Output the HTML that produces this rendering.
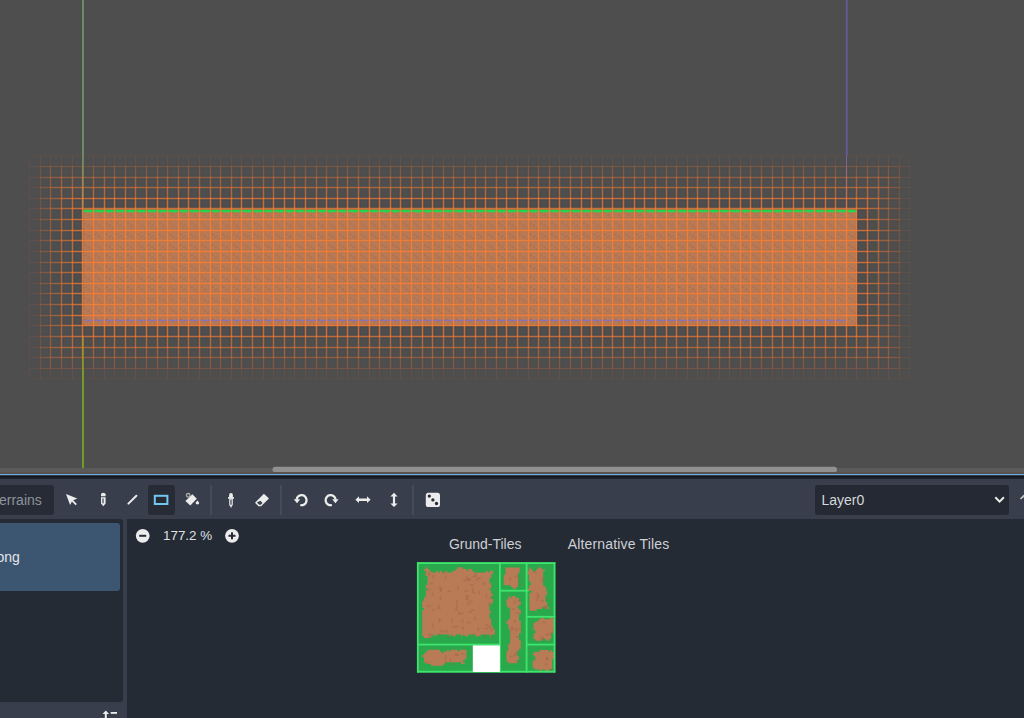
<!DOCTYPE html>
<html><head><meta charset="utf-8"><style>
*{margin:0;padding:0;box-sizing:border-box}
html,body{width:1024px;height:718px;overflow:hidden;background:#252b35;font-family:"Liberation Sans",sans-serif}
.abs{position:absolute}
#vp{position:absolute;left:0;top:0;width:1024px;height:473px;background:#4e4e4e;overflow:hidden}
.txt{position:absolute;white-space:nowrap;color:#cdd0d4;font-size:14px;line-height:16px}
</style></head><body>
<div id="vp">
<svg width="1024" height="473" style="position:absolute;left:0;top:0">
<rect x="82" y="336" width="2" height="137" fill="#729c2a"/>
<rect x="82" y="0" width="2" height="320" fill="#6a8a6a"/>
<rect x="845.8" y="0" width="2" height="156" fill="#5e5a94"/><rect x="846" y="156" width="1" height="165" fill="#6a64b0"/>
<rect x="82.80" y="208.92" width="774.09" height="116.84" fill="#b97a56"/>
<defs><pattern id="dp" patternUnits="userSpaceOnUse" x="82.800" y="208.920" width="10.604" height="10.622"><g fill="#7a4a30"><rect x="2.0" y="3.8" width="1.6" height="1.0"/><rect x="4.4" y="6.2" width="1.6" height="1.0"/><rect x="5.8" y="5.2" width="1.2" height="1.0"/><rect x="7.6" y="8.0" width="1.4" height="0.9"/></g></pattern></defs><rect x="82.80" y="212.92" width="774.09" height="112.84" fill="url(#dp)" opacity="0.35"/>
<g fill="#22d84a"><polygon points="82.80,209.82 93.40,209.82 93.40,211.62 92.40,213.02 91.20,211.62 90.10,213.12 88.80,211.62 87.60,213.22 86.40,211.62 85.20,212.72 84.00,211.62 82.80,211.62"/><polygon points="93.40,209.82 104.01,209.82 104.01,211.62 103.01,213.02 101.81,211.62 100.71,213.12 99.41,211.62 98.21,213.22 97.01,211.62 95.81,212.72 94.61,211.62 93.40,211.62"/><polygon points="104.01,209.82 114.61,209.82 114.61,211.62 113.61,213.02 112.41,211.62 111.31,213.12 110.01,211.62 108.81,213.22 107.61,211.62 106.41,212.72 105.21,211.62 104.01,211.62"/><polygon points="114.61,209.82 125.22,209.82 125.22,211.62 124.22,213.02 123.02,211.62 121.92,213.12 120.62,211.62 119.42,213.22 118.22,211.62 117.02,212.72 115.82,211.62 114.61,211.62"/><polygon points="125.22,209.82 135.82,209.82 135.82,211.62 134.82,213.02 133.62,211.62 132.52,213.12 131.22,211.62 130.02,213.22 128.82,211.62 127.62,212.72 126.42,211.62 125.22,211.62"/><polygon points="135.82,209.82 146.42,209.82 146.42,211.62 145.42,213.02 144.22,211.62 143.12,213.12 141.82,211.62 140.62,213.22 139.42,211.62 138.22,212.72 137.02,211.62 135.82,211.62"/><polygon points="146.42,209.82 157.03,209.82 157.03,211.62 156.03,213.02 154.83,211.62 153.73,213.12 152.43,211.62 151.23,213.22 150.03,211.62 148.83,212.72 147.63,211.62 146.42,211.62"/><polygon points="157.03,209.82 167.63,209.82 167.63,211.62 166.63,213.02 165.43,211.62 164.33,213.12 163.03,211.62 161.83,213.22 160.63,211.62 159.43,212.72 158.23,211.62 157.03,211.62"/><polygon points="167.63,209.82 178.24,209.82 178.24,211.62 177.24,213.02 176.04,211.62 174.94,213.12 173.64,211.62 172.44,213.22 171.24,211.62 170.04,212.72 168.84,211.62 167.63,211.62"/><polygon points="178.24,209.82 188.84,209.82 188.84,211.62 187.84,213.02 186.64,211.62 185.54,213.12 184.24,211.62 183.04,213.22 181.84,211.62 180.64,212.72 179.44,211.62 178.24,211.62"/><polygon points="188.84,209.82 199.44,209.82 199.44,211.62 198.44,213.02 197.24,211.62 196.14,213.12 194.84,211.62 193.64,213.22 192.44,211.62 191.24,212.72 190.04,211.62 188.84,211.62"/><polygon points="199.44,209.82 210.05,209.82 210.05,211.62 209.05,213.02 207.85,211.62 206.75,213.12 205.45,211.62 204.25,213.22 203.05,211.62 201.85,212.72 200.65,211.62 199.44,211.62"/><polygon points="210.05,209.82 220.65,209.82 220.65,211.62 219.65,213.02 218.45,211.62 217.35,213.12 216.05,211.62 214.85,213.22 213.65,211.62 212.45,212.72 211.25,211.62 210.05,211.62"/><polygon points="220.65,209.82 231.26,209.82 231.26,211.62 230.26,213.02 229.06,211.62 227.96,213.12 226.66,211.62 225.46,213.22 224.26,211.62 223.06,212.72 221.86,211.62 220.65,211.62"/><polygon points="231.26,209.82 241.86,209.82 241.86,211.62 240.86,213.02 239.66,211.62 238.56,213.12 237.26,211.62 236.06,213.22 234.86,211.62 233.66,212.72 232.46,211.62 231.26,211.62"/><polygon points="241.86,209.82 252.46,209.82 252.46,211.62 251.46,213.02 250.26,211.62 249.16,213.12 247.86,211.62 246.66,213.22 245.46,211.62 244.26,212.72 243.06,211.62 241.86,211.62"/><polygon points="252.46,209.82 263.07,209.82 263.07,211.62 262.07,213.02 260.87,211.62 259.77,213.12 258.47,211.62 257.27,213.22 256.07,211.62 254.87,212.72 253.67,211.62 252.46,211.62"/><polygon points="263.07,209.82 273.67,209.82 273.67,211.62 272.67,213.02 271.47,211.62 270.37,213.12 269.07,211.62 267.87,213.22 266.67,211.62 265.47,212.72 264.27,211.62 263.07,211.62"/><polygon points="273.67,209.82 284.28,209.82 284.28,211.62 283.28,213.02 282.08,211.62 280.98,213.12 279.68,211.62 278.48,213.22 277.28,211.62 276.08,212.72 274.88,211.62 273.67,211.62"/><polygon points="284.28,209.82 294.88,209.82 294.88,211.62 293.88,213.02 292.68,211.62 291.58,213.12 290.28,211.62 289.08,213.22 287.88,211.62 286.68,212.72 285.48,211.62 284.28,211.62"/><polygon points="294.88,209.82 305.48,209.82 305.48,211.62 304.48,213.02 303.28,211.62 302.18,213.12 300.88,211.62 299.68,213.22 298.48,211.62 297.28,212.72 296.08,211.62 294.88,211.62"/><polygon points="305.48,209.82 316.09,209.82 316.09,211.62 315.09,213.02 313.89,211.62 312.79,213.12 311.49,211.62 310.29,213.22 309.09,211.62 307.89,212.72 306.69,211.62 305.48,211.62"/><polygon points="316.09,209.82 326.69,209.82 326.69,211.62 325.69,213.02 324.49,211.62 323.39,213.12 322.09,211.62 320.89,213.22 319.69,211.62 318.49,212.72 317.29,211.62 316.09,211.62"/><polygon points="326.69,209.82 337.30,209.82 337.30,211.62 336.30,213.02 335.10,211.62 334.00,213.12 332.70,211.62 331.50,213.22 330.30,211.62 329.10,212.72 327.90,211.62 326.69,211.62"/><polygon points="337.30,209.82 347.90,209.82 347.90,211.62 346.90,213.02 345.70,211.62 344.60,213.12 343.30,211.62 342.10,213.22 340.90,211.62 339.70,212.72 338.50,211.62 337.30,211.62"/><polygon points="347.90,209.82 358.50,209.82 358.50,211.62 357.50,213.02 356.30,211.62 355.20,213.12 353.90,211.62 352.70,213.22 351.50,211.62 350.30,212.72 349.10,211.62 347.90,211.62"/><polygon points="358.50,209.82 369.11,209.82 369.11,211.62 368.11,213.02 366.91,211.62 365.81,213.12 364.51,211.62 363.31,213.22 362.11,211.62 360.91,212.72 359.71,211.62 358.50,211.62"/><polygon points="369.11,209.82 379.71,209.82 379.71,211.62 378.71,213.02 377.51,211.62 376.41,213.12 375.11,211.62 373.91,213.22 372.71,211.62 371.51,212.72 370.31,211.62 369.11,211.62"/><polygon points="379.71,209.82 390.32,209.82 390.32,211.62 389.32,213.02 388.12,211.62 387.02,213.12 385.72,211.62 384.52,213.22 383.32,211.62 382.12,212.72 380.92,211.62 379.71,211.62"/><polygon points="390.32,209.82 400.92,209.82 400.92,211.62 399.92,213.02 398.72,211.62 397.62,213.12 396.32,211.62 395.12,213.22 393.92,211.62 392.72,212.72 391.52,211.62 390.32,211.62"/><polygon points="400.92,209.82 411.52,209.82 411.52,211.62 410.52,213.02 409.32,211.62 408.22,213.12 406.92,211.62 405.72,213.22 404.52,211.62 403.32,212.72 402.12,211.62 400.92,211.62"/><polygon points="411.52,209.82 422.13,209.82 422.13,211.62 421.13,213.02 419.93,211.62 418.83,213.12 417.53,211.62 416.33,213.22 415.13,211.62 413.93,212.72 412.73,211.62 411.52,211.62"/><polygon points="422.13,209.82 432.73,209.82 432.73,211.62 431.73,213.02 430.53,211.62 429.43,213.12 428.13,211.62 426.93,213.22 425.73,211.62 424.53,212.72 423.33,211.62 422.13,211.62"/><polygon points="432.73,209.82 443.34,209.82 443.34,211.62 442.34,213.02 441.14,211.62 440.04,213.12 438.74,211.62 437.54,213.22 436.34,211.62 435.14,212.72 433.94,211.62 432.73,211.62"/><polygon points="443.34,209.82 453.94,209.82 453.94,211.62 452.94,213.02 451.74,211.62 450.64,213.12 449.34,211.62 448.14,213.22 446.94,211.62 445.74,212.72 444.54,211.62 443.34,211.62"/><polygon points="453.94,209.82 464.54,209.82 464.54,211.62 463.54,213.02 462.34,211.62 461.24,213.12 459.94,211.62 458.74,213.22 457.54,211.62 456.34,212.72 455.14,211.62 453.94,211.62"/><polygon points="464.54,209.82 475.15,209.82 475.15,211.62 474.15,213.02 472.95,211.62 471.85,213.12 470.55,211.62 469.35,213.22 468.15,211.62 466.95,212.72 465.75,211.62 464.54,211.62"/><polygon points="475.15,209.82 485.75,209.82 485.75,211.62 484.75,213.02 483.55,211.62 482.45,213.12 481.15,211.62 479.95,213.22 478.75,211.62 477.55,212.72 476.35,211.62 475.15,211.62"/><polygon points="485.75,209.82 496.36,209.82 496.36,211.62 495.36,213.02 494.16,211.62 493.06,213.12 491.76,211.62 490.56,213.22 489.36,211.62 488.16,212.72 486.96,211.62 485.75,211.62"/><polygon points="496.36,209.82 506.96,209.82 506.96,211.62 505.96,213.02 504.76,211.62 503.66,213.12 502.36,211.62 501.16,213.22 499.96,211.62 498.76,212.72 497.56,211.62 496.36,211.62"/><polygon points="506.96,209.82 517.56,209.82 517.56,211.62 516.56,213.02 515.36,211.62 514.26,213.12 512.96,211.62 511.76,213.22 510.56,211.62 509.36,212.72 508.16,211.62 506.96,211.62"/><polygon points="517.56,209.82 528.17,209.82 528.17,211.62 527.17,213.02 525.97,211.62 524.87,213.12 523.57,211.62 522.37,213.22 521.17,211.62 519.97,212.72 518.77,211.62 517.56,211.62"/><polygon points="528.17,209.82 538.77,209.82 538.77,211.62 537.77,213.02 536.57,211.62 535.47,213.12 534.17,211.62 532.97,213.22 531.77,211.62 530.57,212.72 529.37,211.62 528.17,211.62"/><polygon points="538.77,209.82 549.38,209.82 549.38,211.62 548.38,213.02 547.18,211.62 546.08,213.12 544.78,211.62 543.58,213.22 542.38,211.62 541.18,212.72 539.98,211.62 538.77,211.62"/><polygon points="549.38,209.82 559.98,209.82 559.98,211.62 558.98,213.02 557.78,211.62 556.68,213.12 555.38,211.62 554.18,213.22 552.98,211.62 551.78,212.72 550.58,211.62 549.38,211.62"/><polygon points="559.98,209.82 570.58,209.82 570.58,211.62 569.58,213.02 568.38,211.62 567.28,213.12 565.98,211.62 564.78,213.22 563.58,211.62 562.38,212.72 561.18,211.62 559.98,211.62"/><polygon points="570.58,209.82 581.19,209.82 581.19,211.62 580.19,213.02 578.99,211.62 577.89,213.12 576.59,211.62 575.39,213.22 574.19,211.62 572.99,212.72 571.79,211.62 570.58,211.62"/><polygon points="581.19,209.82 591.79,209.82 591.79,211.62 590.79,213.02 589.59,211.62 588.49,213.12 587.19,211.62 585.99,213.22 584.79,211.62 583.59,212.72 582.39,211.62 581.19,211.62"/><polygon points="591.79,209.82 602.40,209.82 602.40,211.62 601.40,213.02 600.20,211.62 599.10,213.12 597.80,211.62 596.60,213.22 595.40,211.62 594.20,212.72 593.00,211.62 591.79,211.62"/><polygon points="602.40,209.82 613.00,209.82 613.00,211.62 612.00,213.02 610.80,211.62 609.70,213.12 608.40,211.62 607.20,213.22 606.00,211.62 604.80,212.72 603.60,211.62 602.40,211.62"/><polygon points="613.00,209.82 623.60,209.82 623.60,211.62 622.60,213.02 621.40,211.62 620.30,213.12 619.00,211.62 617.80,213.22 616.60,211.62 615.40,212.72 614.20,211.62 613.00,211.62"/><polygon points="623.60,209.82 634.21,209.82 634.21,211.62 633.21,213.02 632.01,211.62 630.91,213.12 629.61,211.62 628.41,213.22 627.21,211.62 626.01,212.72 624.81,211.62 623.60,211.62"/><polygon points="634.21,209.82 644.81,209.82 644.81,211.62 643.81,213.02 642.61,211.62 641.51,213.12 640.21,211.62 639.01,213.22 637.81,211.62 636.61,212.72 635.41,211.62 634.21,211.62"/><polygon points="644.81,209.82 655.42,209.82 655.42,211.62 654.42,213.02 653.22,211.62 652.12,213.12 650.82,211.62 649.62,213.22 648.42,211.62 647.22,212.72 646.02,211.62 644.81,211.62"/><polygon points="655.42,209.82 666.02,209.82 666.02,211.62 665.02,213.02 663.82,211.62 662.72,213.12 661.42,211.62 660.22,213.22 659.02,211.62 657.82,212.72 656.62,211.62 655.42,211.62"/><polygon points="666.02,209.82 676.62,209.82 676.62,211.62 675.62,213.02 674.42,211.62 673.32,213.12 672.02,211.62 670.82,213.22 669.62,211.62 668.42,212.72 667.22,211.62 666.02,211.62"/><polygon points="676.62,209.82 687.23,209.82 687.23,211.62 686.23,213.02 685.03,211.62 683.93,213.12 682.63,211.62 681.43,213.22 680.23,211.62 679.03,212.72 677.83,211.62 676.62,211.62"/><polygon points="687.23,209.82 697.83,209.82 697.83,211.62 696.83,213.02 695.63,211.62 694.53,213.12 693.23,211.62 692.03,213.22 690.83,211.62 689.63,212.72 688.43,211.62 687.23,211.62"/><polygon points="697.83,209.82 708.44,209.82 708.44,211.62 707.44,213.02 706.24,211.62 705.14,213.12 703.84,211.62 702.64,213.22 701.44,211.62 700.24,212.72 699.04,211.62 697.83,211.62"/><polygon points="708.44,209.82 719.04,209.82 719.04,211.62 718.04,213.02 716.84,211.62 715.74,213.12 714.44,211.62 713.24,213.22 712.04,211.62 710.84,212.72 709.64,211.62 708.44,211.62"/><polygon points="719.04,209.82 729.64,209.82 729.64,211.62 728.64,213.02 727.44,211.62 726.34,213.12 725.04,211.62 723.84,213.22 722.64,211.62 721.44,212.72 720.24,211.62 719.04,211.62"/><polygon points="729.64,209.82 740.25,209.82 740.25,211.62 739.25,213.02 738.05,211.62 736.95,213.12 735.65,211.62 734.45,213.22 733.25,211.62 732.05,212.72 730.85,211.62 729.64,211.62"/><polygon points="740.25,209.82 750.85,209.82 750.85,211.62 749.85,213.02 748.65,211.62 747.55,213.12 746.25,211.62 745.05,213.22 743.85,211.62 742.65,212.72 741.45,211.62 740.25,211.62"/><polygon points="750.85,209.82 761.46,209.82 761.46,211.62 760.46,213.02 759.26,211.62 758.16,213.12 756.86,211.62 755.66,213.22 754.46,211.62 753.26,212.72 752.06,211.62 750.85,211.62"/><polygon points="761.46,209.82 772.06,209.82 772.06,211.62 771.06,213.02 769.86,211.62 768.76,213.12 767.46,211.62 766.26,213.22 765.06,211.62 763.86,212.72 762.66,211.62 761.46,211.62"/><polygon points="772.06,209.82 782.66,209.82 782.66,211.62 781.66,213.02 780.46,211.62 779.36,213.12 778.06,211.62 776.86,213.22 775.66,211.62 774.46,212.72 773.26,211.62 772.06,211.62"/><polygon points="782.66,209.82 793.27,209.82 793.27,211.62 792.27,213.02 791.07,211.62 789.97,213.12 788.67,211.62 787.47,213.22 786.27,211.62 785.07,212.72 783.87,211.62 782.66,211.62"/><polygon points="793.27,209.82 803.87,209.82 803.87,211.62 802.87,213.02 801.67,211.62 800.57,213.12 799.27,211.62 798.07,213.22 796.87,211.62 795.67,212.72 794.47,211.62 793.27,211.62"/><polygon points="803.87,209.82 814.48,209.82 814.48,211.62 813.48,213.02 812.28,211.62 811.18,213.12 809.88,211.62 808.68,213.22 807.48,211.62 806.28,212.72 805.08,211.62 803.87,211.62"/><polygon points="814.48,209.82 825.08,209.82 825.08,211.62 824.08,213.02 822.88,211.62 821.78,213.12 820.48,211.62 819.28,213.22 818.08,211.62 816.88,212.72 815.68,211.62 814.48,211.62"/><polygon points="825.08,209.82 835.68,209.82 835.68,211.62 834.68,213.02 833.48,211.62 832.38,213.12 831.08,211.62 829.88,213.22 828.68,211.62 827.48,212.72 826.28,211.62 825.08,211.62"/><polygon points="835.68,209.82 846.29,209.82 846.29,211.62 845.29,213.02 844.09,211.62 842.99,213.12 841.69,211.62 840.49,213.22 839.29,211.62 838.09,212.72 836.89,211.62 835.68,211.62"/><polygon points="846.29,209.82 856.89,209.82 856.89,211.62 855.89,213.02 854.69,211.62 853.59,213.12 852.29,211.62 851.09,213.22 849.89,211.62 848.69,212.72 847.49,211.62 846.29,211.62"/></g>
<g fill="#e06050" fill-opacity="0.7"><rect x="84.60" y="212.82" width="1.2" height="1.2"/><rect x="88.00" y="212.82" width="1.2" height="1.2"/><rect x="91.20" y="212.82" width="1.2" height="1.2"/><rect x="95.20" y="212.82" width="1.2" height="1.2"/><rect x="98.60" y="212.82" width="1.2" height="1.2"/><rect x="101.80" y="212.82" width="1.2" height="1.2"/><rect x="105.81" y="212.82" width="1.2" height="1.2"/><rect x="109.21" y="212.82" width="1.2" height="1.2"/><rect x="112.41" y="212.82" width="1.2" height="1.2"/><rect x="116.41" y="212.82" width="1.2" height="1.2"/><rect x="119.81" y="212.82" width="1.2" height="1.2"/><rect x="123.01" y="212.82" width="1.2" height="1.2"/><rect x="127.02" y="212.82" width="1.2" height="1.2"/><rect x="130.42" y="212.82" width="1.2" height="1.2"/><rect x="133.62" y="212.82" width="1.2" height="1.2"/><rect x="137.62" y="212.82" width="1.2" height="1.2"/><rect x="141.02" y="212.82" width="1.2" height="1.2"/><rect x="144.22" y="212.82" width="1.2" height="1.2"/><rect x="148.22" y="212.82" width="1.2" height="1.2"/><rect x="151.62" y="212.82" width="1.2" height="1.2"/><rect x="154.82" y="212.82" width="1.2" height="1.2"/><rect x="158.83" y="212.82" width="1.2" height="1.2"/><rect x="162.23" y="212.82" width="1.2" height="1.2"/><rect x="165.43" y="212.82" width="1.2" height="1.2"/><rect x="169.43" y="212.82" width="1.2" height="1.2"/><rect x="172.83" y="212.82" width="1.2" height="1.2"/><rect x="176.03" y="212.82" width="1.2" height="1.2"/><rect x="180.04" y="212.82" width="1.2" height="1.2"/><rect x="183.44" y="212.82" width="1.2" height="1.2"/><rect x="186.64" y="212.82" width="1.2" height="1.2"/><rect x="190.64" y="212.82" width="1.2" height="1.2"/><rect x="194.04" y="212.82" width="1.2" height="1.2"/><rect x="197.24" y="212.82" width="1.2" height="1.2"/><rect x="201.24" y="212.82" width="1.2" height="1.2"/><rect x="204.64" y="212.82" width="1.2" height="1.2"/><rect x="207.84" y="212.82" width="1.2" height="1.2"/><rect x="211.85" y="212.82" width="1.2" height="1.2"/><rect x="215.25" y="212.82" width="1.2" height="1.2"/><rect x="218.45" y="212.82" width="1.2" height="1.2"/><rect x="222.45" y="212.82" width="1.2" height="1.2"/><rect x="225.85" y="212.82" width="1.2" height="1.2"/><rect x="229.05" y="212.82" width="1.2" height="1.2"/><rect x="233.06" y="212.82" width="1.2" height="1.2"/><rect x="236.46" y="212.82" width="1.2" height="1.2"/><rect x="239.66" y="212.82" width="1.2" height="1.2"/><rect x="243.66" y="212.82" width="1.2" height="1.2"/><rect x="247.06" y="212.82" width="1.2" height="1.2"/><rect x="250.26" y="212.82" width="1.2" height="1.2"/><rect x="254.26" y="212.82" width="1.2" height="1.2"/><rect x="257.66" y="212.82" width="1.2" height="1.2"/><rect x="260.86" y="212.82" width="1.2" height="1.2"/><rect x="264.87" y="212.82" width="1.2" height="1.2"/><rect x="268.27" y="212.82" width="1.2" height="1.2"/><rect x="271.47" y="212.82" width="1.2" height="1.2"/><rect x="275.47" y="212.82" width="1.2" height="1.2"/><rect x="278.87" y="212.82" width="1.2" height="1.2"/><rect x="282.07" y="212.82" width="1.2" height="1.2"/><rect x="286.08" y="212.82" width="1.2" height="1.2"/><rect x="289.48" y="212.82" width="1.2" height="1.2"/><rect x="292.68" y="212.82" width="1.2" height="1.2"/><rect x="296.68" y="212.82" width="1.2" height="1.2"/><rect x="300.08" y="212.82" width="1.2" height="1.2"/><rect x="303.28" y="212.82" width="1.2" height="1.2"/><rect x="307.28" y="212.82" width="1.2" height="1.2"/><rect x="310.68" y="212.82" width="1.2" height="1.2"/><rect x="313.88" y="212.82" width="1.2" height="1.2"/><rect x="317.89" y="212.82" width="1.2" height="1.2"/><rect x="321.29" y="212.82" width="1.2" height="1.2"/><rect x="324.49" y="212.82" width="1.2" height="1.2"/><rect x="328.49" y="212.82" width="1.2" height="1.2"/><rect x="331.89" y="212.82" width="1.2" height="1.2"/><rect x="335.09" y="212.82" width="1.2" height="1.2"/><rect x="339.10" y="212.82" width="1.2" height="1.2"/><rect x="342.50" y="212.82" width="1.2" height="1.2"/><rect x="345.70" y="212.82" width="1.2" height="1.2"/><rect x="349.70" y="212.82" width="1.2" height="1.2"/><rect x="353.10" y="212.82" width="1.2" height="1.2"/><rect x="356.30" y="212.82" width="1.2" height="1.2"/><rect x="360.30" y="212.82" width="1.2" height="1.2"/><rect x="363.70" y="212.82" width="1.2" height="1.2"/><rect x="366.90" y="212.82" width="1.2" height="1.2"/><rect x="370.91" y="212.82" width="1.2" height="1.2"/><rect x="374.31" y="212.82" width="1.2" height="1.2"/><rect x="377.51" y="212.82" width="1.2" height="1.2"/><rect x="381.51" y="212.82" width="1.2" height="1.2"/><rect x="384.91" y="212.82" width="1.2" height="1.2"/><rect x="388.11" y="212.82" width="1.2" height="1.2"/><rect x="392.12" y="212.82" width="1.2" height="1.2"/><rect x="395.52" y="212.82" width="1.2" height="1.2"/><rect x="398.72" y="212.82" width="1.2" height="1.2"/><rect x="402.72" y="212.82" width="1.2" height="1.2"/><rect x="406.12" y="212.82" width="1.2" height="1.2"/><rect x="409.32" y="212.82" width="1.2" height="1.2"/><rect x="413.32" y="212.82" width="1.2" height="1.2"/><rect x="416.72" y="212.82" width="1.2" height="1.2"/><rect x="419.92" y="212.82" width="1.2" height="1.2"/><rect x="423.93" y="212.82" width="1.2" height="1.2"/><rect x="427.33" y="212.82" width="1.2" height="1.2"/><rect x="430.53" y="212.82" width="1.2" height="1.2"/><rect x="434.53" y="212.82" width="1.2" height="1.2"/><rect x="437.93" y="212.82" width="1.2" height="1.2"/><rect x="441.13" y="212.82" width="1.2" height="1.2"/><rect x="445.14" y="212.82" width="1.2" height="1.2"/><rect x="448.54" y="212.82" width="1.2" height="1.2"/><rect x="451.74" y="212.82" width="1.2" height="1.2"/><rect x="455.74" y="212.82" width="1.2" height="1.2"/><rect x="459.14" y="212.82" width="1.2" height="1.2"/><rect x="462.34" y="212.82" width="1.2" height="1.2"/><rect x="466.34" y="212.82" width="1.2" height="1.2"/><rect x="469.74" y="212.82" width="1.2" height="1.2"/><rect x="472.94" y="212.82" width="1.2" height="1.2"/><rect x="476.95" y="212.82" width="1.2" height="1.2"/><rect x="480.35" y="212.82" width="1.2" height="1.2"/><rect x="483.55" y="212.82" width="1.2" height="1.2"/><rect x="487.55" y="212.82" width="1.2" height="1.2"/><rect x="490.95" y="212.82" width="1.2" height="1.2"/><rect x="494.15" y="212.82" width="1.2" height="1.2"/><rect x="498.16" y="212.82" width="1.2" height="1.2"/><rect x="501.56" y="212.82" width="1.2" height="1.2"/><rect x="504.76" y="212.82" width="1.2" height="1.2"/><rect x="508.76" y="212.82" width="1.2" height="1.2"/><rect x="512.16" y="212.82" width="1.2" height="1.2"/><rect x="515.36" y="212.82" width="1.2" height="1.2"/><rect x="519.36" y="212.82" width="1.2" height="1.2"/><rect x="522.76" y="212.82" width="1.2" height="1.2"/><rect x="525.96" y="212.82" width="1.2" height="1.2"/><rect x="529.97" y="212.82" width="1.2" height="1.2"/><rect x="533.37" y="212.82" width="1.2" height="1.2"/><rect x="536.57" y="212.82" width="1.2" height="1.2"/><rect x="540.57" y="212.82" width="1.2" height="1.2"/><rect x="543.97" y="212.82" width="1.2" height="1.2"/><rect x="547.17" y="212.82" width="1.2" height="1.2"/><rect x="551.18" y="212.82" width="1.2" height="1.2"/><rect x="554.58" y="212.82" width="1.2" height="1.2"/><rect x="557.78" y="212.82" width="1.2" height="1.2"/><rect x="561.78" y="212.82" width="1.2" height="1.2"/><rect x="565.18" y="212.82" width="1.2" height="1.2"/><rect x="568.38" y="212.82" width="1.2" height="1.2"/><rect x="572.38" y="212.82" width="1.2" height="1.2"/><rect x="575.78" y="212.82" width="1.2" height="1.2"/><rect x="578.98" y="212.82" width="1.2" height="1.2"/><rect x="582.99" y="212.82" width="1.2" height="1.2"/><rect x="586.39" y="212.82" width="1.2" height="1.2"/><rect x="589.59" y="212.82" width="1.2" height="1.2"/><rect x="593.59" y="212.82" width="1.2" height="1.2"/><rect x="596.99" y="212.82" width="1.2" height="1.2"/><rect x="600.19" y="212.82" width="1.2" height="1.2"/><rect x="604.20" y="212.82" width="1.2" height="1.2"/><rect x="607.60" y="212.82" width="1.2" height="1.2"/><rect x="610.80" y="212.82" width="1.2" height="1.2"/><rect x="614.80" y="212.82" width="1.2" height="1.2"/><rect x="618.20" y="212.82" width="1.2" height="1.2"/><rect x="621.40" y="212.82" width="1.2" height="1.2"/><rect x="625.40" y="212.82" width="1.2" height="1.2"/><rect x="628.80" y="212.82" width="1.2" height="1.2"/><rect x="632.00" y="212.82" width="1.2" height="1.2"/><rect x="636.01" y="212.82" width="1.2" height="1.2"/><rect x="639.41" y="212.82" width="1.2" height="1.2"/><rect x="642.61" y="212.82" width="1.2" height="1.2"/><rect x="646.61" y="212.82" width="1.2" height="1.2"/><rect x="650.01" y="212.82" width="1.2" height="1.2"/><rect x="653.21" y="212.82" width="1.2" height="1.2"/><rect x="657.22" y="212.82" width="1.2" height="1.2"/><rect x="660.62" y="212.82" width="1.2" height="1.2"/><rect x="663.82" y="212.82" width="1.2" height="1.2"/><rect x="667.82" y="212.82" width="1.2" height="1.2"/><rect x="671.22" y="212.82" width="1.2" height="1.2"/><rect x="674.42" y="212.82" width="1.2" height="1.2"/><rect x="678.42" y="212.82" width="1.2" height="1.2"/><rect x="681.82" y="212.82" width="1.2" height="1.2"/><rect x="685.02" y="212.82" width="1.2" height="1.2"/><rect x="689.03" y="212.82" width="1.2" height="1.2"/><rect x="692.43" y="212.82" width="1.2" height="1.2"/><rect x="695.63" y="212.82" width="1.2" height="1.2"/><rect x="699.63" y="212.82" width="1.2" height="1.2"/><rect x="703.03" y="212.82" width="1.2" height="1.2"/><rect x="706.23" y="212.82" width="1.2" height="1.2"/><rect x="710.24" y="212.82" width="1.2" height="1.2"/><rect x="713.64" y="212.82" width="1.2" height="1.2"/><rect x="716.84" y="212.82" width="1.2" height="1.2"/><rect x="720.84" y="212.82" width="1.2" height="1.2"/><rect x="724.24" y="212.82" width="1.2" height="1.2"/><rect x="727.44" y="212.82" width="1.2" height="1.2"/><rect x="731.44" y="212.82" width="1.2" height="1.2"/><rect x="734.84" y="212.82" width="1.2" height="1.2"/><rect x="738.04" y="212.82" width="1.2" height="1.2"/><rect x="742.05" y="212.82" width="1.2" height="1.2"/><rect x="745.45" y="212.82" width="1.2" height="1.2"/><rect x="748.65" y="212.82" width="1.2" height="1.2"/><rect x="752.65" y="212.82" width="1.2" height="1.2"/><rect x="756.05" y="212.82" width="1.2" height="1.2"/><rect x="759.25" y="212.82" width="1.2" height="1.2"/><rect x="763.26" y="212.82" width="1.2" height="1.2"/><rect x="766.66" y="212.82" width="1.2" height="1.2"/><rect x="769.86" y="212.82" width="1.2" height="1.2"/><rect x="773.86" y="212.82" width="1.2" height="1.2"/><rect x="777.26" y="212.82" width="1.2" height="1.2"/><rect x="780.46" y="212.82" width="1.2" height="1.2"/><rect x="784.46" y="212.82" width="1.2" height="1.2"/><rect x="787.86" y="212.82" width="1.2" height="1.2"/><rect x="791.06" y="212.82" width="1.2" height="1.2"/><rect x="795.07" y="212.82" width="1.2" height="1.2"/><rect x="798.47" y="212.82" width="1.2" height="1.2"/><rect x="801.67" y="212.82" width="1.2" height="1.2"/><rect x="805.67" y="212.82" width="1.2" height="1.2"/><rect x="809.07" y="212.82" width="1.2" height="1.2"/><rect x="812.27" y="212.82" width="1.2" height="1.2"/><rect x="816.28" y="212.82" width="1.2" height="1.2"/><rect x="819.68" y="212.82" width="1.2" height="1.2"/><rect x="822.88" y="212.82" width="1.2" height="1.2"/><rect x="826.88" y="212.82" width="1.2" height="1.2"/><rect x="830.28" y="212.82" width="1.2" height="1.2"/><rect x="833.48" y="212.82" width="1.2" height="1.2"/><rect x="837.48" y="212.82" width="1.2" height="1.2"/><rect x="840.88" y="212.82" width="1.2" height="1.2"/><rect x="844.08" y="212.82" width="1.2" height="1.2"/><rect x="848.09" y="212.82" width="1.2" height="1.2"/><rect x="851.49" y="212.82" width="1.2" height="1.2"/><rect x="854.69" y="212.82" width="1.2" height="1.2"/></g>
<rect x="84" y="319.8" width="762" height="1.3" fill="#7870dc" fill-opacity="0.75"/>
<mask id="hm"><rect x="0" y="0" width="1024" height="473" fill="#fff"/><rect x="83.80" y="209.92" width="772.09" height="114.84" fill="#444"/></mask><g fill="#102848" mask="url(#hm)"><rect x="27.70" y="155.81" width="3.60" height="223.06" fill-opacity="0.011"/><rect x="38.70" y="155.81" width="3.60" height="10.62" fill-opacity="0.022"/><rect x="38.70" y="166.43" width="3.60" height="201.82" fill-opacity="0.042"/><rect x="38.70" y="368.25" width="3.60" height="10.62" fill-opacity="0.022"/><rect x="48.70" y="155.81" width="3.60" height="10.62" fill-opacity="0.022"/><rect x="48.70" y="166.43" width="3.60" height="10.62" fill-opacity="0.061"/><rect x="48.70" y="177.05" width="3.60" height="180.57" fill-opacity="0.080"/><rect x="48.70" y="357.63" width="3.60" height="10.62" fill-opacity="0.061"/><rect x="48.70" y="368.25" width="3.60" height="10.62" fill-opacity="0.022"/><rect x="59.70" y="155.81" width="3.60" height="10.62" fill-opacity="0.022"/><rect x="59.70" y="166.43" width="3.60" height="10.62" fill-opacity="0.061"/><rect x="59.70" y="177.05" width="3.60" height="10.62" fill-opacity="0.096"/><rect x="59.70" y="187.68" width="3.60" height="159.33" fill-opacity="0.113"/><rect x="59.70" y="347.01" width="3.60" height="10.62" fill-opacity="0.096"/><rect x="59.70" y="357.63" width="3.60" height="10.62" fill-opacity="0.061"/><rect x="59.70" y="368.25" width="3.60" height="10.62" fill-opacity="0.022"/><rect x="70.70" y="155.81" width="3.60" height="10.62" fill-opacity="0.022"/><rect x="70.70" y="166.43" width="3.60" height="10.62" fill-opacity="0.061"/><rect x="70.70" y="177.05" width="3.60" height="10.62" fill-opacity="0.096"/><rect x="70.70" y="187.68" width="3.60" height="10.62" fill-opacity="0.127"/><rect x="70.70" y="198.30" width="3.60" height="138.09" fill-opacity="0.141"/><rect x="70.70" y="336.38" width="3.60" height="10.62" fill-opacity="0.127"/><rect x="70.70" y="347.01" width="3.60" height="10.62" fill-opacity="0.096"/><rect x="70.70" y="357.63" width="3.60" height="10.62" fill-opacity="0.061"/><rect x="70.70" y="368.25" width="3.60" height="10.62" fill-opacity="0.022"/><rect x="80.70" y="155.81" width="3.60" height="10.62" fill-opacity="0.022"/><rect x="80.70" y="166.43" width="3.60" height="10.62" fill-opacity="0.061"/><rect x="80.70" y="177.05" width="3.60" height="10.62" fill-opacity="0.096"/><rect x="80.70" y="187.68" width="3.60" height="10.62" fill-opacity="0.127"/><rect x="80.70" y="198.30" width="3.60" height="10.62" fill-opacity="0.154"/><rect x="80.70" y="208.92" width="3.60" height="116.84" fill-opacity="0.160"/><rect x="80.70" y="325.76" width="3.60" height="10.62" fill-opacity="0.154"/><rect x="80.70" y="336.38" width="3.60" height="10.62" fill-opacity="0.127"/><rect x="80.70" y="347.01" width="3.60" height="10.62" fill-opacity="0.096"/><rect x="80.70" y="357.63" width="3.60" height="10.62" fill-opacity="0.061"/><rect x="80.70" y="368.25" width="3.60" height="10.62" fill-opacity="0.022"/><rect x="91.70" y="155.81" width="3.60" height="10.62" fill-opacity="0.022"/><rect x="91.70" y="166.43" width="3.60" height="10.62" fill-opacity="0.061"/><rect x="91.70" y="177.05" width="3.60" height="10.62" fill-opacity="0.096"/><rect x="91.70" y="187.68" width="3.60" height="10.62" fill-opacity="0.127"/><rect x="91.70" y="198.30" width="3.60" height="10.62" fill-opacity="0.154"/><rect x="91.70" y="208.92" width="3.60" height="116.84" fill-opacity="0.165"/><rect x="91.70" y="325.76" width="3.60" height="10.62" fill-opacity="0.154"/><rect x="91.70" y="336.38" width="3.60" height="10.62" fill-opacity="0.127"/><rect x="91.70" y="347.01" width="3.60" height="10.62" fill-opacity="0.096"/><rect x="91.70" y="357.63" width="3.60" height="10.62" fill-opacity="0.061"/><rect x="91.70" y="368.25" width="3.60" height="10.62" fill-opacity="0.022"/><rect x="102.70" y="155.81" width="3.60" height="10.62" fill-opacity="0.022"/><rect x="102.70" y="166.43" width="3.60" height="10.62" fill-opacity="0.061"/><rect x="102.70" y="177.05" width="3.60" height="10.62" fill-opacity="0.096"/><rect x="102.70" y="187.68" width="3.60" height="10.62" fill-opacity="0.127"/><rect x="102.70" y="198.30" width="3.60" height="10.62" fill-opacity="0.154"/><rect x="102.70" y="208.92" width="3.60" height="116.84" fill-opacity="0.165"/><rect x="102.70" y="325.76" width="3.60" height="10.62" fill-opacity="0.154"/><rect x="102.70" y="336.38" width="3.60" height="10.62" fill-opacity="0.127"/><rect x="102.70" y="347.01" width="3.60" height="10.62" fill-opacity="0.096"/><rect x="102.70" y="357.63" width="3.60" height="10.62" fill-opacity="0.061"/><rect x="102.70" y="368.25" width="3.60" height="10.62" fill-opacity="0.022"/><rect x="112.70" y="155.81" width="3.60" height="10.62" fill-opacity="0.022"/><rect x="112.70" y="166.43" width="3.60" height="10.62" fill-opacity="0.061"/><rect x="112.70" y="177.05" width="3.60" height="10.62" fill-opacity="0.096"/><rect x="112.70" y="187.68" width="3.60" height="10.62" fill-opacity="0.127"/><rect x="112.70" y="198.30" width="3.60" height="10.62" fill-opacity="0.154"/><rect x="112.70" y="208.92" width="3.60" height="116.84" fill-opacity="0.165"/><rect x="112.70" y="325.76" width="3.60" height="10.62" fill-opacity="0.154"/><rect x="112.70" y="336.38" width="3.60" height="10.62" fill-opacity="0.127"/><rect x="112.70" y="347.01" width="3.60" height="10.62" fill-opacity="0.096"/><rect x="112.70" y="357.63" width="3.60" height="10.62" fill-opacity="0.061"/><rect x="112.70" y="368.25" width="3.60" height="10.62" fill-opacity="0.022"/><rect x="123.70" y="155.81" width="3.60" height="10.62" fill-opacity="0.022"/><rect x="123.70" y="166.43" width="3.60" height="10.62" fill-opacity="0.061"/><rect x="123.70" y="177.05" width="3.60" height="10.62" fill-opacity="0.096"/><rect x="123.70" y="187.68" width="3.60" height="10.62" fill-opacity="0.127"/><rect x="123.70" y="198.30" width="3.60" height="10.62" fill-opacity="0.154"/><rect x="123.70" y="208.92" width="3.60" height="116.84" fill-opacity="0.165"/><rect x="123.70" y="325.76" width="3.60" height="10.62" fill-opacity="0.154"/><rect x="123.70" y="336.38" width="3.60" height="10.62" fill-opacity="0.127"/><rect x="123.70" y="347.01" width="3.60" height="10.62" fill-opacity="0.096"/><rect x="123.70" y="357.63" width="3.60" height="10.62" fill-opacity="0.061"/><rect x="123.70" y="368.25" width="3.60" height="10.62" fill-opacity="0.022"/><rect x="133.70" y="155.81" width="3.60" height="10.62" fill-opacity="0.022"/><rect x="133.70" y="166.43" width="3.60" height="10.62" fill-opacity="0.061"/><rect x="133.70" y="177.05" width="3.60" height="10.62" fill-opacity="0.096"/><rect x="133.70" y="187.68" width="3.60" height="10.62" fill-opacity="0.127"/><rect x="133.70" y="198.30" width="3.60" height="10.62" fill-opacity="0.154"/><rect x="133.70" y="208.92" width="3.60" height="116.84" fill-opacity="0.165"/><rect x="133.70" y="325.76" width="3.60" height="10.62" fill-opacity="0.154"/><rect x="133.70" y="336.38" width="3.60" height="10.62" fill-opacity="0.127"/><rect x="133.70" y="347.01" width="3.60" height="10.62" fill-opacity="0.096"/><rect x="133.70" y="357.63" width="3.60" height="10.62" fill-opacity="0.061"/><rect x="133.70" y="368.25" width="3.60" height="10.62" fill-opacity="0.022"/><rect x="144.70" y="155.81" width="3.60" height="10.62" fill-opacity="0.022"/><rect x="144.70" y="166.43" width="3.60" height="10.62" fill-opacity="0.061"/><rect x="144.70" y="177.05" width="3.60" height="10.62" fill-opacity="0.096"/><rect x="144.70" y="187.68" width="3.60" height="10.62" fill-opacity="0.127"/><rect x="144.70" y="198.30" width="3.60" height="10.62" fill-opacity="0.154"/><rect x="144.70" y="208.92" width="3.60" height="116.84" fill-opacity="0.165"/><rect x="144.70" y="325.76" width="3.60" height="10.62" fill-opacity="0.154"/><rect x="144.70" y="336.38" width="3.60" height="10.62" fill-opacity="0.127"/><rect x="144.70" y="347.01" width="3.60" height="10.62" fill-opacity="0.096"/><rect x="144.70" y="357.63" width="3.60" height="10.62" fill-opacity="0.061"/><rect x="144.70" y="368.25" width="3.60" height="10.62" fill-opacity="0.022"/><rect x="155.70" y="155.81" width="3.60" height="10.62" fill-opacity="0.022"/><rect x="155.70" y="166.43" width="3.60" height="10.62" fill-opacity="0.061"/><rect x="155.70" y="177.05" width="3.60" height="10.62" fill-opacity="0.096"/><rect x="155.70" y="187.68" width="3.60" height="10.62" fill-opacity="0.127"/><rect x="155.70" y="198.30" width="3.60" height="10.62" fill-opacity="0.154"/><rect x="155.70" y="208.92" width="3.60" height="116.84" fill-opacity="0.165"/><rect x="155.70" y="325.76" width="3.60" height="10.62" fill-opacity="0.154"/><rect x="155.70" y="336.38" width="3.60" height="10.62" fill-opacity="0.127"/><rect x="155.70" y="347.01" width="3.60" height="10.62" fill-opacity="0.096"/><rect x="155.70" y="357.63" width="3.60" height="10.62" fill-opacity="0.061"/><rect x="155.70" y="368.25" width="3.60" height="10.62" fill-opacity="0.022"/><rect x="165.70" y="155.81" width="3.60" height="10.62" fill-opacity="0.022"/><rect x="165.70" y="166.43" width="3.60" height="10.62" fill-opacity="0.061"/><rect x="165.70" y="177.05" width="3.60" height="10.62" fill-opacity="0.096"/><rect x="165.70" y="187.68" width="3.60" height="10.62" fill-opacity="0.127"/><rect x="165.70" y="198.30" width="3.60" height="10.62" fill-opacity="0.154"/><rect x="165.70" y="208.92" width="3.60" height="116.84" fill-opacity="0.165"/><rect x="165.70" y="325.76" width="3.60" height="10.62" fill-opacity="0.154"/><rect x="165.70" y="336.38" width="3.60" height="10.62" fill-opacity="0.127"/><rect x="165.70" y="347.01" width="3.60" height="10.62" fill-opacity="0.096"/><rect x="165.70" y="357.63" width="3.60" height="10.62" fill-opacity="0.061"/><rect x="165.70" y="368.25" width="3.60" height="10.62" fill-opacity="0.022"/><rect x="176.70" y="155.81" width="3.60" height="10.62" fill-opacity="0.022"/><rect x="176.70" y="166.43" width="3.60" height="10.62" fill-opacity="0.061"/><rect x="176.70" y="177.05" width="3.60" height="10.62" fill-opacity="0.096"/><rect x="176.70" y="187.68" width="3.60" height="10.62" fill-opacity="0.127"/><rect x="176.70" y="198.30" width="3.60" height="10.62" fill-opacity="0.154"/><rect x="176.70" y="208.92" width="3.60" height="116.84" fill-opacity="0.165"/><rect x="176.70" y="325.76" width="3.60" height="10.62" fill-opacity="0.154"/><rect x="176.70" y="336.38" width="3.60" height="10.62" fill-opacity="0.127"/><rect x="176.70" y="347.01" width="3.60" height="10.62" fill-opacity="0.096"/><rect x="176.70" y="357.63" width="3.60" height="10.62" fill-opacity="0.061"/><rect x="176.70" y="368.25" width="3.60" height="10.62" fill-opacity="0.022"/><rect x="186.70" y="155.81" width="3.60" height="10.62" fill-opacity="0.022"/><rect x="186.70" y="166.43" width="3.60" height="10.62" fill-opacity="0.061"/><rect x="186.70" y="177.05" width="3.60" height="10.62" fill-opacity="0.096"/><rect x="186.70" y="187.68" width="3.60" height="10.62" fill-opacity="0.127"/><rect x="186.70" y="198.30" width="3.60" height="10.62" fill-opacity="0.154"/><rect x="186.70" y="208.92" width="3.60" height="116.84" fill-opacity="0.165"/><rect x="186.70" y="325.76" width="3.60" height="10.62" fill-opacity="0.154"/><rect x="186.70" y="336.38" width="3.60" height="10.62" fill-opacity="0.127"/><rect x="186.70" y="347.01" width="3.60" height="10.62" fill-opacity="0.096"/><rect x="186.70" y="357.63" width="3.60" height="10.62" fill-opacity="0.061"/><rect x="186.70" y="368.25" width="3.60" height="10.62" fill-opacity="0.022"/><rect x="197.70" y="155.81" width="3.60" height="10.62" fill-opacity="0.022"/><rect x="197.70" y="166.43" width="3.60" height="10.62" fill-opacity="0.061"/><rect x="197.70" y="177.05" width="3.60" height="10.62" fill-opacity="0.096"/><rect x="197.70" y="187.68" width="3.60" height="10.62" fill-opacity="0.127"/><rect x="197.70" y="198.30" width="3.60" height="10.62" fill-opacity="0.154"/><rect x="197.70" y="208.92" width="3.60" height="116.84" fill-opacity="0.165"/><rect x="197.70" y="325.76" width="3.60" height="10.62" fill-opacity="0.154"/><rect x="197.70" y="336.38" width="3.60" height="10.62" fill-opacity="0.127"/><rect x="197.70" y="347.01" width="3.60" height="10.62" fill-opacity="0.096"/><rect x="197.70" y="357.63" width="3.60" height="10.62" fill-opacity="0.061"/><rect x="197.70" y="368.25" width="3.60" height="10.62" fill-opacity="0.022"/><rect x="208.70" y="155.81" width="3.60" height="10.62" fill-opacity="0.022"/><rect x="208.70" y="166.43" width="3.60" height="10.62" fill-opacity="0.061"/><rect x="208.70" y="177.05" width="3.60" height="10.62" fill-opacity="0.096"/><rect x="208.70" y="187.68" width="3.60" height="10.62" fill-opacity="0.127"/><rect x="208.70" y="198.30" width="3.60" height="10.62" fill-opacity="0.154"/><rect x="208.70" y="208.92" width="3.60" height="116.84" fill-opacity="0.165"/><rect x="208.70" y="325.76" width="3.60" height="10.62" fill-opacity="0.154"/><rect x="208.70" y="336.38" width="3.60" height="10.62" fill-opacity="0.127"/><rect x="208.70" y="347.01" width="3.60" height="10.62" fill-opacity="0.096"/><rect x="208.70" y="357.63" width="3.60" height="10.62" fill-opacity="0.061"/><rect x="208.70" y="368.25" width="3.60" height="10.62" fill-opacity="0.022"/><rect x="218.70" y="155.81" width="3.60" height="10.62" fill-opacity="0.022"/><rect x="218.70" y="166.43" width="3.60" height="10.62" fill-opacity="0.061"/><rect x="218.70" y="177.05" width="3.60" height="10.62" fill-opacity="0.096"/><rect x="218.70" y="187.68" width="3.60" height="10.62" fill-opacity="0.127"/><rect x="218.70" y="198.30" width="3.60" height="10.62" fill-opacity="0.154"/><rect x="218.70" y="208.92" width="3.60" height="116.84" fill-opacity="0.165"/><rect x="218.70" y="325.76" width="3.60" height="10.62" fill-opacity="0.154"/><rect x="218.70" y="336.38" width="3.60" height="10.62" fill-opacity="0.127"/><rect x="218.70" y="347.01" width="3.60" height="10.62" fill-opacity="0.096"/><rect x="218.70" y="357.63" width="3.60" height="10.62" fill-opacity="0.061"/><rect x="218.70" y="368.25" width="3.60" height="10.62" fill-opacity="0.022"/><rect x="229.70" y="155.81" width="3.60" height="10.62" fill-opacity="0.022"/><rect x="229.70" y="166.43" width="3.60" height="10.62" fill-opacity="0.061"/><rect x="229.70" y="177.05" width="3.60" height="10.62" fill-opacity="0.096"/><rect x="229.70" y="187.68" width="3.60" height="10.62" fill-opacity="0.127"/><rect x="229.70" y="198.30" width="3.60" height="10.62" fill-opacity="0.154"/><rect x="229.70" y="208.92" width="3.60" height="116.84" fill-opacity="0.165"/><rect x="229.70" y="325.76" width="3.60" height="10.62" fill-opacity="0.154"/><rect x="229.70" y="336.38" width="3.60" height="10.62" fill-opacity="0.127"/><rect x="229.70" y="347.01" width="3.60" height="10.62" fill-opacity="0.096"/><rect x="229.70" y="357.63" width="3.60" height="10.62" fill-opacity="0.061"/><rect x="229.70" y="368.25" width="3.60" height="10.62" fill-opacity="0.022"/><rect x="239.70" y="155.81" width="3.60" height="10.62" fill-opacity="0.022"/><rect x="239.70" y="166.43" width="3.60" height="10.62" fill-opacity="0.061"/><rect x="239.70" y="177.05" width="3.60" height="10.62" fill-opacity="0.096"/><rect x="239.70" y="187.68" width="3.60" height="10.62" fill-opacity="0.127"/><rect x="239.70" y="198.30" width="3.60" height="10.62" fill-opacity="0.154"/><rect x="239.70" y="208.92" width="3.60" height="116.84" fill-opacity="0.165"/><rect x="239.70" y="325.76" width="3.60" height="10.62" fill-opacity="0.154"/><rect x="239.70" y="336.38" width="3.60" height="10.62" fill-opacity="0.127"/><rect x="239.70" y="347.01" width="3.60" height="10.62" fill-opacity="0.096"/><rect x="239.70" y="357.63" width="3.60" height="10.62" fill-opacity="0.061"/><rect x="239.70" y="368.25" width="3.60" height="10.62" fill-opacity="0.022"/><rect x="250.70" y="155.81" width="3.60" height="10.62" fill-opacity="0.022"/><rect x="250.70" y="166.43" width="3.60" height="10.62" fill-opacity="0.061"/><rect x="250.70" y="177.05" width="3.60" height="10.62" fill-opacity="0.096"/><rect x="250.70" y="187.68" width="3.60" height="10.62" fill-opacity="0.127"/><rect x="250.70" y="198.30" width="3.60" height="10.62" fill-opacity="0.154"/><rect x="250.70" y="208.92" width="3.60" height="116.84" fill-opacity="0.165"/><rect x="250.70" y="325.76" width="3.60" height="10.62" fill-opacity="0.154"/><rect x="250.70" y="336.38" width="3.60" height="10.62" fill-opacity="0.127"/><rect x="250.70" y="347.01" width="3.60" height="10.62" fill-opacity="0.096"/><rect x="250.70" y="357.63" width="3.60" height="10.62" fill-opacity="0.061"/><rect x="250.70" y="368.25" width="3.60" height="10.62" fill-opacity="0.022"/><rect x="261.70" y="155.81" width="3.60" height="10.62" fill-opacity="0.022"/><rect x="261.70" y="166.43" width="3.60" height="10.62" fill-opacity="0.061"/><rect x="261.70" y="177.05" width="3.60" height="10.62" fill-opacity="0.096"/><rect x="261.70" y="187.68" width="3.60" height="10.62" fill-opacity="0.127"/><rect x="261.70" y="198.30" width="3.60" height="10.62" fill-opacity="0.154"/><rect x="261.70" y="208.92" width="3.60" height="116.84" fill-opacity="0.165"/><rect x="261.70" y="325.76" width="3.60" height="10.62" fill-opacity="0.154"/><rect x="261.70" y="336.38" width="3.60" height="10.62" fill-opacity="0.127"/><rect x="261.70" y="347.01" width="3.60" height="10.62" fill-opacity="0.096"/><rect x="261.70" y="357.63" width="3.60" height="10.62" fill-opacity="0.061"/><rect x="261.70" y="368.25" width="3.60" height="10.62" fill-opacity="0.022"/><rect x="271.70" y="155.81" width="3.60" height="10.62" fill-opacity="0.022"/><rect x="271.70" y="166.43" width="3.60" height="10.62" fill-opacity="0.061"/><rect x="271.70" y="177.05" width="3.60" height="10.62" fill-opacity="0.096"/><rect x="271.70" y="187.68" width="3.60" height="10.62" fill-opacity="0.127"/><rect x="271.70" y="198.30" width="3.60" height="10.62" fill-opacity="0.154"/><rect x="271.70" y="208.92" width="3.60" height="116.84" fill-opacity="0.165"/><rect x="271.70" y="325.76" width="3.60" height="10.62" fill-opacity="0.154"/><rect x="271.70" y="336.38" width="3.60" height="10.62" fill-opacity="0.127"/><rect x="271.70" y="347.01" width="3.60" height="10.62" fill-opacity="0.096"/><rect x="271.70" y="357.63" width="3.60" height="10.62" fill-opacity="0.061"/><rect x="271.70" y="368.25" width="3.60" height="10.62" fill-opacity="0.022"/><rect x="282.70" y="155.81" width="3.60" height="10.62" fill-opacity="0.022"/><rect x="282.70" y="166.43" width="3.60" height="10.62" fill-opacity="0.061"/><rect x="282.70" y="177.05" width="3.60" height="10.62" fill-opacity="0.096"/><rect x="282.70" y="187.68" width="3.60" height="10.62" fill-opacity="0.127"/><rect x="282.70" y="198.30" width="3.60" height="10.62" fill-opacity="0.154"/><rect x="282.70" y="208.92" width="3.60" height="116.84" fill-opacity="0.165"/><rect x="282.70" y="325.76" width="3.60" height="10.62" fill-opacity="0.154"/><rect x="282.70" y="336.38" width="3.60" height="10.62" fill-opacity="0.127"/><rect x="282.70" y="347.01" width="3.60" height="10.62" fill-opacity="0.096"/><rect x="282.70" y="357.63" width="3.60" height="10.62" fill-opacity="0.061"/><rect x="282.70" y="368.25" width="3.60" height="10.62" fill-opacity="0.022"/><rect x="292.70" y="155.81" width="3.60" height="10.62" fill-opacity="0.022"/><rect x="292.70" y="166.43" width="3.60" height="10.62" fill-opacity="0.061"/><rect x="292.70" y="177.05" width="3.60" height="10.62" fill-opacity="0.096"/><rect x="292.70" y="187.68" width="3.60" height="10.62" fill-opacity="0.127"/><rect x="292.70" y="198.30" width="3.60" height="10.62" fill-opacity="0.154"/><rect x="292.70" y="208.92" width="3.60" height="116.84" fill-opacity="0.165"/><rect x="292.70" y="325.76" width="3.60" height="10.62" fill-opacity="0.154"/><rect x="292.70" y="336.38" width="3.60" height="10.62" fill-opacity="0.127"/><rect x="292.70" y="347.01" width="3.60" height="10.62" fill-opacity="0.096"/><rect x="292.70" y="357.63" width="3.60" height="10.62" fill-opacity="0.061"/><rect x="292.70" y="368.25" width="3.60" height="10.62" fill-opacity="0.022"/><rect x="303.70" y="155.81" width="3.60" height="10.62" fill-opacity="0.022"/><rect x="303.70" y="166.43" width="3.60" height="10.62" fill-opacity="0.061"/><rect x="303.70" y="177.05" width="3.60" height="10.62" fill-opacity="0.096"/><rect x="303.70" y="187.68" width="3.60" height="10.62" fill-opacity="0.127"/><rect x="303.70" y="198.30" width="3.60" height="10.62" fill-opacity="0.154"/><rect x="303.70" y="208.92" width="3.60" height="116.84" fill-opacity="0.165"/><rect x="303.70" y="325.76" width="3.60" height="10.62" fill-opacity="0.154"/><rect x="303.70" y="336.38" width="3.60" height="10.62" fill-opacity="0.127"/><rect x="303.70" y="347.01" width="3.60" height="10.62" fill-opacity="0.096"/><rect x="303.70" y="357.63" width="3.60" height="10.62" fill-opacity="0.061"/><rect x="303.70" y="368.25" width="3.60" height="10.62" fill-opacity="0.022"/><rect x="314.70" y="155.81" width="3.60" height="10.62" fill-opacity="0.022"/><rect x="314.70" y="166.43" width="3.60" height="10.62" fill-opacity="0.061"/><rect x="314.70" y="177.05" width="3.60" height="10.62" fill-opacity="0.096"/><rect x="314.70" y="187.68" width="3.60" height="10.62" fill-opacity="0.127"/><rect x="314.70" y="198.30" width="3.60" height="10.62" fill-opacity="0.154"/><rect x="314.70" y="208.92" width="3.60" height="116.84" fill-opacity="0.165"/><rect x="314.70" y="325.76" width="3.60" height="10.62" fill-opacity="0.154"/><rect x="314.70" y="336.38" width="3.60" height="10.62" fill-opacity="0.127"/><rect x="314.70" y="347.01" width="3.60" height="10.62" fill-opacity="0.096"/><rect x="314.70" y="357.63" width="3.60" height="10.62" fill-opacity="0.061"/><rect x="314.70" y="368.25" width="3.60" height="10.62" fill-opacity="0.022"/><rect x="324.70" y="155.81" width="3.60" height="10.62" fill-opacity="0.022"/><rect x="324.70" y="166.43" width="3.60" height="10.62" fill-opacity="0.061"/><rect x="324.70" y="177.05" width="3.60" height="10.62" fill-opacity="0.096"/><rect x="324.70" y="187.68" width="3.60" height="10.62" fill-opacity="0.127"/><rect x="324.70" y="198.30" width="3.60" height="10.62" fill-opacity="0.154"/><rect x="324.70" y="208.92" width="3.60" height="116.84" fill-opacity="0.165"/><rect x="324.70" y="325.76" width="3.60" height="10.62" fill-opacity="0.154"/><rect x="324.70" y="336.38" width="3.60" height="10.62" fill-opacity="0.127"/><rect x="324.70" y="347.01" width="3.60" height="10.62" fill-opacity="0.096"/><rect x="324.70" y="357.63" width="3.60" height="10.62" fill-opacity="0.061"/><rect x="324.70" y="368.25" width="3.60" height="10.62" fill-opacity="0.022"/><rect x="335.70" y="155.81" width="3.60" height="10.62" fill-opacity="0.022"/><rect x="335.70" y="166.43" width="3.60" height="10.62" fill-opacity="0.061"/><rect x="335.70" y="177.05" width="3.60" height="10.62" fill-opacity="0.096"/><rect x="335.70" y="187.68" width="3.60" height="10.62" fill-opacity="0.127"/><rect x="335.70" y="198.30" width="3.60" height="10.62" fill-opacity="0.154"/><rect x="335.70" y="208.92" width="3.60" height="116.84" fill-opacity="0.165"/><rect x="335.70" y="325.76" width="3.60" height="10.62" fill-opacity="0.154"/><rect x="335.70" y="336.38" width="3.60" height="10.62" fill-opacity="0.127"/><rect x="335.70" y="347.01" width="3.60" height="10.62" fill-opacity="0.096"/><rect x="335.70" y="357.63" width="3.60" height="10.62" fill-opacity="0.061"/><rect x="335.70" y="368.25" width="3.60" height="10.62" fill-opacity="0.022"/><rect x="345.70" y="155.81" width="3.60" height="10.62" fill-opacity="0.022"/><rect x="345.70" y="166.43" width="3.60" height="10.62" fill-opacity="0.061"/><rect x="345.70" y="177.05" width="3.60" height="10.62" fill-opacity="0.096"/><rect x="345.70" y="187.68" width="3.60" height="10.62" fill-opacity="0.127"/><rect x="345.70" y="198.30" width="3.60" height="10.62" fill-opacity="0.154"/><rect x="345.70" y="208.92" width="3.60" height="116.84" fill-opacity="0.165"/><rect x="345.70" y="325.76" width="3.60" height="10.62" fill-opacity="0.154"/><rect x="345.70" y="336.38" width="3.60" height="10.62" fill-opacity="0.127"/><rect x="345.70" y="347.01" width="3.60" height="10.62" fill-opacity="0.096"/><rect x="345.70" y="357.63" width="3.60" height="10.62" fill-opacity="0.061"/><rect x="345.70" y="368.25" width="3.60" height="10.62" fill-opacity="0.022"/><rect x="356.70" y="155.81" width="3.60" height="10.62" fill-opacity="0.022"/><rect x="356.70" y="166.43" width="3.60" height="10.62" fill-opacity="0.061"/><rect x="356.70" y="177.05" width="3.60" height="10.62" fill-opacity="0.096"/><rect x="356.70" y="187.68" width="3.60" height="10.62" fill-opacity="0.127"/><rect x="356.70" y="198.30" width="3.60" height="10.62" fill-opacity="0.154"/><rect x="356.70" y="208.92" width="3.60" height="116.84" fill-opacity="0.165"/><rect x="356.70" y="325.76" width="3.60" height="10.62" fill-opacity="0.154"/><rect x="356.70" y="336.38" width="3.60" height="10.62" fill-opacity="0.127"/><rect x="356.70" y="347.01" width="3.60" height="10.62" fill-opacity="0.096"/><rect x="356.70" y="357.63" width="3.60" height="10.62" fill-opacity="0.061"/><rect x="356.70" y="368.25" width="3.60" height="10.62" fill-opacity="0.022"/><rect x="367.70" y="155.81" width="3.60" height="10.62" fill-opacity="0.022"/><rect x="367.70" y="166.43" width="3.60" height="10.62" fill-opacity="0.061"/><rect x="367.70" y="177.05" width="3.60" height="10.62" fill-opacity="0.096"/><rect x="367.70" y="187.68" width="3.60" height="10.62" fill-opacity="0.127"/><rect x="367.70" y="198.30" width="3.60" height="10.62" fill-opacity="0.154"/><rect x="367.70" y="208.92" width="3.60" height="116.84" fill-opacity="0.165"/><rect x="367.70" y="325.76" width="3.60" height="10.62" fill-opacity="0.154"/><rect x="367.70" y="336.38" width="3.60" height="10.62" fill-opacity="0.127"/><rect x="367.70" y="347.01" width="3.60" height="10.62" fill-opacity="0.096"/><rect x="367.70" y="357.63" width="3.60" height="10.62" fill-opacity="0.061"/><rect x="367.70" y="368.25" width="3.60" height="10.62" fill-opacity="0.022"/><rect x="377.70" y="155.81" width="3.60" height="10.62" fill-opacity="0.022"/><rect x="377.70" y="166.43" width="3.60" height="10.62" fill-opacity="0.061"/><rect x="377.70" y="177.05" width="3.60" height="10.62" fill-opacity="0.096"/><rect x="377.70" y="187.68" width="3.60" height="10.62" fill-opacity="0.127"/><rect x="377.70" y="198.30" width="3.60" height="10.62" fill-opacity="0.154"/><rect x="377.70" y="208.92" width="3.60" height="116.84" fill-opacity="0.165"/><rect x="377.70" y="325.76" width="3.60" height="10.62" fill-opacity="0.154"/><rect x="377.70" y="336.38" width="3.60" height="10.62" fill-opacity="0.127"/><rect x="377.70" y="347.01" width="3.60" height="10.62" fill-opacity="0.096"/><rect x="377.70" y="357.63" width="3.60" height="10.62" fill-opacity="0.061"/><rect x="377.70" y="368.25" width="3.60" height="10.62" fill-opacity="0.022"/><rect x="388.70" y="155.81" width="3.60" height="10.62" fill-opacity="0.022"/><rect x="388.70" y="166.43" width="3.60" height="10.62" fill-opacity="0.061"/><rect x="388.70" y="177.05" width="3.60" height="10.62" fill-opacity="0.096"/><rect x="388.70" y="187.68" width="3.60" height="10.62" fill-opacity="0.127"/><rect x="388.70" y="198.30" width="3.60" height="10.62" fill-opacity="0.154"/><rect x="388.70" y="208.92" width="3.60" height="116.84" fill-opacity="0.165"/><rect x="388.70" y="325.76" width="3.60" height="10.62" fill-opacity="0.154"/><rect x="388.70" y="336.38" width="3.60" height="10.62" fill-opacity="0.127"/><rect x="388.70" y="347.01" width="3.60" height="10.62" fill-opacity="0.096"/><rect x="388.70" y="357.63" width="3.60" height="10.62" fill-opacity="0.061"/><rect x="388.70" y="368.25" width="3.60" height="10.62" fill-opacity="0.022"/><rect x="398.70" y="155.81" width="3.60" height="10.62" fill-opacity="0.022"/><rect x="398.70" y="166.43" width="3.60" height="10.62" fill-opacity="0.061"/><rect x="398.70" y="177.05" width="3.60" height="10.62" fill-opacity="0.096"/><rect x="398.70" y="187.68" width="3.60" height="10.62" fill-opacity="0.127"/><rect x="398.70" y="198.30" width="3.60" height="10.62" fill-opacity="0.154"/><rect x="398.70" y="208.92" width="3.60" height="116.84" fill-opacity="0.165"/><rect x="398.70" y="325.76" width="3.60" height="10.62" fill-opacity="0.154"/><rect x="398.70" y="336.38" width="3.60" height="10.62" fill-opacity="0.127"/><rect x="398.70" y="347.01" width="3.60" height="10.62" fill-opacity="0.096"/><rect x="398.70" y="357.63" width="3.60" height="10.62" fill-opacity="0.061"/><rect x="398.70" y="368.25" width="3.60" height="10.62" fill-opacity="0.022"/><rect x="409.70" y="155.81" width="3.60" height="10.62" fill-opacity="0.022"/><rect x="409.70" y="166.43" width="3.60" height="10.62" fill-opacity="0.061"/><rect x="409.70" y="177.05" width="3.60" height="10.62" fill-opacity="0.096"/><rect x="409.70" y="187.68" width="3.60" height="10.62" fill-opacity="0.127"/><rect x="409.70" y="198.30" width="3.60" height="10.62" fill-opacity="0.154"/><rect x="409.70" y="208.92" width="3.60" height="116.84" fill-opacity="0.165"/><rect x="409.70" y="325.76" width="3.60" height="10.62" fill-opacity="0.154"/><rect x="409.70" y="336.38" width="3.60" height="10.62" fill-opacity="0.127"/><rect x="409.70" y="347.01" width="3.60" height="10.62" fill-opacity="0.096"/><rect x="409.70" y="357.63" width="3.60" height="10.62" fill-opacity="0.061"/><rect x="409.70" y="368.25" width="3.60" height="10.62" fill-opacity="0.022"/><rect x="420.70" y="155.81" width="3.60" height="10.62" fill-opacity="0.022"/><rect x="420.70" y="166.43" width="3.60" height="10.62" fill-opacity="0.061"/><rect x="420.70" y="177.05" width="3.60" height="10.62" fill-opacity="0.096"/><rect x="420.70" y="187.68" width="3.60" height="10.62" fill-opacity="0.127"/><rect x="420.70" y="198.30" width="3.60" height="10.62" fill-opacity="0.154"/><rect x="420.70" y="208.92" width="3.60" height="116.84" fill-opacity="0.165"/><rect x="420.70" y="325.76" width="3.60" height="10.62" fill-opacity="0.154"/><rect x="420.70" y="336.38" width="3.60" height="10.62" fill-opacity="0.127"/><rect x="420.70" y="347.01" width="3.60" height="10.62" fill-opacity="0.096"/><rect x="420.70" y="357.63" width="3.60" height="10.62" fill-opacity="0.061"/><rect x="420.70" y="368.25" width="3.60" height="10.62" fill-opacity="0.022"/><rect x="430.70" y="155.81" width="3.60" height="10.62" fill-opacity="0.022"/><rect x="430.70" y="166.43" width="3.60" height="10.62" fill-opacity="0.061"/><rect x="430.70" y="177.05" width="3.60" height="10.62" fill-opacity="0.096"/><rect x="430.70" y="187.68" width="3.60" height="10.62" fill-opacity="0.127"/><rect x="430.70" y="198.30" width="3.60" height="10.62" fill-opacity="0.154"/><rect x="430.70" y="208.92" width="3.60" height="116.84" fill-opacity="0.165"/><rect x="430.70" y="325.76" width="3.60" height="10.62" fill-opacity="0.154"/><rect x="430.70" y="336.38" width="3.60" height="10.62" fill-opacity="0.127"/><rect x="430.70" y="347.01" width="3.60" height="10.62" fill-opacity="0.096"/><rect x="430.70" y="357.63" width="3.60" height="10.62" fill-opacity="0.061"/><rect x="430.70" y="368.25" width="3.60" height="10.62" fill-opacity="0.022"/><rect x="441.70" y="155.81" width="3.60" height="10.62" fill-opacity="0.022"/><rect x="441.70" y="166.43" width="3.60" height="10.62" fill-opacity="0.061"/><rect x="441.70" y="177.05" width="3.60" height="10.62" fill-opacity="0.096"/><rect x="441.70" y="187.68" width="3.60" height="10.62" fill-opacity="0.127"/><rect x="441.70" y="198.30" width="3.60" height="10.62" fill-opacity="0.154"/><rect x="441.70" y="208.92" width="3.60" height="116.84" fill-opacity="0.165"/><rect x="441.70" y="325.76" width="3.60" height="10.62" fill-opacity="0.154"/><rect x="441.70" y="336.38" width="3.60" height="10.62" fill-opacity="0.127"/><rect x="441.70" y="347.01" width="3.60" height="10.62" fill-opacity="0.096"/><rect x="441.70" y="357.63" width="3.60" height="10.62" fill-opacity="0.061"/><rect x="441.70" y="368.25" width="3.60" height="10.62" fill-opacity="0.022"/><rect x="451.70" y="155.81" width="3.60" height="10.62" fill-opacity="0.022"/><rect x="451.70" y="166.43" width="3.60" height="10.62" fill-opacity="0.061"/><rect x="451.70" y="177.05" width="3.60" height="10.62" fill-opacity="0.096"/><rect x="451.70" y="187.68" width="3.60" height="10.62" fill-opacity="0.127"/><rect x="451.70" y="198.30" width="3.60" height="10.62" fill-opacity="0.154"/><rect x="451.70" y="208.92" width="3.60" height="116.84" fill-opacity="0.165"/><rect x="451.70" y="325.76" width="3.60" height="10.62" fill-opacity="0.154"/><rect x="451.70" y="336.38" width="3.60" height="10.62" fill-opacity="0.127"/><rect x="451.70" y="347.01" width="3.60" height="10.62" fill-opacity="0.096"/><rect x="451.70" y="357.63" width="3.60" height="10.62" fill-opacity="0.061"/><rect x="451.70" y="368.25" width="3.60" height="10.62" fill-opacity="0.022"/><rect x="462.70" y="155.81" width="3.60" height="10.62" fill-opacity="0.022"/><rect x="462.70" y="166.43" width="3.60" height="10.62" fill-opacity="0.061"/><rect x="462.70" y="177.05" width="3.60" height="10.62" fill-opacity="0.096"/><rect x="462.70" y="187.68" width="3.60" height="10.62" fill-opacity="0.127"/><rect x="462.70" y="198.30" width="3.60" height="10.62" fill-opacity="0.154"/><rect x="462.70" y="208.92" width="3.60" height="116.84" fill-opacity="0.165"/><rect x="462.70" y="325.76" width="3.60" height="10.62" fill-opacity="0.154"/><rect x="462.70" y="336.38" width="3.60" height="10.62" fill-opacity="0.127"/><rect x="462.70" y="347.01" width="3.60" height="10.62" fill-opacity="0.096"/><rect x="462.70" y="357.63" width="3.60" height="10.62" fill-opacity="0.061"/><rect x="462.70" y="368.25" width="3.60" height="10.62" fill-opacity="0.022"/><rect x="473.70" y="155.81" width="3.60" height="10.62" fill-opacity="0.022"/><rect x="473.70" y="166.43" width="3.60" height="10.62" fill-opacity="0.061"/><rect x="473.70" y="177.05" width="3.60" height="10.62" fill-opacity="0.096"/><rect x="473.70" y="187.68" width="3.60" height="10.62" fill-opacity="0.127"/><rect x="473.70" y="198.30" width="3.60" height="10.62" fill-opacity="0.154"/><rect x="473.70" y="208.92" width="3.60" height="116.84" fill-opacity="0.165"/><rect x="473.70" y="325.76" width="3.60" height="10.62" fill-opacity="0.154"/><rect x="473.70" y="336.38" width="3.60" height="10.62" fill-opacity="0.127"/><rect x="473.70" y="347.01" width="3.60" height="10.62" fill-opacity="0.096"/><rect x="473.70" y="357.63" width="3.60" height="10.62" fill-opacity="0.061"/><rect x="473.70" y="368.25" width="3.60" height="10.62" fill-opacity="0.022"/><rect x="483.70" y="155.81" width="3.60" height="10.62" fill-opacity="0.022"/><rect x="483.70" y="166.43" width="3.60" height="10.62" fill-opacity="0.061"/><rect x="483.70" y="177.05" width="3.60" height="10.62" fill-opacity="0.096"/><rect x="483.70" y="187.68" width="3.60" height="10.62" fill-opacity="0.127"/><rect x="483.70" y="198.30" width="3.60" height="10.62" fill-opacity="0.154"/><rect x="483.70" y="208.92" width="3.60" height="116.84" fill-opacity="0.165"/><rect x="483.70" y="325.76" width="3.60" height="10.62" fill-opacity="0.154"/><rect x="483.70" y="336.38" width="3.60" height="10.62" fill-opacity="0.127"/><rect x="483.70" y="347.01" width="3.60" height="10.62" fill-opacity="0.096"/><rect x="483.70" y="357.63" width="3.60" height="10.62" fill-opacity="0.061"/><rect x="483.70" y="368.25" width="3.60" height="10.62" fill-opacity="0.022"/><rect x="494.70" y="155.81" width="3.60" height="10.62" fill-opacity="0.022"/><rect x="494.70" y="166.43" width="3.60" height="10.62" fill-opacity="0.061"/><rect x="494.70" y="177.05" width="3.60" height="10.62" fill-opacity="0.096"/><rect x="494.70" y="187.68" width="3.60" height="10.62" fill-opacity="0.127"/><rect x="494.70" y="198.30" width="3.60" height="10.62" fill-opacity="0.154"/><rect x="494.70" y="208.92" width="3.60" height="116.84" fill-opacity="0.165"/><rect x="494.70" y="325.76" width="3.60" height="10.62" fill-opacity="0.154"/><rect x="494.70" y="336.38" width="3.60" height="10.62" fill-opacity="0.127"/><rect x="494.70" y="347.01" width="3.60" height="10.62" fill-opacity="0.096"/><rect x="494.70" y="357.63" width="3.60" height="10.62" fill-opacity="0.061"/><rect x="494.70" y="368.25" width="3.60" height="10.62" fill-opacity="0.022"/><rect x="504.70" y="155.81" width="3.60" height="10.62" fill-opacity="0.022"/><rect x="504.70" y="166.43" width="3.60" height="10.62" fill-opacity="0.061"/><rect x="504.70" y="177.05" width="3.60" height="10.62" fill-opacity="0.096"/><rect x="504.70" y="187.68" width="3.60" height="10.62" fill-opacity="0.127"/><rect x="504.70" y="198.30" width="3.60" height="10.62" fill-opacity="0.154"/><rect x="504.70" y="208.92" width="3.60" height="116.84" fill-opacity="0.165"/><rect x="504.70" y="325.76" width="3.60" height="10.62" fill-opacity="0.154"/><rect x="504.70" y="336.38" width="3.60" height="10.62" fill-opacity="0.127"/><rect x="504.70" y="347.01" width="3.60" height="10.62" fill-opacity="0.096"/><rect x="504.70" y="357.63" width="3.60" height="10.62" fill-opacity="0.061"/><rect x="504.70" y="368.25" width="3.60" height="10.62" fill-opacity="0.022"/><rect x="515.70" y="155.81" width="3.60" height="10.62" fill-opacity="0.022"/><rect x="515.70" y="166.43" width="3.60" height="10.62" fill-opacity="0.061"/><rect x="515.70" y="177.05" width="3.60" height="10.62" fill-opacity="0.096"/><rect x="515.70" y="187.68" width="3.60" height="10.62" fill-opacity="0.127"/><rect x="515.70" y="198.30" width="3.60" height="10.62" fill-opacity="0.154"/><rect x="515.70" y="208.92" width="3.60" height="116.84" fill-opacity="0.165"/><rect x="515.70" y="325.76" width="3.60" height="10.62" fill-opacity="0.154"/><rect x="515.70" y="336.38" width="3.60" height="10.62" fill-opacity="0.127"/><rect x="515.70" y="347.01" width="3.60" height="10.62" fill-opacity="0.096"/><rect x="515.70" y="357.63" width="3.60" height="10.62" fill-opacity="0.061"/><rect x="515.70" y="368.25" width="3.60" height="10.62" fill-opacity="0.022"/><rect x="526.70" y="155.81" width="3.60" height="10.62" fill-opacity="0.022"/><rect x="526.70" y="166.43" width="3.60" height="10.62" fill-opacity="0.061"/><rect x="526.70" y="177.05" width="3.60" height="10.62" fill-opacity="0.096"/><rect x="526.70" y="187.68" width="3.60" height="10.62" fill-opacity="0.127"/><rect x="526.70" y="198.30" width="3.60" height="10.62" fill-opacity="0.154"/><rect x="526.70" y="208.92" width="3.60" height="116.84" fill-opacity="0.165"/><rect x="526.70" y="325.76" width="3.60" height="10.62" fill-opacity="0.154"/><rect x="526.70" y="336.38" width="3.60" height="10.62" fill-opacity="0.127"/><rect x="526.70" y="347.01" width="3.60" height="10.62" fill-opacity="0.096"/><rect x="526.70" y="357.63" width="3.60" height="10.62" fill-opacity="0.061"/><rect x="526.70" y="368.25" width="3.60" height="10.62" fill-opacity="0.022"/><rect x="536.70" y="155.81" width="3.60" height="10.62" fill-opacity="0.022"/><rect x="536.70" y="166.43" width="3.60" height="10.62" fill-opacity="0.061"/><rect x="536.70" y="177.05" width="3.60" height="10.62" fill-opacity="0.096"/><rect x="536.70" y="187.68" width="3.60" height="10.62" fill-opacity="0.127"/><rect x="536.70" y="198.30" width="3.60" height="10.62" fill-opacity="0.154"/><rect x="536.70" y="208.92" width="3.60" height="116.84" fill-opacity="0.165"/><rect x="536.70" y="325.76" width="3.60" height="10.62" fill-opacity="0.154"/><rect x="536.70" y="336.38" width="3.60" height="10.62" fill-opacity="0.127"/><rect x="536.70" y="347.01" width="3.60" height="10.62" fill-opacity="0.096"/><rect x="536.70" y="357.63" width="3.60" height="10.62" fill-opacity="0.061"/><rect x="536.70" y="368.25" width="3.60" height="10.62" fill-opacity="0.022"/><rect x="547.70" y="155.81" width="3.60" height="10.62" fill-opacity="0.022"/><rect x="547.70" y="166.43" width="3.60" height="10.62" fill-opacity="0.061"/><rect x="547.70" y="177.05" width="3.60" height="10.62" fill-opacity="0.096"/><rect x="547.70" y="187.68" width="3.60" height="10.62" fill-opacity="0.127"/><rect x="547.70" y="198.30" width="3.60" height="10.62" fill-opacity="0.154"/><rect x="547.70" y="208.92" width="3.60" height="116.84" fill-opacity="0.165"/><rect x="547.70" y="325.76" width="3.60" height="10.62" fill-opacity="0.154"/><rect x="547.70" y="336.38" width="3.60" height="10.62" fill-opacity="0.127"/><rect x="547.70" y="347.01" width="3.60" height="10.62" fill-opacity="0.096"/><rect x="547.70" y="357.63" width="3.60" height="10.62" fill-opacity="0.061"/><rect x="547.70" y="368.25" width="3.60" height="10.62" fill-opacity="0.022"/><rect x="557.70" y="155.81" width="3.60" height="10.62" fill-opacity="0.022"/><rect x="557.70" y="166.43" width="3.60" height="10.62" fill-opacity="0.061"/><rect x="557.70" y="177.05" width="3.60" height="10.62" fill-opacity="0.096"/><rect x="557.70" y="187.68" width="3.60" height="10.62" fill-opacity="0.127"/><rect x="557.70" y="198.30" width="3.60" height="10.62" fill-opacity="0.154"/><rect x="557.70" y="208.92" width="3.60" height="116.84" fill-opacity="0.165"/><rect x="557.70" y="325.76" width="3.60" height="10.62" fill-opacity="0.154"/><rect x="557.70" y="336.38" width="3.60" height="10.62" fill-opacity="0.127"/><rect x="557.70" y="347.01" width="3.60" height="10.62" fill-opacity="0.096"/><rect x="557.70" y="357.63" width="3.60" height="10.62" fill-opacity="0.061"/><rect x="557.70" y="368.25" width="3.60" height="10.62" fill-opacity="0.022"/><rect x="568.70" y="155.81" width="3.60" height="10.62" fill-opacity="0.022"/><rect x="568.70" y="166.43" width="3.60" height="10.62" fill-opacity="0.061"/><rect x="568.70" y="177.05" width="3.60" height="10.62" fill-opacity="0.096"/><rect x="568.70" y="187.68" width="3.60" height="10.62" fill-opacity="0.127"/><rect x="568.70" y="198.30" width="3.60" height="10.62" fill-opacity="0.154"/><rect x="568.70" y="208.92" width="3.60" height="116.84" fill-opacity="0.165"/><rect x="568.70" y="325.76" width="3.60" height="10.62" fill-opacity="0.154"/><rect x="568.70" y="336.38" width="3.60" height="10.62" fill-opacity="0.127"/><rect x="568.70" y="347.01" width="3.60" height="10.62" fill-opacity="0.096"/><rect x="568.70" y="357.63" width="3.60" height="10.62" fill-opacity="0.061"/><rect x="568.70" y="368.25" width="3.60" height="10.62" fill-opacity="0.022"/><rect x="579.70" y="155.81" width="3.60" height="10.62" fill-opacity="0.022"/><rect x="579.70" y="166.43" width="3.60" height="10.62" fill-opacity="0.061"/><rect x="579.70" y="177.05" width="3.60" height="10.62" fill-opacity="0.096"/><rect x="579.70" y="187.68" width="3.60" height="10.62" fill-opacity="0.127"/><rect x="579.70" y="198.30" width="3.60" height="10.62" fill-opacity="0.154"/><rect x="579.70" y="208.92" width="3.60" height="116.84" fill-opacity="0.165"/><rect x="579.70" y="325.76" width="3.60" height="10.62" fill-opacity="0.154"/><rect x="579.70" y="336.38" width="3.60" height="10.62" fill-opacity="0.127"/><rect x="579.70" y="347.01" width="3.60" height="10.62" fill-opacity="0.096"/><rect x="579.70" y="357.63" width="3.60" height="10.62" fill-opacity="0.061"/><rect x="579.70" y="368.25" width="3.60" height="10.62" fill-opacity="0.022"/><rect x="589.70" y="155.81" width="3.60" height="10.62" fill-opacity="0.022"/><rect x="589.70" y="166.43" width="3.60" height="10.62" fill-opacity="0.061"/><rect x="589.70" y="177.05" width="3.60" height="10.62" fill-opacity="0.096"/><rect x="589.70" y="187.68" width="3.60" height="10.62" fill-opacity="0.127"/><rect x="589.70" y="198.30" width="3.60" height="10.62" fill-opacity="0.154"/><rect x="589.70" y="208.92" width="3.60" height="116.84" fill-opacity="0.165"/><rect x="589.70" y="325.76" width="3.60" height="10.62" fill-opacity="0.154"/><rect x="589.70" y="336.38" width="3.60" height="10.62" fill-opacity="0.127"/><rect x="589.70" y="347.01" width="3.60" height="10.62" fill-opacity="0.096"/><rect x="589.70" y="357.63" width="3.60" height="10.62" fill-opacity="0.061"/><rect x="589.70" y="368.25" width="3.60" height="10.62" fill-opacity="0.022"/><rect x="600.70" y="155.81" width="3.60" height="10.62" fill-opacity="0.022"/><rect x="600.70" y="166.43" width="3.60" height="10.62" fill-opacity="0.061"/><rect x="600.70" y="177.05" width="3.60" height="10.62" fill-opacity="0.096"/><rect x="600.70" y="187.68" width="3.60" height="10.62" fill-opacity="0.127"/><rect x="600.70" y="198.30" width="3.60" height="10.62" fill-opacity="0.154"/><rect x="600.70" y="208.92" width="3.60" height="116.84" fill-opacity="0.165"/><rect x="600.70" y="325.76" width="3.60" height="10.62" fill-opacity="0.154"/><rect x="600.70" y="336.38" width="3.60" height="10.62" fill-opacity="0.127"/><rect x="600.70" y="347.01" width="3.60" height="10.62" fill-opacity="0.096"/><rect x="600.70" y="357.63" width="3.60" height="10.62" fill-opacity="0.061"/><rect x="600.70" y="368.25" width="3.60" height="10.62" fill-opacity="0.022"/><rect x="610.70" y="155.81" width="3.60" height="10.62" fill-opacity="0.022"/><rect x="610.70" y="166.43" width="3.60" height="10.62" fill-opacity="0.061"/><rect x="610.70" y="177.05" width="3.60" height="10.62" fill-opacity="0.096"/><rect x="610.70" y="187.68" width="3.60" height="10.62" fill-opacity="0.127"/><rect x="610.70" y="198.30" width="3.60" height="10.62" fill-opacity="0.154"/><rect x="610.70" y="208.92" width="3.60" height="116.84" fill-opacity="0.165"/><rect x="610.70" y="325.76" width="3.60" height="10.62" fill-opacity="0.154"/><rect x="610.70" y="336.38" width="3.60" height="10.62" fill-opacity="0.127"/><rect x="610.70" y="347.01" width="3.60" height="10.62" fill-opacity="0.096"/><rect x="610.70" y="357.63" width="3.60" height="10.62" fill-opacity="0.061"/><rect x="610.70" y="368.25" width="3.60" height="10.62" fill-opacity="0.022"/><rect x="621.70" y="155.81" width="3.60" height="10.62" fill-opacity="0.022"/><rect x="621.70" y="166.43" width="3.60" height="10.62" fill-opacity="0.061"/><rect x="621.70" y="177.05" width="3.60" height="10.62" fill-opacity="0.096"/><rect x="621.70" y="187.68" width="3.60" height="10.62" fill-opacity="0.127"/><rect x="621.70" y="198.30" width="3.60" height="10.62" fill-opacity="0.154"/><rect x="621.70" y="208.92" width="3.60" height="116.84" fill-opacity="0.165"/><rect x="621.70" y="325.76" width="3.60" height="10.62" fill-opacity="0.154"/><rect x="621.70" y="336.38" width="3.60" height="10.62" fill-opacity="0.127"/><rect x="621.70" y="347.01" width="3.60" height="10.62" fill-opacity="0.096"/><rect x="621.70" y="357.63" width="3.60" height="10.62" fill-opacity="0.061"/><rect x="621.70" y="368.25" width="3.60" height="10.62" fill-opacity="0.022"/><rect x="632.70" y="155.81" width="3.60" height="10.62" fill-opacity="0.022"/><rect x="632.70" y="166.43" width="3.60" height="10.62" fill-opacity="0.061"/><rect x="632.70" y="177.05" width="3.60" height="10.62" fill-opacity="0.096"/><rect x="632.70" y="187.68" width="3.60" height="10.62" fill-opacity="0.127"/><rect x="632.70" y="198.30" width="3.60" height="10.62" fill-opacity="0.154"/><rect x="632.70" y="208.92" width="3.60" height="116.84" fill-opacity="0.165"/><rect x="632.70" y="325.76" width="3.60" height="10.62" fill-opacity="0.154"/><rect x="632.70" y="336.38" width="3.60" height="10.62" fill-opacity="0.127"/><rect x="632.70" y="347.01" width="3.60" height="10.62" fill-opacity="0.096"/><rect x="632.70" y="357.63" width="3.60" height="10.62" fill-opacity="0.061"/><rect x="632.70" y="368.25" width="3.60" height="10.62" fill-opacity="0.022"/><rect x="642.70" y="155.81" width="3.60" height="10.62" fill-opacity="0.022"/><rect x="642.70" y="166.43" width="3.60" height="10.62" fill-opacity="0.061"/><rect x="642.70" y="177.05" width="3.60" height="10.62" fill-opacity="0.096"/><rect x="642.70" y="187.68" width="3.60" height="10.62" fill-opacity="0.127"/><rect x="642.70" y="198.30" width="3.60" height="10.62" fill-opacity="0.154"/><rect x="642.70" y="208.92" width="3.60" height="116.84" fill-opacity="0.165"/><rect x="642.70" y="325.76" width="3.60" height="10.62" fill-opacity="0.154"/><rect x="642.70" y="336.38" width="3.60" height="10.62" fill-opacity="0.127"/><rect x="642.70" y="347.01" width="3.60" height="10.62" fill-opacity="0.096"/><rect x="642.70" y="357.63" width="3.60" height="10.62" fill-opacity="0.061"/><rect x="642.70" y="368.25" width="3.60" height="10.62" fill-opacity="0.022"/><rect x="653.70" y="155.81" width="3.60" height="10.62" fill-opacity="0.022"/><rect x="653.70" y="166.43" width="3.60" height="10.62" fill-opacity="0.061"/><rect x="653.70" y="177.05" width="3.60" height="10.62" fill-opacity="0.096"/><rect x="653.70" y="187.68" width="3.60" height="10.62" fill-opacity="0.127"/><rect x="653.70" y="198.30" width="3.60" height="10.62" fill-opacity="0.154"/><rect x="653.70" y="208.92" width="3.60" height="116.84" fill-opacity="0.165"/><rect x="653.70" y="325.76" width="3.60" height="10.62" fill-opacity="0.154"/><rect x="653.70" y="336.38" width="3.60" height="10.62" fill-opacity="0.127"/><rect x="653.70" y="347.01" width="3.60" height="10.62" fill-opacity="0.096"/><rect x="653.70" y="357.63" width="3.60" height="10.62" fill-opacity="0.061"/><rect x="653.70" y="368.25" width="3.60" height="10.62" fill-opacity="0.022"/><rect x="664.70" y="155.81" width="3.60" height="10.62" fill-opacity="0.022"/><rect x="664.70" y="166.43" width="3.60" height="10.62" fill-opacity="0.061"/><rect x="664.70" y="177.05" width="3.60" height="10.62" fill-opacity="0.096"/><rect x="664.70" y="187.68" width="3.60" height="10.62" fill-opacity="0.127"/><rect x="664.70" y="198.30" width="3.60" height="10.62" fill-opacity="0.154"/><rect x="664.70" y="208.92" width="3.60" height="116.84" fill-opacity="0.165"/><rect x="664.70" y="325.76" width="3.60" height="10.62" fill-opacity="0.154"/><rect x="664.70" y="336.38" width="3.60" height="10.62" fill-opacity="0.127"/><rect x="664.70" y="347.01" width="3.60" height="10.62" fill-opacity="0.096"/><rect x="664.70" y="357.63" width="3.60" height="10.62" fill-opacity="0.061"/><rect x="664.70" y="368.25" width="3.60" height="10.62" fill-opacity="0.022"/><rect x="674.70" y="155.81" width="3.60" height="10.62" fill-opacity="0.022"/><rect x="674.70" y="166.43" width="3.60" height="10.62" fill-opacity="0.061"/><rect x="674.70" y="177.05" width="3.60" height="10.62" fill-opacity="0.096"/><rect x="674.70" y="187.68" width="3.60" height="10.62" fill-opacity="0.127"/><rect x="674.70" y="198.30" width="3.60" height="10.62" fill-opacity="0.154"/><rect x="674.70" y="208.92" width="3.60" height="116.84" fill-opacity="0.165"/><rect x="674.70" y="325.76" width="3.60" height="10.62" fill-opacity="0.154"/><rect x="674.70" y="336.38" width="3.60" height="10.62" fill-opacity="0.127"/><rect x="674.70" y="347.01" width="3.60" height="10.62" fill-opacity="0.096"/><rect x="674.70" y="357.63" width="3.60" height="10.62" fill-opacity="0.061"/><rect x="674.70" y="368.25" width="3.60" height="10.62" fill-opacity="0.022"/><rect x="685.70" y="155.81" width="3.60" height="10.62" fill-opacity="0.022"/><rect x="685.70" y="166.43" width="3.60" height="10.62" fill-opacity="0.061"/><rect x="685.70" y="177.05" width="3.60" height="10.62" fill-opacity="0.096"/><rect x="685.70" y="187.68" width="3.60" height="10.62" fill-opacity="0.127"/><rect x="685.70" y="198.30" width="3.60" height="10.62" fill-opacity="0.154"/><rect x="685.70" y="208.92" width="3.60" height="116.84" fill-opacity="0.165"/><rect x="685.70" y="325.76" width="3.60" height="10.62" fill-opacity="0.154"/><rect x="685.70" y="336.38" width="3.60" height="10.62" fill-opacity="0.127"/><rect x="685.70" y="347.01" width="3.60" height="10.62" fill-opacity="0.096"/><rect x="685.70" y="357.63" width="3.60" height="10.62" fill-opacity="0.061"/><rect x="685.70" y="368.25" width="3.60" height="10.62" fill-opacity="0.022"/><rect x="695.70" y="155.81" width="3.60" height="10.62" fill-opacity="0.022"/><rect x="695.70" y="166.43" width="3.60" height="10.62" fill-opacity="0.061"/><rect x="695.70" y="177.05" width="3.60" height="10.62" fill-opacity="0.096"/><rect x="695.70" y="187.68" width="3.60" height="10.62" fill-opacity="0.127"/><rect x="695.70" y="198.30" width="3.60" height="10.62" fill-opacity="0.154"/><rect x="695.70" y="208.92" width="3.60" height="116.84" fill-opacity="0.165"/><rect x="695.70" y="325.76" width="3.60" height="10.62" fill-opacity="0.154"/><rect x="695.70" y="336.38" width="3.60" height="10.62" fill-opacity="0.127"/><rect x="695.70" y="347.01" width="3.60" height="10.62" fill-opacity="0.096"/><rect x="695.70" y="357.63" width="3.60" height="10.62" fill-opacity="0.061"/><rect x="695.70" y="368.25" width="3.60" height="10.62" fill-opacity="0.022"/><rect x="706.70" y="155.81" width="3.60" height="10.62" fill-opacity="0.022"/><rect x="706.70" y="166.43" width="3.60" height="10.62" fill-opacity="0.061"/><rect x="706.70" y="177.05" width="3.60" height="10.62" fill-opacity="0.096"/><rect x="706.70" y="187.68" width="3.60" height="10.62" fill-opacity="0.127"/><rect x="706.70" y="198.30" width="3.60" height="10.62" fill-opacity="0.154"/><rect x="706.70" y="208.92" width="3.60" height="116.84" fill-opacity="0.165"/><rect x="706.70" y="325.76" width="3.60" height="10.62" fill-opacity="0.154"/><rect x="706.70" y="336.38" width="3.60" height="10.62" fill-opacity="0.127"/><rect x="706.70" y="347.01" width="3.60" height="10.62" fill-opacity="0.096"/><rect x="706.70" y="357.63" width="3.60" height="10.62" fill-opacity="0.061"/><rect x="706.70" y="368.25" width="3.60" height="10.62" fill-opacity="0.022"/><rect x="717.70" y="155.81" width="3.60" height="10.62" fill-opacity="0.022"/><rect x="717.70" y="166.43" width="3.60" height="10.62" fill-opacity="0.061"/><rect x="717.70" y="177.05" width="3.60" height="10.62" fill-opacity="0.096"/><rect x="717.70" y="187.68" width="3.60" height="10.62" fill-opacity="0.127"/><rect x="717.70" y="198.30" width="3.60" height="10.62" fill-opacity="0.154"/><rect x="717.70" y="208.92" width="3.60" height="116.84" fill-opacity="0.165"/><rect x="717.70" y="325.76" width="3.60" height="10.62" fill-opacity="0.154"/><rect x="717.70" y="336.38" width="3.60" height="10.62" fill-opacity="0.127"/><rect x="717.70" y="347.01" width="3.60" height="10.62" fill-opacity="0.096"/><rect x="717.70" y="357.63" width="3.60" height="10.62" fill-opacity="0.061"/><rect x="717.70" y="368.25" width="3.60" height="10.62" fill-opacity="0.022"/><rect x="727.70" y="155.81" width="3.60" height="10.62" fill-opacity="0.022"/><rect x="727.70" y="166.43" width="3.60" height="10.62" fill-opacity="0.061"/><rect x="727.70" y="177.05" width="3.60" height="10.62" fill-opacity="0.096"/><rect x="727.70" y="187.68" width="3.60" height="10.62" fill-opacity="0.127"/><rect x="727.70" y="198.30" width="3.60" height="10.62" fill-opacity="0.154"/><rect x="727.70" y="208.92" width="3.60" height="116.84" fill-opacity="0.165"/><rect x="727.70" y="325.76" width="3.60" height="10.62" fill-opacity="0.154"/><rect x="727.70" y="336.38" width="3.60" height="10.62" fill-opacity="0.127"/><rect x="727.70" y="347.01" width="3.60" height="10.62" fill-opacity="0.096"/><rect x="727.70" y="357.63" width="3.60" height="10.62" fill-opacity="0.061"/><rect x="727.70" y="368.25" width="3.60" height="10.62" fill-opacity="0.022"/><rect x="738.70" y="155.81" width="3.60" height="10.62" fill-opacity="0.022"/><rect x="738.70" y="166.43" width="3.60" height="10.62" fill-opacity="0.061"/><rect x="738.70" y="177.05" width="3.60" height="10.62" fill-opacity="0.096"/><rect x="738.70" y="187.68" width="3.60" height="10.62" fill-opacity="0.127"/><rect x="738.70" y="198.30" width="3.60" height="10.62" fill-opacity="0.154"/><rect x="738.70" y="208.92" width="3.60" height="116.84" fill-opacity="0.165"/><rect x="738.70" y="325.76" width="3.60" height="10.62" fill-opacity="0.154"/><rect x="738.70" y="336.38" width="3.60" height="10.62" fill-opacity="0.127"/><rect x="738.70" y="347.01" width="3.60" height="10.62" fill-opacity="0.096"/><rect x="738.70" y="357.63" width="3.60" height="10.62" fill-opacity="0.061"/><rect x="738.70" y="368.25" width="3.60" height="10.62" fill-opacity="0.022"/><rect x="748.70" y="155.81" width="3.60" height="10.62" fill-opacity="0.022"/><rect x="748.70" y="166.43" width="3.60" height="10.62" fill-opacity="0.061"/><rect x="748.70" y="177.05" width="3.60" height="10.62" fill-opacity="0.096"/><rect x="748.70" y="187.68" width="3.60" height="10.62" fill-opacity="0.127"/><rect x="748.70" y="198.30" width="3.60" height="10.62" fill-opacity="0.154"/><rect x="748.70" y="208.92" width="3.60" height="116.84" fill-opacity="0.165"/><rect x="748.70" y="325.76" width="3.60" height="10.62" fill-opacity="0.154"/><rect x="748.70" y="336.38" width="3.60" height="10.62" fill-opacity="0.127"/><rect x="748.70" y="347.01" width="3.60" height="10.62" fill-opacity="0.096"/><rect x="748.70" y="357.63" width="3.60" height="10.62" fill-opacity="0.061"/><rect x="748.70" y="368.25" width="3.60" height="10.62" fill-opacity="0.022"/><rect x="759.70" y="155.81" width="3.60" height="10.62" fill-opacity="0.022"/><rect x="759.70" y="166.43" width="3.60" height="10.62" fill-opacity="0.061"/><rect x="759.70" y="177.05" width="3.60" height="10.62" fill-opacity="0.096"/><rect x="759.70" y="187.68" width="3.60" height="10.62" fill-opacity="0.127"/><rect x="759.70" y="198.30" width="3.60" height="10.62" fill-opacity="0.154"/><rect x="759.70" y="208.92" width="3.60" height="116.84" fill-opacity="0.165"/><rect x="759.70" y="325.76" width="3.60" height="10.62" fill-opacity="0.154"/><rect x="759.70" y="336.38" width="3.60" height="10.62" fill-opacity="0.127"/><rect x="759.70" y="347.01" width="3.60" height="10.62" fill-opacity="0.096"/><rect x="759.70" y="357.63" width="3.60" height="10.62" fill-opacity="0.061"/><rect x="759.70" y="368.25" width="3.60" height="10.62" fill-opacity="0.022"/><rect x="770.70" y="155.81" width="3.60" height="10.62" fill-opacity="0.022"/><rect x="770.70" y="166.43" width="3.60" height="10.62" fill-opacity="0.061"/><rect x="770.70" y="177.05" width="3.60" height="10.62" fill-opacity="0.096"/><rect x="770.70" y="187.68" width="3.60" height="10.62" fill-opacity="0.127"/><rect x="770.70" y="198.30" width="3.60" height="10.62" fill-opacity="0.154"/><rect x="770.70" y="208.92" width="3.60" height="116.84" fill-opacity="0.165"/><rect x="770.70" y="325.76" width="3.60" height="10.62" fill-opacity="0.154"/><rect x="770.70" y="336.38" width="3.60" height="10.62" fill-opacity="0.127"/><rect x="770.70" y="347.01" width="3.60" height="10.62" fill-opacity="0.096"/><rect x="770.70" y="357.63" width="3.60" height="10.62" fill-opacity="0.061"/><rect x="770.70" y="368.25" width="3.60" height="10.62" fill-opacity="0.022"/><rect x="780.70" y="155.81" width="3.60" height="10.62" fill-opacity="0.022"/><rect x="780.70" y="166.43" width="3.60" height="10.62" fill-opacity="0.061"/><rect x="780.70" y="177.05" width="3.60" height="10.62" fill-opacity="0.096"/><rect x="780.70" y="187.68" width="3.60" height="10.62" fill-opacity="0.127"/><rect x="780.70" y="198.30" width="3.60" height="10.62" fill-opacity="0.154"/><rect x="780.70" y="208.92" width="3.60" height="116.84" fill-opacity="0.165"/><rect x="780.70" y="325.76" width="3.60" height="10.62" fill-opacity="0.154"/><rect x="780.70" y="336.38" width="3.60" height="10.62" fill-opacity="0.127"/><rect x="780.70" y="347.01" width="3.60" height="10.62" fill-opacity="0.096"/><rect x="780.70" y="357.63" width="3.60" height="10.62" fill-opacity="0.061"/><rect x="780.70" y="368.25" width="3.60" height="10.62" fill-opacity="0.022"/><rect x="791.70" y="155.81" width="3.60" height="10.62" fill-opacity="0.022"/><rect x="791.70" y="166.43" width="3.60" height="10.62" fill-opacity="0.061"/><rect x="791.70" y="177.05" width="3.60" height="10.62" fill-opacity="0.096"/><rect x="791.70" y="187.68" width="3.60" height="10.62" fill-opacity="0.127"/><rect x="791.70" y="198.30" width="3.60" height="10.62" fill-opacity="0.154"/><rect x="791.70" y="208.92" width="3.60" height="116.84" fill-opacity="0.165"/><rect x="791.70" y="325.76" width="3.60" height="10.62" fill-opacity="0.154"/><rect x="791.70" y="336.38" width="3.60" height="10.62" fill-opacity="0.127"/><rect x="791.70" y="347.01" width="3.60" height="10.62" fill-opacity="0.096"/><rect x="791.70" y="357.63" width="3.60" height="10.62" fill-opacity="0.061"/><rect x="791.70" y="368.25" width="3.60" height="10.62" fill-opacity="0.022"/><rect x="801.70" y="155.81" width="3.60" height="10.62" fill-opacity="0.022"/><rect x="801.70" y="166.43" width="3.60" height="10.62" fill-opacity="0.061"/><rect x="801.70" y="177.05" width="3.60" height="10.62" fill-opacity="0.096"/><rect x="801.70" y="187.68" width="3.60" height="10.62" fill-opacity="0.127"/><rect x="801.70" y="198.30" width="3.60" height="10.62" fill-opacity="0.154"/><rect x="801.70" y="208.92" width="3.60" height="116.84" fill-opacity="0.165"/><rect x="801.70" y="325.76" width="3.60" height="10.62" fill-opacity="0.154"/><rect x="801.70" y="336.38" width="3.60" height="10.62" fill-opacity="0.127"/><rect x="801.70" y="347.01" width="3.60" height="10.62" fill-opacity="0.096"/><rect x="801.70" y="357.63" width="3.60" height="10.62" fill-opacity="0.061"/><rect x="801.70" y="368.25" width="3.60" height="10.62" fill-opacity="0.022"/><rect x="812.70" y="155.81" width="3.60" height="10.62" fill-opacity="0.022"/><rect x="812.70" y="166.43" width="3.60" height="10.62" fill-opacity="0.061"/><rect x="812.70" y="177.05" width="3.60" height="10.62" fill-opacity="0.096"/><rect x="812.70" y="187.68" width="3.60" height="10.62" fill-opacity="0.127"/><rect x="812.70" y="198.30" width="3.60" height="10.62" fill-opacity="0.154"/><rect x="812.70" y="208.92" width="3.60" height="116.84" fill-opacity="0.165"/><rect x="812.70" y="325.76" width="3.60" height="10.62" fill-opacity="0.154"/><rect x="812.70" y="336.38" width="3.60" height="10.62" fill-opacity="0.127"/><rect x="812.70" y="347.01" width="3.60" height="10.62" fill-opacity="0.096"/><rect x="812.70" y="357.63" width="3.60" height="10.62" fill-opacity="0.061"/><rect x="812.70" y="368.25" width="3.60" height="10.62" fill-opacity="0.022"/><rect x="823.70" y="155.81" width="3.60" height="10.62" fill-opacity="0.022"/><rect x="823.70" y="166.43" width="3.60" height="10.62" fill-opacity="0.061"/><rect x="823.70" y="177.05" width="3.60" height="10.62" fill-opacity="0.096"/><rect x="823.70" y="187.68" width="3.60" height="10.62" fill-opacity="0.127"/><rect x="823.70" y="198.30" width="3.60" height="10.62" fill-opacity="0.154"/><rect x="823.70" y="208.92" width="3.60" height="116.84" fill-opacity="0.165"/><rect x="823.70" y="325.76" width="3.60" height="10.62" fill-opacity="0.154"/><rect x="823.70" y="336.38" width="3.60" height="10.62" fill-opacity="0.127"/><rect x="823.70" y="347.01" width="3.60" height="10.62" fill-opacity="0.096"/><rect x="823.70" y="357.63" width="3.60" height="10.62" fill-opacity="0.061"/><rect x="823.70" y="368.25" width="3.60" height="10.62" fill-opacity="0.022"/><rect x="833.70" y="155.81" width="3.60" height="10.62" fill-opacity="0.022"/><rect x="833.70" y="166.43" width="3.60" height="10.62" fill-opacity="0.061"/><rect x="833.70" y="177.05" width="3.60" height="10.62" fill-opacity="0.096"/><rect x="833.70" y="187.68" width="3.60" height="10.62" fill-opacity="0.127"/><rect x="833.70" y="198.30" width="3.60" height="10.62" fill-opacity="0.154"/><rect x="833.70" y="208.92" width="3.60" height="116.84" fill-opacity="0.165"/><rect x="833.70" y="325.76" width="3.60" height="10.62" fill-opacity="0.154"/><rect x="833.70" y="336.38" width="3.60" height="10.62" fill-opacity="0.127"/><rect x="833.70" y="347.01" width="3.60" height="10.62" fill-opacity="0.096"/><rect x="833.70" y="357.63" width="3.60" height="10.62" fill-opacity="0.061"/><rect x="833.70" y="368.25" width="3.60" height="10.62" fill-opacity="0.022"/><rect x="844.70" y="155.81" width="3.60" height="10.62" fill-opacity="0.022"/><rect x="844.70" y="166.43" width="3.60" height="10.62" fill-opacity="0.061"/><rect x="844.70" y="177.05" width="3.60" height="10.62" fill-opacity="0.096"/><rect x="844.70" y="187.68" width="3.60" height="10.62" fill-opacity="0.127"/><rect x="844.70" y="198.30" width="3.60" height="10.62" fill-opacity="0.154"/><rect x="844.70" y="208.92" width="3.60" height="116.84" fill-opacity="0.165"/><rect x="844.70" y="325.76" width="3.60" height="10.62" fill-opacity="0.154"/><rect x="844.70" y="336.38" width="3.60" height="10.62" fill-opacity="0.127"/><rect x="844.70" y="347.01" width="3.60" height="10.62" fill-opacity="0.096"/><rect x="844.70" y="357.63" width="3.60" height="10.62" fill-opacity="0.061"/><rect x="844.70" y="368.25" width="3.60" height="10.62" fill-opacity="0.022"/><rect x="854.70" y="155.81" width="3.60" height="10.62" fill-opacity="0.022"/><rect x="854.70" y="166.43" width="3.60" height="10.62" fill-opacity="0.061"/><rect x="854.70" y="177.05" width="3.60" height="10.62" fill-opacity="0.096"/><rect x="854.70" y="187.68" width="3.60" height="10.62" fill-opacity="0.127"/><rect x="854.70" y="198.30" width="3.60" height="10.62" fill-opacity="0.154"/><rect x="854.70" y="208.92" width="3.60" height="116.84" fill-opacity="0.160"/><rect x="854.70" y="325.76" width="3.60" height="10.62" fill-opacity="0.154"/><rect x="854.70" y="336.38" width="3.60" height="10.62" fill-opacity="0.127"/><rect x="854.70" y="347.01" width="3.60" height="10.62" fill-opacity="0.096"/><rect x="854.70" y="357.63" width="3.60" height="10.62" fill-opacity="0.061"/><rect x="854.70" y="368.25" width="3.60" height="10.62" fill-opacity="0.022"/><rect x="865.70" y="155.81" width="3.60" height="10.62" fill-opacity="0.022"/><rect x="865.70" y="166.43" width="3.60" height="10.62" fill-opacity="0.061"/><rect x="865.70" y="177.05" width="3.60" height="10.62" fill-opacity="0.096"/><rect x="865.70" y="187.68" width="3.60" height="10.62" fill-opacity="0.127"/><rect x="865.70" y="198.30" width="3.60" height="138.09" fill-opacity="0.141"/><rect x="865.70" y="336.38" width="3.60" height="10.62" fill-opacity="0.127"/><rect x="865.70" y="347.01" width="3.60" height="10.62" fill-opacity="0.096"/><rect x="865.70" y="357.63" width="3.60" height="10.62" fill-opacity="0.061"/><rect x="865.70" y="368.25" width="3.60" height="10.62" fill-opacity="0.022"/><rect x="876.70" y="155.81" width="3.60" height="10.62" fill-opacity="0.022"/><rect x="876.70" y="166.43" width="3.60" height="10.62" fill-opacity="0.061"/><rect x="876.70" y="177.05" width="3.60" height="10.62" fill-opacity="0.096"/><rect x="876.70" y="187.68" width="3.60" height="159.33" fill-opacity="0.113"/><rect x="876.70" y="347.01" width="3.60" height="10.62" fill-opacity="0.096"/><rect x="876.70" y="357.63" width="3.60" height="10.62" fill-opacity="0.061"/><rect x="876.70" y="368.25" width="3.60" height="10.62" fill-opacity="0.022"/><rect x="886.70" y="155.81" width="3.60" height="10.62" fill-opacity="0.022"/><rect x="886.70" y="166.43" width="3.60" height="10.62" fill-opacity="0.061"/><rect x="886.70" y="177.05" width="3.60" height="180.57" fill-opacity="0.080"/><rect x="886.70" y="357.63" width="3.60" height="10.62" fill-opacity="0.061"/><rect x="886.70" y="368.25" width="3.60" height="10.62" fill-opacity="0.022"/><rect x="897.70" y="155.81" width="3.60" height="10.62" fill-opacity="0.022"/><rect x="897.70" y="166.43" width="3.60" height="201.82" fill-opacity="0.042"/><rect x="897.70" y="368.25" width="3.60" height="10.62" fill-opacity="0.022"/><rect x="907.70" y="155.81" width="3.60" height="223.06" fill-opacity="0.011"/><rect x="29.78" y="153.70" width="880.13" height="3.60" fill-opacity="0.011"/><rect x="29.78" y="164.70" width="10.60" height="3.60" fill-opacity="0.022"/><rect x="40.38" y="164.70" width="858.92" height="3.60" fill-opacity="0.042"/><rect x="899.31" y="164.70" width="10.60" height="3.60" fill-opacity="0.022"/><rect x="29.78" y="175.70" width="10.60" height="3.60" fill-opacity="0.022"/><rect x="40.38" y="175.70" width="10.60" height="3.60" fill-opacity="0.061"/><rect x="50.99" y="175.70" width="837.72" height="3.60" fill-opacity="0.080"/><rect x="888.70" y="175.70" width="10.60" height="3.60" fill-opacity="0.061"/><rect x="899.31" y="175.70" width="10.60" height="3.60" fill-opacity="0.022"/><rect x="29.78" y="185.70" width="10.60" height="3.60" fill-opacity="0.022"/><rect x="40.38" y="185.70" width="10.60" height="3.60" fill-opacity="0.061"/><rect x="50.99" y="185.70" width="10.60" height="3.60" fill-opacity="0.096"/><rect x="61.59" y="185.70" width="816.51" height="3.60" fill-opacity="0.113"/><rect x="878.10" y="185.70" width="10.60" height="3.60" fill-opacity="0.096"/><rect x="888.70" y="185.70" width="10.60" height="3.60" fill-opacity="0.061"/><rect x="899.31" y="185.70" width="10.60" height="3.60" fill-opacity="0.022"/><rect x="29.78" y="196.70" width="10.60" height="3.60" fill-opacity="0.022"/><rect x="40.38" y="196.70" width="10.60" height="3.60" fill-opacity="0.061"/><rect x="50.99" y="196.70" width="10.60" height="3.60" fill-opacity="0.096"/><rect x="61.59" y="196.70" width="10.60" height="3.60" fill-opacity="0.127"/><rect x="72.20" y="196.70" width="795.30" height="3.60" fill-opacity="0.141"/><rect x="867.50" y="196.70" width="10.60" height="3.60" fill-opacity="0.127"/><rect x="878.10" y="196.70" width="10.60" height="3.60" fill-opacity="0.096"/><rect x="888.70" y="196.70" width="10.60" height="3.60" fill-opacity="0.061"/><rect x="899.31" y="196.70" width="10.60" height="3.60" fill-opacity="0.022"/><rect x="29.78" y="206.70" width="10.60" height="3.60" fill-opacity="0.022"/><rect x="40.38" y="206.70" width="10.60" height="3.60" fill-opacity="0.061"/><rect x="50.99" y="206.70" width="10.60" height="3.60" fill-opacity="0.096"/><rect x="61.59" y="206.70" width="10.60" height="3.60" fill-opacity="0.127"/><rect x="72.20" y="206.70" width="10.60" height="3.60" fill-opacity="0.154"/><rect x="82.80" y="206.70" width="774.09" height="3.60" fill-opacity="0.160"/><rect x="856.89" y="206.70" width="10.60" height="3.60" fill-opacity="0.154"/><rect x="867.50" y="206.70" width="10.60" height="3.60" fill-opacity="0.127"/><rect x="878.10" y="206.70" width="10.60" height="3.60" fill-opacity="0.096"/><rect x="888.70" y="206.70" width="10.60" height="3.60" fill-opacity="0.061"/><rect x="899.31" y="206.70" width="10.60" height="3.60" fill-opacity="0.022"/><rect x="29.78" y="217.70" width="10.60" height="3.60" fill-opacity="0.022"/><rect x="40.38" y="217.70" width="10.60" height="3.60" fill-opacity="0.061"/><rect x="50.99" y="217.70" width="10.60" height="3.60" fill-opacity="0.096"/><rect x="61.59" y="217.70" width="10.60" height="3.60" fill-opacity="0.127"/><rect x="72.20" y="217.70" width="10.60" height="3.60" fill-opacity="0.154"/><rect x="82.80" y="217.70" width="774.09" height="3.60" fill-opacity="0.165"/><rect x="856.89" y="217.70" width="10.60" height="3.60" fill-opacity="0.154"/><rect x="867.50" y="217.70" width="10.60" height="3.60" fill-opacity="0.127"/><rect x="878.10" y="217.70" width="10.60" height="3.60" fill-opacity="0.096"/><rect x="888.70" y="217.70" width="10.60" height="3.60" fill-opacity="0.061"/><rect x="899.31" y="217.70" width="10.60" height="3.60" fill-opacity="0.022"/><rect x="29.78" y="228.70" width="10.60" height="3.60" fill-opacity="0.022"/><rect x="40.38" y="228.70" width="10.60" height="3.60" fill-opacity="0.061"/><rect x="50.99" y="228.70" width="10.60" height="3.60" fill-opacity="0.096"/><rect x="61.59" y="228.70" width="10.60" height="3.60" fill-opacity="0.127"/><rect x="72.20" y="228.70" width="10.60" height="3.60" fill-opacity="0.154"/><rect x="82.80" y="228.70" width="774.09" height="3.60" fill-opacity="0.165"/><rect x="856.89" y="228.70" width="10.60" height="3.60" fill-opacity="0.154"/><rect x="867.50" y="228.70" width="10.60" height="3.60" fill-opacity="0.127"/><rect x="878.10" y="228.70" width="10.60" height="3.60" fill-opacity="0.096"/><rect x="888.70" y="228.70" width="10.60" height="3.60" fill-opacity="0.061"/><rect x="899.31" y="228.70" width="10.60" height="3.60" fill-opacity="0.022"/><rect x="29.78" y="238.70" width="10.60" height="3.60" fill-opacity="0.022"/><rect x="40.38" y="238.70" width="10.60" height="3.60" fill-opacity="0.061"/><rect x="50.99" y="238.70" width="10.60" height="3.60" fill-opacity="0.096"/><rect x="61.59" y="238.70" width="10.60" height="3.60" fill-opacity="0.127"/><rect x="72.20" y="238.70" width="10.60" height="3.60" fill-opacity="0.154"/><rect x="82.80" y="238.70" width="774.09" height="3.60" fill-opacity="0.165"/><rect x="856.89" y="238.70" width="10.60" height="3.60" fill-opacity="0.154"/><rect x="867.50" y="238.70" width="10.60" height="3.60" fill-opacity="0.127"/><rect x="878.10" y="238.70" width="10.60" height="3.60" fill-opacity="0.096"/><rect x="888.70" y="238.70" width="10.60" height="3.60" fill-opacity="0.061"/><rect x="899.31" y="238.70" width="10.60" height="3.60" fill-opacity="0.022"/><rect x="29.78" y="249.70" width="10.60" height="3.60" fill-opacity="0.022"/><rect x="40.38" y="249.70" width="10.60" height="3.60" fill-opacity="0.061"/><rect x="50.99" y="249.70" width="10.60" height="3.60" fill-opacity="0.096"/><rect x="61.59" y="249.70" width="10.60" height="3.60" fill-opacity="0.127"/><rect x="72.20" y="249.70" width="10.60" height="3.60" fill-opacity="0.154"/><rect x="82.80" y="249.70" width="774.09" height="3.60" fill-opacity="0.165"/><rect x="856.89" y="249.70" width="10.60" height="3.60" fill-opacity="0.154"/><rect x="867.50" y="249.70" width="10.60" height="3.60" fill-opacity="0.127"/><rect x="878.10" y="249.70" width="10.60" height="3.60" fill-opacity="0.096"/><rect x="888.70" y="249.70" width="10.60" height="3.60" fill-opacity="0.061"/><rect x="899.31" y="249.70" width="10.60" height="3.60" fill-opacity="0.022"/><rect x="29.78" y="260.70" width="10.60" height="3.60" fill-opacity="0.022"/><rect x="40.38" y="260.70" width="10.60" height="3.60" fill-opacity="0.061"/><rect x="50.99" y="260.70" width="10.60" height="3.60" fill-opacity="0.096"/><rect x="61.59" y="260.70" width="10.60" height="3.60" fill-opacity="0.127"/><rect x="72.20" y="260.70" width="10.60" height="3.60" fill-opacity="0.154"/><rect x="82.80" y="260.70" width="774.09" height="3.60" fill-opacity="0.165"/><rect x="856.89" y="260.70" width="10.60" height="3.60" fill-opacity="0.154"/><rect x="867.50" y="260.70" width="10.60" height="3.60" fill-opacity="0.127"/><rect x="878.10" y="260.70" width="10.60" height="3.60" fill-opacity="0.096"/><rect x="888.70" y="260.70" width="10.60" height="3.60" fill-opacity="0.061"/><rect x="899.31" y="260.70" width="10.60" height="3.60" fill-opacity="0.022"/><rect x="29.78" y="270.70" width="10.60" height="3.60" fill-opacity="0.022"/><rect x="40.38" y="270.70" width="10.60" height="3.60" fill-opacity="0.061"/><rect x="50.99" y="270.70" width="10.60" height="3.60" fill-opacity="0.096"/><rect x="61.59" y="270.70" width="10.60" height="3.60" fill-opacity="0.127"/><rect x="72.20" y="270.70" width="10.60" height="3.60" fill-opacity="0.154"/><rect x="82.80" y="270.70" width="774.09" height="3.60" fill-opacity="0.165"/><rect x="856.89" y="270.70" width="10.60" height="3.60" fill-opacity="0.154"/><rect x="867.50" y="270.70" width="10.60" height="3.60" fill-opacity="0.127"/><rect x="878.10" y="270.70" width="10.60" height="3.60" fill-opacity="0.096"/><rect x="888.70" y="270.70" width="10.60" height="3.60" fill-opacity="0.061"/><rect x="899.31" y="270.70" width="10.60" height="3.60" fill-opacity="0.022"/><rect x="29.78" y="281.70" width="10.60" height="3.60" fill-opacity="0.022"/><rect x="40.38" y="281.70" width="10.60" height="3.60" fill-opacity="0.061"/><rect x="50.99" y="281.70" width="10.60" height="3.60" fill-opacity="0.096"/><rect x="61.59" y="281.70" width="10.60" height="3.60" fill-opacity="0.127"/><rect x="72.20" y="281.70" width="10.60" height="3.60" fill-opacity="0.154"/><rect x="82.80" y="281.70" width="774.09" height="3.60" fill-opacity="0.165"/><rect x="856.89" y="281.70" width="10.60" height="3.60" fill-opacity="0.154"/><rect x="867.50" y="281.70" width="10.60" height="3.60" fill-opacity="0.127"/><rect x="878.10" y="281.70" width="10.60" height="3.60" fill-opacity="0.096"/><rect x="888.70" y="281.70" width="10.60" height="3.60" fill-opacity="0.061"/><rect x="899.31" y="281.70" width="10.60" height="3.60" fill-opacity="0.022"/><rect x="29.78" y="291.70" width="10.60" height="3.60" fill-opacity="0.022"/><rect x="40.38" y="291.70" width="10.60" height="3.60" fill-opacity="0.061"/><rect x="50.99" y="291.70" width="10.60" height="3.60" fill-opacity="0.096"/><rect x="61.59" y="291.70" width="10.60" height="3.60" fill-opacity="0.127"/><rect x="72.20" y="291.70" width="10.60" height="3.60" fill-opacity="0.154"/><rect x="82.80" y="291.70" width="774.09" height="3.60" fill-opacity="0.165"/><rect x="856.89" y="291.70" width="10.60" height="3.60" fill-opacity="0.154"/><rect x="867.50" y="291.70" width="10.60" height="3.60" fill-opacity="0.127"/><rect x="878.10" y="291.70" width="10.60" height="3.60" fill-opacity="0.096"/><rect x="888.70" y="291.70" width="10.60" height="3.60" fill-opacity="0.061"/><rect x="899.31" y="291.70" width="10.60" height="3.60" fill-opacity="0.022"/><rect x="29.78" y="302.70" width="10.60" height="3.60" fill-opacity="0.022"/><rect x="40.38" y="302.70" width="10.60" height="3.60" fill-opacity="0.061"/><rect x="50.99" y="302.70" width="10.60" height="3.60" fill-opacity="0.096"/><rect x="61.59" y="302.70" width="10.60" height="3.60" fill-opacity="0.127"/><rect x="72.20" y="302.70" width="10.60" height="3.60" fill-opacity="0.154"/><rect x="82.80" y="302.70" width="774.09" height="3.60" fill-opacity="0.165"/><rect x="856.89" y="302.70" width="10.60" height="3.60" fill-opacity="0.154"/><rect x="867.50" y="302.70" width="10.60" height="3.60" fill-opacity="0.127"/><rect x="878.10" y="302.70" width="10.60" height="3.60" fill-opacity="0.096"/><rect x="888.70" y="302.70" width="10.60" height="3.60" fill-opacity="0.061"/><rect x="899.31" y="302.70" width="10.60" height="3.60" fill-opacity="0.022"/><rect x="29.78" y="313.70" width="10.60" height="3.60" fill-opacity="0.022"/><rect x="40.38" y="313.70" width="10.60" height="3.60" fill-opacity="0.061"/><rect x="50.99" y="313.70" width="10.60" height="3.60" fill-opacity="0.096"/><rect x="61.59" y="313.70" width="10.60" height="3.60" fill-opacity="0.127"/><rect x="72.20" y="313.70" width="10.60" height="3.60" fill-opacity="0.154"/><rect x="82.80" y="313.70" width="774.09" height="3.60" fill-opacity="0.165"/><rect x="856.89" y="313.70" width="10.60" height="3.60" fill-opacity="0.154"/><rect x="867.50" y="313.70" width="10.60" height="3.60" fill-opacity="0.127"/><rect x="878.10" y="313.70" width="10.60" height="3.60" fill-opacity="0.096"/><rect x="888.70" y="313.70" width="10.60" height="3.60" fill-opacity="0.061"/><rect x="899.31" y="313.70" width="10.60" height="3.60" fill-opacity="0.022"/><rect x="29.78" y="323.70" width="10.60" height="3.60" fill-opacity="0.022"/><rect x="40.38" y="323.70" width="10.60" height="3.60" fill-opacity="0.061"/><rect x="50.99" y="323.70" width="10.60" height="3.60" fill-opacity="0.096"/><rect x="61.59" y="323.70" width="10.60" height="3.60" fill-opacity="0.127"/><rect x="72.20" y="323.70" width="10.60" height="3.60" fill-opacity="0.154"/><rect x="82.80" y="323.70" width="774.09" height="3.60" fill-opacity="0.160"/><rect x="856.89" y="323.70" width="10.60" height="3.60" fill-opacity="0.154"/><rect x="867.50" y="323.70" width="10.60" height="3.60" fill-opacity="0.127"/><rect x="878.10" y="323.70" width="10.60" height="3.60" fill-opacity="0.096"/><rect x="888.70" y="323.70" width="10.60" height="3.60" fill-opacity="0.061"/><rect x="899.31" y="323.70" width="10.60" height="3.60" fill-opacity="0.022"/><rect x="29.78" y="334.70" width="10.60" height="3.60" fill-opacity="0.022"/><rect x="40.38" y="334.70" width="10.60" height="3.60" fill-opacity="0.061"/><rect x="50.99" y="334.70" width="10.60" height="3.60" fill-opacity="0.096"/><rect x="61.59" y="334.70" width="10.60" height="3.60" fill-opacity="0.127"/><rect x="72.20" y="334.70" width="795.30" height="3.60" fill-opacity="0.141"/><rect x="867.50" y="334.70" width="10.60" height="3.60" fill-opacity="0.127"/><rect x="878.10" y="334.70" width="10.60" height="3.60" fill-opacity="0.096"/><rect x="888.70" y="334.70" width="10.60" height="3.60" fill-opacity="0.061"/><rect x="899.31" y="334.70" width="10.60" height="3.60" fill-opacity="0.022"/><rect x="29.78" y="345.70" width="10.60" height="3.60" fill-opacity="0.022"/><rect x="40.38" y="345.70" width="10.60" height="3.60" fill-opacity="0.061"/><rect x="50.99" y="345.70" width="10.60" height="3.60" fill-opacity="0.096"/><rect x="61.59" y="345.70" width="816.51" height="3.60" fill-opacity="0.113"/><rect x="878.10" y="345.70" width="10.60" height="3.60" fill-opacity="0.096"/><rect x="888.70" y="345.70" width="10.60" height="3.60" fill-opacity="0.061"/><rect x="899.31" y="345.70" width="10.60" height="3.60" fill-opacity="0.022"/><rect x="29.78" y="355.70" width="10.60" height="3.60" fill-opacity="0.022"/><rect x="40.38" y="355.70" width="10.60" height="3.60" fill-opacity="0.061"/><rect x="50.99" y="355.70" width="837.72" height="3.60" fill-opacity="0.080"/><rect x="888.70" y="355.70" width="10.60" height="3.60" fill-opacity="0.061"/><rect x="899.31" y="355.70" width="10.60" height="3.60" fill-opacity="0.022"/><rect x="29.78" y="366.70" width="10.60" height="3.60" fill-opacity="0.022"/><rect x="40.38" y="366.70" width="858.92" height="3.60" fill-opacity="0.042"/><rect x="899.31" y="366.70" width="10.60" height="3.60" fill-opacity="0.022"/><rect x="29.78" y="376.70" width="880.13" height="3.60" fill-opacity="0.011"/></g><g fill="rgb(255,128,51)"><rect x="28.70" y="155.81" width="1.60" height="223.06" fill-opacity="0.05"/><rect x="39.70" y="155.81" width="1.60" height="10.62" fill-opacity="0.098"/><rect x="39.70" y="166.43" width="1.60" height="201.82" fill-opacity="0.193"/><rect x="39.70" y="368.25" width="1.60" height="10.62" fill-opacity="0.098"/><rect x="49.70" y="155.81" width="1.60" height="10.62" fill-opacity="0.098"/><rect x="49.70" y="166.43" width="1.60" height="10.62" fill-opacity="0.278"/><rect x="49.70" y="177.05" width="1.60" height="180.57" fill-opacity="0.363"/><rect x="49.70" y="357.63" width="1.60" height="10.62" fill-opacity="0.278"/><rect x="49.70" y="368.25" width="1.60" height="10.62" fill-opacity="0.098"/><rect x="60.70" y="155.81" width="1.60" height="10.62" fill-opacity="0.098"/><rect x="60.70" y="166.43" width="1.60" height="10.62" fill-opacity="0.278"/><rect x="60.70" y="177.05" width="1.60" height="10.62" fill-opacity="0.438"/><rect x="60.70" y="187.68" width="1.60" height="159.33" fill-opacity="0.512"/><rect x="60.70" y="347.01" width="1.60" height="10.62" fill-opacity="0.438"/><rect x="60.70" y="357.63" width="1.60" height="10.62" fill-opacity="0.278"/><rect x="60.70" y="368.25" width="1.60" height="10.62" fill-opacity="0.098"/><rect x="71.70" y="155.81" width="1.60" height="10.62" fill-opacity="0.098"/><rect x="71.70" y="166.43" width="1.60" height="10.62" fill-opacity="0.278"/><rect x="71.70" y="177.05" width="1.60" height="10.62" fill-opacity="0.438"/><rect x="71.70" y="187.68" width="1.60" height="10.62" fill-opacity="0.577"/><rect x="71.70" y="198.30" width="1.60" height="138.09" fill-opacity="0.642"/><rect x="71.70" y="336.38" width="1.60" height="10.62" fill-opacity="0.577"/><rect x="71.70" y="347.01" width="1.60" height="10.62" fill-opacity="0.438"/><rect x="71.70" y="357.63" width="1.60" height="10.62" fill-opacity="0.278"/><rect x="71.70" y="368.25" width="1.60" height="10.62" fill-opacity="0.098"/><rect x="81.70" y="155.81" width="1.60" height="10.62" fill-opacity="0.098"/><rect x="81.70" y="166.43" width="1.60" height="10.62" fill-opacity="0.278"/><rect x="81.70" y="177.05" width="1.60" height="10.62" fill-opacity="0.438"/><rect x="81.70" y="187.68" width="1.60" height="10.62" fill-opacity="0.577"/><rect x="81.70" y="198.30" width="1.60" height="10.62" fill-opacity="0.698"/><rect x="81.70" y="208.92" width="1.60" height="116.84" fill-opacity="0.725"/><rect x="81.70" y="325.76" width="1.60" height="10.62" fill-opacity="0.698"/><rect x="81.70" y="336.38" width="1.60" height="10.62" fill-opacity="0.577"/><rect x="81.70" y="347.01" width="1.60" height="10.62" fill-opacity="0.438"/><rect x="81.70" y="357.63" width="1.60" height="10.62" fill-opacity="0.278"/><rect x="81.70" y="368.25" width="1.60" height="10.62" fill-opacity="0.098"/><rect x="92.70" y="155.81" width="1.60" height="10.62" fill-opacity="0.098"/><rect x="92.70" y="166.43" width="1.60" height="10.62" fill-opacity="0.278"/><rect x="92.70" y="177.05" width="1.60" height="10.62" fill-opacity="0.438"/><rect x="92.70" y="187.68" width="1.60" height="10.62" fill-opacity="0.577"/><rect x="92.70" y="198.30" width="1.60" height="10.62" fill-opacity="0.698"/><rect x="92.70" y="208.92" width="1.60" height="116.84" fill-opacity="0.75"/><rect x="92.70" y="325.76" width="1.60" height="10.62" fill-opacity="0.698"/><rect x="92.70" y="336.38" width="1.60" height="10.62" fill-opacity="0.577"/><rect x="92.70" y="347.01" width="1.60" height="10.62" fill-opacity="0.438"/><rect x="92.70" y="357.63" width="1.60" height="10.62" fill-opacity="0.278"/><rect x="92.70" y="368.25" width="1.60" height="10.62" fill-opacity="0.098"/><rect x="103.70" y="155.81" width="1.60" height="10.62" fill-opacity="0.098"/><rect x="103.70" y="166.43" width="1.60" height="10.62" fill-opacity="0.278"/><rect x="103.70" y="177.05" width="1.60" height="10.62" fill-opacity="0.438"/><rect x="103.70" y="187.68" width="1.60" height="10.62" fill-opacity="0.577"/><rect x="103.70" y="198.30" width="1.60" height="10.62" fill-opacity="0.698"/><rect x="103.70" y="208.92" width="1.60" height="116.84" fill-opacity="0.75"/><rect x="103.70" y="325.76" width="1.60" height="10.62" fill-opacity="0.698"/><rect x="103.70" y="336.38" width="1.60" height="10.62" fill-opacity="0.577"/><rect x="103.70" y="347.01" width="1.60" height="10.62" fill-opacity="0.438"/><rect x="103.70" y="357.63" width="1.60" height="10.62" fill-opacity="0.278"/><rect x="103.70" y="368.25" width="1.60" height="10.62" fill-opacity="0.098"/><rect x="113.70" y="155.81" width="1.60" height="10.62" fill-opacity="0.098"/><rect x="113.70" y="166.43" width="1.60" height="10.62" fill-opacity="0.278"/><rect x="113.70" y="177.05" width="1.60" height="10.62" fill-opacity="0.438"/><rect x="113.70" y="187.68" width="1.60" height="10.62" fill-opacity="0.577"/><rect x="113.70" y="198.30" width="1.60" height="10.62" fill-opacity="0.698"/><rect x="113.70" y="208.92" width="1.60" height="116.84" fill-opacity="0.75"/><rect x="113.70" y="325.76" width="1.60" height="10.62" fill-opacity="0.698"/><rect x="113.70" y="336.38" width="1.60" height="10.62" fill-opacity="0.577"/><rect x="113.70" y="347.01" width="1.60" height="10.62" fill-opacity="0.438"/><rect x="113.70" y="357.63" width="1.60" height="10.62" fill-opacity="0.278"/><rect x="113.70" y="368.25" width="1.60" height="10.62" fill-opacity="0.098"/><rect x="124.70" y="155.81" width="1.60" height="10.62" fill-opacity="0.098"/><rect x="124.70" y="166.43" width="1.60" height="10.62" fill-opacity="0.278"/><rect x="124.70" y="177.05" width="1.60" height="10.62" fill-opacity="0.438"/><rect x="124.70" y="187.68" width="1.60" height="10.62" fill-opacity="0.577"/><rect x="124.70" y="198.30" width="1.60" height="10.62" fill-opacity="0.698"/><rect x="124.70" y="208.92" width="1.60" height="116.84" fill-opacity="0.75"/><rect x="124.70" y="325.76" width="1.60" height="10.62" fill-opacity="0.698"/><rect x="124.70" y="336.38" width="1.60" height="10.62" fill-opacity="0.577"/><rect x="124.70" y="347.01" width="1.60" height="10.62" fill-opacity="0.438"/><rect x="124.70" y="357.63" width="1.60" height="10.62" fill-opacity="0.278"/><rect x="124.70" y="368.25" width="1.60" height="10.62" fill-opacity="0.098"/><rect x="134.70" y="155.81" width="1.60" height="10.62" fill-opacity="0.098"/><rect x="134.70" y="166.43" width="1.60" height="10.62" fill-opacity="0.278"/><rect x="134.70" y="177.05" width="1.60" height="10.62" fill-opacity="0.438"/><rect x="134.70" y="187.68" width="1.60" height="10.62" fill-opacity="0.577"/><rect x="134.70" y="198.30" width="1.60" height="10.62" fill-opacity="0.698"/><rect x="134.70" y="208.92" width="1.60" height="116.84" fill-opacity="0.75"/><rect x="134.70" y="325.76" width="1.60" height="10.62" fill-opacity="0.698"/><rect x="134.70" y="336.38" width="1.60" height="10.62" fill-opacity="0.577"/><rect x="134.70" y="347.01" width="1.60" height="10.62" fill-opacity="0.438"/><rect x="134.70" y="357.63" width="1.60" height="10.62" fill-opacity="0.278"/><rect x="134.70" y="368.25" width="1.60" height="10.62" fill-opacity="0.098"/><rect x="145.70" y="155.81" width="1.60" height="10.62" fill-opacity="0.098"/><rect x="145.70" y="166.43" width="1.60" height="10.62" fill-opacity="0.278"/><rect x="145.70" y="177.05" width="1.60" height="10.62" fill-opacity="0.438"/><rect x="145.70" y="187.68" width="1.60" height="10.62" fill-opacity="0.577"/><rect x="145.70" y="198.30" width="1.60" height="10.62" fill-opacity="0.698"/><rect x="145.70" y="208.92" width="1.60" height="116.84" fill-opacity="0.75"/><rect x="145.70" y="325.76" width="1.60" height="10.62" fill-opacity="0.698"/><rect x="145.70" y="336.38" width="1.60" height="10.62" fill-opacity="0.577"/><rect x="145.70" y="347.01" width="1.60" height="10.62" fill-opacity="0.438"/><rect x="145.70" y="357.63" width="1.60" height="10.62" fill-opacity="0.278"/><rect x="145.70" y="368.25" width="1.60" height="10.62" fill-opacity="0.098"/><rect x="156.70" y="155.81" width="1.60" height="10.62" fill-opacity="0.098"/><rect x="156.70" y="166.43" width="1.60" height="10.62" fill-opacity="0.278"/><rect x="156.70" y="177.05" width="1.60" height="10.62" fill-opacity="0.438"/><rect x="156.70" y="187.68" width="1.60" height="10.62" fill-opacity="0.577"/><rect x="156.70" y="198.30" width="1.60" height="10.62" fill-opacity="0.698"/><rect x="156.70" y="208.92" width="1.60" height="116.84" fill-opacity="0.75"/><rect x="156.70" y="325.76" width="1.60" height="10.62" fill-opacity="0.698"/><rect x="156.70" y="336.38" width="1.60" height="10.62" fill-opacity="0.577"/><rect x="156.70" y="347.01" width="1.60" height="10.62" fill-opacity="0.438"/><rect x="156.70" y="357.63" width="1.60" height="10.62" fill-opacity="0.278"/><rect x="156.70" y="368.25" width="1.60" height="10.62" fill-opacity="0.098"/><rect x="166.70" y="155.81" width="1.60" height="10.62" fill-opacity="0.098"/><rect x="166.70" y="166.43" width="1.60" height="10.62" fill-opacity="0.278"/><rect x="166.70" y="177.05" width="1.60" height="10.62" fill-opacity="0.438"/><rect x="166.70" y="187.68" width="1.60" height="10.62" fill-opacity="0.577"/><rect x="166.70" y="198.30" width="1.60" height="10.62" fill-opacity="0.698"/><rect x="166.70" y="208.92" width="1.60" height="116.84" fill-opacity="0.75"/><rect x="166.70" y="325.76" width="1.60" height="10.62" fill-opacity="0.698"/><rect x="166.70" y="336.38" width="1.60" height="10.62" fill-opacity="0.577"/><rect x="166.70" y="347.01" width="1.60" height="10.62" fill-opacity="0.438"/><rect x="166.70" y="357.63" width="1.60" height="10.62" fill-opacity="0.278"/><rect x="166.70" y="368.25" width="1.60" height="10.62" fill-opacity="0.098"/><rect x="177.70" y="155.81" width="1.60" height="10.62" fill-opacity="0.098"/><rect x="177.70" y="166.43" width="1.60" height="10.62" fill-opacity="0.278"/><rect x="177.70" y="177.05" width="1.60" height="10.62" fill-opacity="0.438"/><rect x="177.70" y="187.68" width="1.60" height="10.62" fill-opacity="0.577"/><rect x="177.70" y="198.30" width="1.60" height="10.62" fill-opacity="0.698"/><rect x="177.70" y="208.92" width="1.60" height="116.84" fill-opacity="0.75"/><rect x="177.70" y="325.76" width="1.60" height="10.62" fill-opacity="0.698"/><rect x="177.70" y="336.38" width="1.60" height="10.62" fill-opacity="0.577"/><rect x="177.70" y="347.01" width="1.60" height="10.62" fill-opacity="0.438"/><rect x="177.70" y="357.63" width="1.60" height="10.62" fill-opacity="0.278"/><rect x="177.70" y="368.25" width="1.60" height="10.62" fill-opacity="0.098"/><rect x="187.70" y="155.81" width="1.60" height="10.62" fill-opacity="0.098"/><rect x="187.70" y="166.43" width="1.60" height="10.62" fill-opacity="0.278"/><rect x="187.70" y="177.05" width="1.60" height="10.62" fill-opacity="0.438"/><rect x="187.70" y="187.68" width="1.60" height="10.62" fill-opacity="0.577"/><rect x="187.70" y="198.30" width="1.60" height="10.62" fill-opacity="0.698"/><rect x="187.70" y="208.92" width="1.60" height="116.84" fill-opacity="0.75"/><rect x="187.70" y="325.76" width="1.60" height="10.62" fill-opacity="0.698"/><rect x="187.70" y="336.38" width="1.60" height="10.62" fill-opacity="0.577"/><rect x="187.70" y="347.01" width="1.60" height="10.62" fill-opacity="0.438"/><rect x="187.70" y="357.63" width="1.60" height="10.62" fill-opacity="0.278"/><rect x="187.70" y="368.25" width="1.60" height="10.62" fill-opacity="0.098"/><rect x="198.70" y="155.81" width="1.60" height="10.62" fill-opacity="0.098"/><rect x="198.70" y="166.43" width="1.60" height="10.62" fill-opacity="0.278"/><rect x="198.70" y="177.05" width="1.60" height="10.62" fill-opacity="0.438"/><rect x="198.70" y="187.68" width="1.60" height="10.62" fill-opacity="0.577"/><rect x="198.70" y="198.30" width="1.60" height="10.62" fill-opacity="0.698"/><rect x="198.70" y="208.92" width="1.60" height="116.84" fill-opacity="0.75"/><rect x="198.70" y="325.76" width="1.60" height="10.62" fill-opacity="0.698"/><rect x="198.70" y="336.38" width="1.60" height="10.62" fill-opacity="0.577"/><rect x="198.70" y="347.01" width="1.60" height="10.62" fill-opacity="0.438"/><rect x="198.70" y="357.63" width="1.60" height="10.62" fill-opacity="0.278"/><rect x="198.70" y="368.25" width="1.60" height="10.62" fill-opacity="0.098"/><rect x="209.70" y="155.81" width="1.60" height="10.62" fill-opacity="0.098"/><rect x="209.70" y="166.43" width="1.60" height="10.62" fill-opacity="0.278"/><rect x="209.70" y="177.05" width="1.60" height="10.62" fill-opacity="0.438"/><rect x="209.70" y="187.68" width="1.60" height="10.62" fill-opacity="0.577"/><rect x="209.70" y="198.30" width="1.60" height="10.62" fill-opacity="0.698"/><rect x="209.70" y="208.92" width="1.60" height="116.84" fill-opacity="0.75"/><rect x="209.70" y="325.76" width="1.60" height="10.62" fill-opacity="0.698"/><rect x="209.70" y="336.38" width="1.60" height="10.62" fill-opacity="0.577"/><rect x="209.70" y="347.01" width="1.60" height="10.62" fill-opacity="0.438"/><rect x="209.70" y="357.63" width="1.60" height="10.62" fill-opacity="0.278"/><rect x="209.70" y="368.25" width="1.60" height="10.62" fill-opacity="0.098"/><rect x="219.70" y="155.81" width="1.60" height="10.62" fill-opacity="0.098"/><rect x="219.70" y="166.43" width="1.60" height="10.62" fill-opacity="0.278"/><rect x="219.70" y="177.05" width="1.60" height="10.62" fill-opacity="0.438"/><rect x="219.70" y="187.68" width="1.60" height="10.62" fill-opacity="0.577"/><rect x="219.70" y="198.30" width="1.60" height="10.62" fill-opacity="0.698"/><rect x="219.70" y="208.92" width="1.60" height="116.84" fill-opacity="0.75"/><rect x="219.70" y="325.76" width="1.60" height="10.62" fill-opacity="0.698"/><rect x="219.70" y="336.38" width="1.60" height="10.62" fill-opacity="0.577"/><rect x="219.70" y="347.01" width="1.60" height="10.62" fill-opacity="0.438"/><rect x="219.70" y="357.63" width="1.60" height="10.62" fill-opacity="0.278"/><rect x="219.70" y="368.25" width="1.60" height="10.62" fill-opacity="0.098"/><rect x="230.70" y="155.81" width="1.60" height="10.62" fill-opacity="0.098"/><rect x="230.70" y="166.43" width="1.60" height="10.62" fill-opacity="0.278"/><rect x="230.70" y="177.05" width="1.60" height="10.62" fill-opacity="0.438"/><rect x="230.70" y="187.68" width="1.60" height="10.62" fill-opacity="0.577"/><rect x="230.70" y="198.30" width="1.60" height="10.62" fill-opacity="0.698"/><rect x="230.70" y="208.92" width="1.60" height="116.84" fill-opacity="0.75"/><rect x="230.70" y="325.76" width="1.60" height="10.62" fill-opacity="0.698"/><rect x="230.70" y="336.38" width="1.60" height="10.62" fill-opacity="0.577"/><rect x="230.70" y="347.01" width="1.60" height="10.62" fill-opacity="0.438"/><rect x="230.70" y="357.63" width="1.60" height="10.62" fill-opacity="0.278"/><rect x="230.70" y="368.25" width="1.60" height="10.62" fill-opacity="0.098"/><rect x="240.70" y="155.81" width="1.60" height="10.62" fill-opacity="0.098"/><rect x="240.70" y="166.43" width="1.60" height="10.62" fill-opacity="0.278"/><rect x="240.70" y="177.05" width="1.60" height="10.62" fill-opacity="0.438"/><rect x="240.70" y="187.68" width="1.60" height="10.62" fill-opacity="0.577"/><rect x="240.70" y="198.30" width="1.60" height="10.62" fill-opacity="0.698"/><rect x="240.70" y="208.92" width="1.60" height="116.84" fill-opacity="0.75"/><rect x="240.70" y="325.76" width="1.60" height="10.62" fill-opacity="0.698"/><rect x="240.70" y="336.38" width="1.60" height="10.62" fill-opacity="0.577"/><rect x="240.70" y="347.01" width="1.60" height="10.62" fill-opacity="0.438"/><rect x="240.70" y="357.63" width="1.60" height="10.62" fill-opacity="0.278"/><rect x="240.70" y="368.25" width="1.60" height="10.62" fill-opacity="0.098"/><rect x="251.70" y="155.81" width="1.60" height="10.62" fill-opacity="0.098"/><rect x="251.70" y="166.43" width="1.60" height="10.62" fill-opacity="0.278"/><rect x="251.70" y="177.05" width="1.60" height="10.62" fill-opacity="0.438"/><rect x="251.70" y="187.68" width="1.60" height="10.62" fill-opacity="0.577"/><rect x="251.70" y="198.30" width="1.60" height="10.62" fill-opacity="0.698"/><rect x="251.70" y="208.92" width="1.60" height="116.84" fill-opacity="0.75"/><rect x="251.70" y="325.76" width="1.60" height="10.62" fill-opacity="0.698"/><rect x="251.70" y="336.38" width="1.60" height="10.62" fill-opacity="0.577"/><rect x="251.70" y="347.01" width="1.60" height="10.62" fill-opacity="0.438"/><rect x="251.70" y="357.63" width="1.60" height="10.62" fill-opacity="0.278"/><rect x="251.70" y="368.25" width="1.60" height="10.62" fill-opacity="0.098"/><rect x="262.70" y="155.81" width="1.60" height="10.62" fill-opacity="0.098"/><rect x="262.70" y="166.43" width="1.60" height="10.62" fill-opacity="0.278"/><rect x="262.70" y="177.05" width="1.60" height="10.62" fill-opacity="0.438"/><rect x="262.70" y="187.68" width="1.60" height="10.62" fill-opacity="0.577"/><rect x="262.70" y="198.30" width="1.60" height="10.62" fill-opacity="0.698"/><rect x="262.70" y="208.92" width="1.60" height="116.84" fill-opacity="0.75"/><rect x="262.70" y="325.76" width="1.60" height="10.62" fill-opacity="0.698"/><rect x="262.70" y="336.38" width="1.60" height="10.62" fill-opacity="0.577"/><rect x="262.70" y="347.01" width="1.60" height="10.62" fill-opacity="0.438"/><rect x="262.70" y="357.63" width="1.60" height="10.62" fill-opacity="0.278"/><rect x="262.70" y="368.25" width="1.60" height="10.62" fill-opacity="0.098"/><rect x="272.70" y="155.81" width="1.60" height="10.62" fill-opacity="0.098"/><rect x="272.70" y="166.43" width="1.60" height="10.62" fill-opacity="0.278"/><rect x="272.70" y="177.05" width="1.60" height="10.62" fill-opacity="0.438"/><rect x="272.70" y="187.68" width="1.60" height="10.62" fill-opacity="0.577"/><rect x="272.70" y="198.30" width="1.60" height="10.62" fill-opacity="0.698"/><rect x="272.70" y="208.92" width="1.60" height="116.84" fill-opacity="0.75"/><rect x="272.70" y="325.76" width="1.60" height="10.62" fill-opacity="0.698"/><rect x="272.70" y="336.38" width="1.60" height="10.62" fill-opacity="0.577"/><rect x="272.70" y="347.01" width="1.60" height="10.62" fill-opacity="0.438"/><rect x="272.70" y="357.63" width="1.60" height="10.62" fill-opacity="0.278"/><rect x="272.70" y="368.25" width="1.60" height="10.62" fill-opacity="0.098"/><rect x="283.70" y="155.81" width="1.60" height="10.62" fill-opacity="0.098"/><rect x="283.70" y="166.43" width="1.60" height="10.62" fill-opacity="0.278"/><rect x="283.70" y="177.05" width="1.60" height="10.62" fill-opacity="0.438"/><rect x="283.70" y="187.68" width="1.60" height="10.62" fill-opacity="0.577"/><rect x="283.70" y="198.30" width="1.60" height="10.62" fill-opacity="0.698"/><rect x="283.70" y="208.92" width="1.60" height="116.84" fill-opacity="0.75"/><rect x="283.70" y="325.76" width="1.60" height="10.62" fill-opacity="0.698"/><rect x="283.70" y="336.38" width="1.60" height="10.62" fill-opacity="0.577"/><rect x="283.70" y="347.01" width="1.60" height="10.62" fill-opacity="0.438"/><rect x="283.70" y="357.63" width="1.60" height="10.62" fill-opacity="0.278"/><rect x="283.70" y="368.25" width="1.60" height="10.62" fill-opacity="0.098"/><rect x="293.70" y="155.81" width="1.60" height="10.62" fill-opacity="0.098"/><rect x="293.70" y="166.43" width="1.60" height="10.62" fill-opacity="0.278"/><rect x="293.70" y="177.05" width="1.60" height="10.62" fill-opacity="0.438"/><rect x="293.70" y="187.68" width="1.60" height="10.62" fill-opacity="0.577"/><rect x="293.70" y="198.30" width="1.60" height="10.62" fill-opacity="0.698"/><rect x="293.70" y="208.92" width="1.60" height="116.84" fill-opacity="0.75"/><rect x="293.70" y="325.76" width="1.60" height="10.62" fill-opacity="0.698"/><rect x="293.70" y="336.38" width="1.60" height="10.62" fill-opacity="0.577"/><rect x="293.70" y="347.01" width="1.60" height="10.62" fill-opacity="0.438"/><rect x="293.70" y="357.63" width="1.60" height="10.62" fill-opacity="0.278"/><rect x="293.70" y="368.25" width="1.60" height="10.62" fill-opacity="0.098"/><rect x="304.70" y="155.81" width="1.60" height="10.62" fill-opacity="0.098"/><rect x="304.70" y="166.43" width="1.60" height="10.62" fill-opacity="0.278"/><rect x="304.70" y="177.05" width="1.60" height="10.62" fill-opacity="0.438"/><rect x="304.70" y="187.68" width="1.60" height="10.62" fill-opacity="0.577"/><rect x="304.70" y="198.30" width="1.60" height="10.62" fill-opacity="0.698"/><rect x="304.70" y="208.92" width="1.60" height="116.84" fill-opacity="0.75"/><rect x="304.70" y="325.76" width="1.60" height="10.62" fill-opacity="0.698"/><rect x="304.70" y="336.38" width="1.60" height="10.62" fill-opacity="0.577"/><rect x="304.70" y="347.01" width="1.60" height="10.62" fill-opacity="0.438"/><rect x="304.70" y="357.63" width="1.60" height="10.62" fill-opacity="0.278"/><rect x="304.70" y="368.25" width="1.60" height="10.62" fill-opacity="0.098"/><rect x="315.70" y="155.81" width="1.60" height="10.62" fill-opacity="0.098"/><rect x="315.70" y="166.43" width="1.60" height="10.62" fill-opacity="0.278"/><rect x="315.70" y="177.05" width="1.60" height="10.62" fill-opacity="0.438"/><rect x="315.70" y="187.68" width="1.60" height="10.62" fill-opacity="0.577"/><rect x="315.70" y="198.30" width="1.60" height="10.62" fill-opacity="0.698"/><rect x="315.70" y="208.92" width="1.60" height="116.84" fill-opacity="0.75"/><rect x="315.70" y="325.76" width="1.60" height="10.62" fill-opacity="0.698"/><rect x="315.70" y="336.38" width="1.60" height="10.62" fill-opacity="0.577"/><rect x="315.70" y="347.01" width="1.60" height="10.62" fill-opacity="0.438"/><rect x="315.70" y="357.63" width="1.60" height="10.62" fill-opacity="0.278"/><rect x="315.70" y="368.25" width="1.60" height="10.62" fill-opacity="0.098"/><rect x="325.70" y="155.81" width="1.60" height="10.62" fill-opacity="0.098"/><rect x="325.70" y="166.43" width="1.60" height="10.62" fill-opacity="0.278"/><rect x="325.70" y="177.05" width="1.60" height="10.62" fill-opacity="0.438"/><rect x="325.70" y="187.68" width="1.60" height="10.62" fill-opacity="0.577"/><rect x="325.70" y="198.30" width="1.60" height="10.62" fill-opacity="0.698"/><rect x="325.70" y="208.92" width="1.60" height="116.84" fill-opacity="0.75"/><rect x="325.70" y="325.76" width="1.60" height="10.62" fill-opacity="0.698"/><rect x="325.70" y="336.38" width="1.60" height="10.62" fill-opacity="0.577"/><rect x="325.70" y="347.01" width="1.60" height="10.62" fill-opacity="0.438"/><rect x="325.70" y="357.63" width="1.60" height="10.62" fill-opacity="0.278"/><rect x="325.70" y="368.25" width="1.60" height="10.62" fill-opacity="0.098"/><rect x="336.70" y="155.81" width="1.60" height="10.62" fill-opacity="0.098"/><rect x="336.70" y="166.43" width="1.60" height="10.62" fill-opacity="0.278"/><rect x="336.70" y="177.05" width="1.60" height="10.62" fill-opacity="0.438"/><rect x="336.70" y="187.68" width="1.60" height="10.62" fill-opacity="0.577"/><rect x="336.70" y="198.30" width="1.60" height="10.62" fill-opacity="0.698"/><rect x="336.70" y="208.92" width="1.60" height="116.84" fill-opacity="0.75"/><rect x="336.70" y="325.76" width="1.60" height="10.62" fill-opacity="0.698"/><rect x="336.70" y="336.38" width="1.60" height="10.62" fill-opacity="0.577"/><rect x="336.70" y="347.01" width="1.60" height="10.62" fill-opacity="0.438"/><rect x="336.70" y="357.63" width="1.60" height="10.62" fill-opacity="0.278"/><rect x="336.70" y="368.25" width="1.60" height="10.62" fill-opacity="0.098"/><rect x="346.70" y="155.81" width="1.60" height="10.62" fill-opacity="0.098"/><rect x="346.70" y="166.43" width="1.60" height="10.62" fill-opacity="0.278"/><rect x="346.70" y="177.05" width="1.60" height="10.62" fill-opacity="0.438"/><rect x="346.70" y="187.68" width="1.60" height="10.62" fill-opacity="0.577"/><rect x="346.70" y="198.30" width="1.60" height="10.62" fill-opacity="0.698"/><rect x="346.70" y="208.92" width="1.60" height="116.84" fill-opacity="0.75"/><rect x="346.70" y="325.76" width="1.60" height="10.62" fill-opacity="0.698"/><rect x="346.70" y="336.38" width="1.60" height="10.62" fill-opacity="0.577"/><rect x="346.70" y="347.01" width="1.60" height="10.62" fill-opacity="0.438"/><rect x="346.70" y="357.63" width="1.60" height="10.62" fill-opacity="0.278"/><rect x="346.70" y="368.25" width="1.60" height="10.62" fill-opacity="0.098"/><rect x="357.70" y="155.81" width="1.60" height="10.62" fill-opacity="0.098"/><rect x="357.70" y="166.43" width="1.60" height="10.62" fill-opacity="0.278"/><rect x="357.70" y="177.05" width="1.60" height="10.62" fill-opacity="0.438"/><rect x="357.70" y="187.68" width="1.60" height="10.62" fill-opacity="0.577"/><rect x="357.70" y="198.30" width="1.60" height="10.62" fill-opacity="0.698"/><rect x="357.70" y="208.92" width="1.60" height="116.84" fill-opacity="0.75"/><rect x="357.70" y="325.76" width="1.60" height="10.62" fill-opacity="0.698"/><rect x="357.70" y="336.38" width="1.60" height="10.62" fill-opacity="0.577"/><rect x="357.70" y="347.01" width="1.60" height="10.62" fill-opacity="0.438"/><rect x="357.70" y="357.63" width="1.60" height="10.62" fill-opacity="0.278"/><rect x="357.70" y="368.25" width="1.60" height="10.62" fill-opacity="0.098"/><rect x="368.70" y="155.81" width="1.60" height="10.62" fill-opacity="0.098"/><rect x="368.70" y="166.43" width="1.60" height="10.62" fill-opacity="0.278"/><rect x="368.70" y="177.05" width="1.60" height="10.62" fill-opacity="0.438"/><rect x="368.70" y="187.68" width="1.60" height="10.62" fill-opacity="0.577"/><rect x="368.70" y="198.30" width="1.60" height="10.62" fill-opacity="0.698"/><rect x="368.70" y="208.92" width="1.60" height="116.84" fill-opacity="0.75"/><rect x="368.70" y="325.76" width="1.60" height="10.62" fill-opacity="0.698"/><rect x="368.70" y="336.38" width="1.60" height="10.62" fill-opacity="0.577"/><rect x="368.70" y="347.01" width="1.60" height="10.62" fill-opacity="0.438"/><rect x="368.70" y="357.63" width="1.60" height="10.62" fill-opacity="0.278"/><rect x="368.70" y="368.25" width="1.60" height="10.62" fill-opacity="0.098"/><rect x="378.70" y="155.81" width="1.60" height="10.62" fill-opacity="0.098"/><rect x="378.70" y="166.43" width="1.60" height="10.62" fill-opacity="0.278"/><rect x="378.70" y="177.05" width="1.60" height="10.62" fill-opacity="0.438"/><rect x="378.70" y="187.68" width="1.60" height="10.62" fill-opacity="0.577"/><rect x="378.70" y="198.30" width="1.60" height="10.62" fill-opacity="0.698"/><rect x="378.70" y="208.92" width="1.60" height="116.84" fill-opacity="0.75"/><rect x="378.70" y="325.76" width="1.60" height="10.62" fill-opacity="0.698"/><rect x="378.70" y="336.38" width="1.60" height="10.62" fill-opacity="0.577"/><rect x="378.70" y="347.01" width="1.60" height="10.62" fill-opacity="0.438"/><rect x="378.70" y="357.63" width="1.60" height="10.62" fill-opacity="0.278"/><rect x="378.70" y="368.25" width="1.60" height="10.62" fill-opacity="0.098"/><rect x="389.70" y="155.81" width="1.60" height="10.62" fill-opacity="0.098"/><rect x="389.70" y="166.43" width="1.60" height="10.62" fill-opacity="0.278"/><rect x="389.70" y="177.05" width="1.60" height="10.62" fill-opacity="0.438"/><rect x="389.70" y="187.68" width="1.60" height="10.62" fill-opacity="0.577"/><rect x="389.70" y="198.30" width="1.60" height="10.62" fill-opacity="0.698"/><rect x="389.70" y="208.92" width="1.60" height="116.84" fill-opacity="0.75"/><rect x="389.70" y="325.76" width="1.60" height="10.62" fill-opacity="0.698"/><rect x="389.70" y="336.38" width="1.60" height="10.62" fill-opacity="0.577"/><rect x="389.70" y="347.01" width="1.60" height="10.62" fill-opacity="0.438"/><rect x="389.70" y="357.63" width="1.60" height="10.62" fill-opacity="0.278"/><rect x="389.70" y="368.25" width="1.60" height="10.62" fill-opacity="0.098"/><rect x="399.70" y="155.81" width="1.60" height="10.62" fill-opacity="0.098"/><rect x="399.70" y="166.43" width="1.60" height="10.62" fill-opacity="0.278"/><rect x="399.70" y="177.05" width="1.60" height="10.62" fill-opacity="0.438"/><rect x="399.70" y="187.68" width="1.60" height="10.62" fill-opacity="0.577"/><rect x="399.70" y="198.30" width="1.60" height="10.62" fill-opacity="0.698"/><rect x="399.70" y="208.92" width="1.60" height="116.84" fill-opacity="0.75"/><rect x="399.70" y="325.76" width="1.60" height="10.62" fill-opacity="0.698"/><rect x="399.70" y="336.38" width="1.60" height="10.62" fill-opacity="0.577"/><rect x="399.70" y="347.01" width="1.60" height="10.62" fill-opacity="0.438"/><rect x="399.70" y="357.63" width="1.60" height="10.62" fill-opacity="0.278"/><rect x="399.70" y="368.25" width="1.60" height="10.62" fill-opacity="0.098"/><rect x="410.70" y="155.81" width="1.60" height="10.62" fill-opacity="0.098"/><rect x="410.70" y="166.43" width="1.60" height="10.62" fill-opacity="0.278"/><rect x="410.70" y="177.05" width="1.60" height="10.62" fill-opacity="0.438"/><rect x="410.70" y="187.68" width="1.60" height="10.62" fill-opacity="0.577"/><rect x="410.70" y="198.30" width="1.60" height="10.62" fill-opacity="0.698"/><rect x="410.70" y="208.92" width="1.60" height="116.84" fill-opacity="0.75"/><rect x="410.70" y="325.76" width="1.60" height="10.62" fill-opacity="0.698"/><rect x="410.70" y="336.38" width="1.60" height="10.62" fill-opacity="0.577"/><rect x="410.70" y="347.01" width="1.60" height="10.62" fill-opacity="0.438"/><rect x="410.70" y="357.63" width="1.60" height="10.62" fill-opacity="0.278"/><rect x="410.70" y="368.25" width="1.60" height="10.62" fill-opacity="0.098"/><rect x="421.70" y="155.81" width="1.60" height="10.62" fill-opacity="0.098"/><rect x="421.70" y="166.43" width="1.60" height="10.62" fill-opacity="0.278"/><rect x="421.70" y="177.05" width="1.60" height="10.62" fill-opacity="0.438"/><rect x="421.70" y="187.68" width="1.60" height="10.62" fill-opacity="0.577"/><rect x="421.70" y="198.30" width="1.60" height="10.62" fill-opacity="0.698"/><rect x="421.70" y="208.92" width="1.60" height="116.84" fill-opacity="0.75"/><rect x="421.70" y="325.76" width="1.60" height="10.62" fill-opacity="0.698"/><rect x="421.70" y="336.38" width="1.60" height="10.62" fill-opacity="0.577"/><rect x="421.70" y="347.01" width="1.60" height="10.62" fill-opacity="0.438"/><rect x="421.70" y="357.63" width="1.60" height="10.62" fill-opacity="0.278"/><rect x="421.70" y="368.25" width="1.60" height="10.62" fill-opacity="0.098"/><rect x="431.70" y="155.81" width="1.60" height="10.62" fill-opacity="0.098"/><rect x="431.70" y="166.43" width="1.60" height="10.62" fill-opacity="0.278"/><rect x="431.70" y="177.05" width="1.60" height="10.62" fill-opacity="0.438"/><rect x="431.70" y="187.68" width="1.60" height="10.62" fill-opacity="0.577"/><rect x="431.70" y="198.30" width="1.60" height="10.62" fill-opacity="0.698"/><rect x="431.70" y="208.92" width="1.60" height="116.84" fill-opacity="0.75"/><rect x="431.70" y="325.76" width="1.60" height="10.62" fill-opacity="0.698"/><rect x="431.70" y="336.38" width="1.60" height="10.62" fill-opacity="0.577"/><rect x="431.70" y="347.01" width="1.60" height="10.62" fill-opacity="0.438"/><rect x="431.70" y="357.63" width="1.60" height="10.62" fill-opacity="0.278"/><rect x="431.70" y="368.25" width="1.60" height="10.62" fill-opacity="0.098"/><rect x="442.70" y="155.81" width="1.60" height="10.62" fill-opacity="0.098"/><rect x="442.70" y="166.43" width="1.60" height="10.62" fill-opacity="0.278"/><rect x="442.70" y="177.05" width="1.60" height="10.62" fill-opacity="0.438"/><rect x="442.70" y="187.68" width="1.60" height="10.62" fill-opacity="0.577"/><rect x="442.70" y="198.30" width="1.60" height="10.62" fill-opacity="0.698"/><rect x="442.70" y="208.92" width="1.60" height="116.84" fill-opacity="0.75"/><rect x="442.70" y="325.76" width="1.60" height="10.62" fill-opacity="0.698"/><rect x="442.70" y="336.38" width="1.60" height="10.62" fill-opacity="0.577"/><rect x="442.70" y="347.01" width="1.60" height="10.62" fill-opacity="0.438"/><rect x="442.70" y="357.63" width="1.60" height="10.62" fill-opacity="0.278"/><rect x="442.70" y="368.25" width="1.60" height="10.62" fill-opacity="0.098"/><rect x="452.70" y="155.81" width="1.60" height="10.62" fill-opacity="0.098"/><rect x="452.70" y="166.43" width="1.60" height="10.62" fill-opacity="0.278"/><rect x="452.70" y="177.05" width="1.60" height="10.62" fill-opacity="0.438"/><rect x="452.70" y="187.68" width="1.60" height="10.62" fill-opacity="0.577"/><rect x="452.70" y="198.30" width="1.60" height="10.62" fill-opacity="0.698"/><rect x="452.70" y="208.92" width="1.60" height="116.84" fill-opacity="0.75"/><rect x="452.70" y="325.76" width="1.60" height="10.62" fill-opacity="0.698"/><rect x="452.70" y="336.38" width="1.60" height="10.62" fill-opacity="0.577"/><rect x="452.70" y="347.01" width="1.60" height="10.62" fill-opacity="0.438"/><rect x="452.70" y="357.63" width="1.60" height="10.62" fill-opacity="0.278"/><rect x="452.70" y="368.25" width="1.60" height="10.62" fill-opacity="0.098"/><rect x="463.70" y="155.81" width="1.60" height="10.62" fill-opacity="0.098"/><rect x="463.70" y="166.43" width="1.60" height="10.62" fill-opacity="0.278"/><rect x="463.70" y="177.05" width="1.60" height="10.62" fill-opacity="0.438"/><rect x="463.70" y="187.68" width="1.60" height="10.62" fill-opacity="0.577"/><rect x="463.70" y="198.30" width="1.60" height="10.62" fill-opacity="0.698"/><rect x="463.70" y="208.92" width="1.60" height="116.84" fill-opacity="0.75"/><rect x="463.70" y="325.76" width="1.60" height="10.62" fill-opacity="0.698"/><rect x="463.70" y="336.38" width="1.60" height="10.62" fill-opacity="0.577"/><rect x="463.70" y="347.01" width="1.60" height="10.62" fill-opacity="0.438"/><rect x="463.70" y="357.63" width="1.60" height="10.62" fill-opacity="0.278"/><rect x="463.70" y="368.25" width="1.60" height="10.62" fill-opacity="0.098"/><rect x="474.70" y="155.81" width="1.60" height="10.62" fill-opacity="0.098"/><rect x="474.70" y="166.43" width="1.60" height="10.62" fill-opacity="0.278"/><rect x="474.70" y="177.05" width="1.60" height="10.62" fill-opacity="0.438"/><rect x="474.70" y="187.68" width="1.60" height="10.62" fill-opacity="0.577"/><rect x="474.70" y="198.30" width="1.60" height="10.62" fill-opacity="0.698"/><rect x="474.70" y="208.92" width="1.60" height="116.84" fill-opacity="0.75"/><rect x="474.70" y="325.76" width="1.60" height="10.62" fill-opacity="0.698"/><rect x="474.70" y="336.38" width="1.60" height="10.62" fill-opacity="0.577"/><rect x="474.70" y="347.01" width="1.60" height="10.62" fill-opacity="0.438"/><rect x="474.70" y="357.63" width="1.60" height="10.62" fill-opacity="0.278"/><rect x="474.70" y="368.25" width="1.60" height="10.62" fill-opacity="0.098"/><rect x="484.70" y="155.81" width="1.60" height="10.62" fill-opacity="0.098"/><rect x="484.70" y="166.43" width="1.60" height="10.62" fill-opacity="0.278"/><rect x="484.70" y="177.05" width="1.60" height="10.62" fill-opacity="0.438"/><rect x="484.70" y="187.68" width="1.60" height="10.62" fill-opacity="0.577"/><rect x="484.70" y="198.30" width="1.60" height="10.62" fill-opacity="0.698"/><rect x="484.70" y="208.92" width="1.60" height="116.84" fill-opacity="0.75"/><rect x="484.70" y="325.76" width="1.60" height="10.62" fill-opacity="0.698"/><rect x="484.70" y="336.38" width="1.60" height="10.62" fill-opacity="0.577"/><rect x="484.70" y="347.01" width="1.60" height="10.62" fill-opacity="0.438"/><rect x="484.70" y="357.63" width="1.60" height="10.62" fill-opacity="0.278"/><rect x="484.70" y="368.25" width="1.60" height="10.62" fill-opacity="0.098"/><rect x="495.70" y="155.81" width="1.60" height="10.62" fill-opacity="0.098"/><rect x="495.70" y="166.43" width="1.60" height="10.62" fill-opacity="0.278"/><rect x="495.70" y="177.05" width="1.60" height="10.62" fill-opacity="0.438"/><rect x="495.70" y="187.68" width="1.60" height="10.62" fill-opacity="0.577"/><rect x="495.70" y="198.30" width="1.60" height="10.62" fill-opacity="0.698"/><rect x="495.70" y="208.92" width="1.60" height="116.84" fill-opacity="0.75"/><rect x="495.70" y="325.76" width="1.60" height="10.62" fill-opacity="0.698"/><rect x="495.70" y="336.38" width="1.60" height="10.62" fill-opacity="0.577"/><rect x="495.70" y="347.01" width="1.60" height="10.62" fill-opacity="0.438"/><rect x="495.70" y="357.63" width="1.60" height="10.62" fill-opacity="0.278"/><rect x="495.70" y="368.25" width="1.60" height="10.62" fill-opacity="0.098"/><rect x="505.70" y="155.81" width="1.60" height="10.62" fill-opacity="0.098"/><rect x="505.70" y="166.43" width="1.60" height="10.62" fill-opacity="0.278"/><rect x="505.70" y="177.05" width="1.60" height="10.62" fill-opacity="0.438"/><rect x="505.70" y="187.68" width="1.60" height="10.62" fill-opacity="0.577"/><rect x="505.70" y="198.30" width="1.60" height="10.62" fill-opacity="0.698"/><rect x="505.70" y="208.92" width="1.60" height="116.84" fill-opacity="0.75"/><rect x="505.70" y="325.76" width="1.60" height="10.62" fill-opacity="0.698"/><rect x="505.70" y="336.38" width="1.60" height="10.62" fill-opacity="0.577"/><rect x="505.70" y="347.01" width="1.60" height="10.62" fill-opacity="0.438"/><rect x="505.70" y="357.63" width="1.60" height="10.62" fill-opacity="0.278"/><rect x="505.70" y="368.25" width="1.60" height="10.62" fill-opacity="0.098"/><rect x="516.70" y="155.81" width="1.60" height="10.62" fill-opacity="0.098"/><rect x="516.70" y="166.43" width="1.60" height="10.62" fill-opacity="0.278"/><rect x="516.70" y="177.05" width="1.60" height="10.62" fill-opacity="0.438"/><rect x="516.70" y="187.68" width="1.60" height="10.62" fill-opacity="0.577"/><rect x="516.70" y="198.30" width="1.60" height="10.62" fill-opacity="0.698"/><rect x="516.70" y="208.92" width="1.60" height="116.84" fill-opacity="0.75"/><rect x="516.70" y="325.76" width="1.60" height="10.62" fill-opacity="0.698"/><rect x="516.70" y="336.38" width="1.60" height="10.62" fill-opacity="0.577"/><rect x="516.70" y="347.01" width="1.60" height="10.62" fill-opacity="0.438"/><rect x="516.70" y="357.63" width="1.60" height="10.62" fill-opacity="0.278"/><rect x="516.70" y="368.25" width="1.60" height="10.62" fill-opacity="0.098"/><rect x="527.70" y="155.81" width="1.60" height="10.62" fill-opacity="0.098"/><rect x="527.70" y="166.43" width="1.60" height="10.62" fill-opacity="0.278"/><rect x="527.70" y="177.05" width="1.60" height="10.62" fill-opacity="0.438"/><rect x="527.70" y="187.68" width="1.60" height="10.62" fill-opacity="0.577"/><rect x="527.70" y="198.30" width="1.60" height="10.62" fill-opacity="0.698"/><rect x="527.70" y="208.92" width="1.60" height="116.84" fill-opacity="0.75"/><rect x="527.70" y="325.76" width="1.60" height="10.62" fill-opacity="0.698"/><rect x="527.70" y="336.38" width="1.60" height="10.62" fill-opacity="0.577"/><rect x="527.70" y="347.01" width="1.60" height="10.62" fill-opacity="0.438"/><rect x="527.70" y="357.63" width="1.60" height="10.62" fill-opacity="0.278"/><rect x="527.70" y="368.25" width="1.60" height="10.62" fill-opacity="0.098"/><rect x="537.70" y="155.81" width="1.60" height="10.62" fill-opacity="0.098"/><rect x="537.70" y="166.43" width="1.60" height="10.62" fill-opacity="0.278"/><rect x="537.70" y="177.05" width="1.60" height="10.62" fill-opacity="0.438"/><rect x="537.70" y="187.68" width="1.60" height="10.62" fill-opacity="0.577"/><rect x="537.70" y="198.30" width="1.60" height="10.62" fill-opacity="0.698"/><rect x="537.70" y="208.92" width="1.60" height="116.84" fill-opacity="0.75"/><rect x="537.70" y="325.76" width="1.60" height="10.62" fill-opacity="0.698"/><rect x="537.70" y="336.38" width="1.60" height="10.62" fill-opacity="0.577"/><rect x="537.70" y="347.01" width="1.60" height="10.62" fill-opacity="0.438"/><rect x="537.70" y="357.63" width="1.60" height="10.62" fill-opacity="0.278"/><rect x="537.70" y="368.25" width="1.60" height="10.62" fill-opacity="0.098"/><rect x="548.70" y="155.81" width="1.60" height="10.62" fill-opacity="0.098"/><rect x="548.70" y="166.43" width="1.60" height="10.62" fill-opacity="0.278"/><rect x="548.70" y="177.05" width="1.60" height="10.62" fill-opacity="0.438"/><rect x="548.70" y="187.68" width="1.60" height="10.62" fill-opacity="0.577"/><rect x="548.70" y="198.30" width="1.60" height="10.62" fill-opacity="0.698"/><rect x="548.70" y="208.92" width="1.60" height="116.84" fill-opacity="0.75"/><rect x="548.70" y="325.76" width="1.60" height="10.62" fill-opacity="0.698"/><rect x="548.70" y="336.38" width="1.60" height="10.62" fill-opacity="0.577"/><rect x="548.70" y="347.01" width="1.60" height="10.62" fill-opacity="0.438"/><rect x="548.70" y="357.63" width="1.60" height="10.62" fill-opacity="0.278"/><rect x="548.70" y="368.25" width="1.60" height="10.62" fill-opacity="0.098"/><rect x="558.70" y="155.81" width="1.60" height="10.62" fill-opacity="0.098"/><rect x="558.70" y="166.43" width="1.60" height="10.62" fill-opacity="0.278"/><rect x="558.70" y="177.05" width="1.60" height="10.62" fill-opacity="0.438"/><rect x="558.70" y="187.68" width="1.60" height="10.62" fill-opacity="0.577"/><rect x="558.70" y="198.30" width="1.60" height="10.62" fill-opacity="0.698"/><rect x="558.70" y="208.92" width="1.60" height="116.84" fill-opacity="0.75"/><rect x="558.70" y="325.76" width="1.60" height="10.62" fill-opacity="0.698"/><rect x="558.70" y="336.38" width="1.60" height="10.62" fill-opacity="0.577"/><rect x="558.70" y="347.01" width="1.60" height="10.62" fill-opacity="0.438"/><rect x="558.70" y="357.63" width="1.60" height="10.62" fill-opacity="0.278"/><rect x="558.70" y="368.25" width="1.60" height="10.62" fill-opacity="0.098"/><rect x="569.70" y="155.81" width="1.60" height="10.62" fill-opacity="0.098"/><rect x="569.70" y="166.43" width="1.60" height="10.62" fill-opacity="0.278"/><rect x="569.70" y="177.05" width="1.60" height="10.62" fill-opacity="0.438"/><rect x="569.70" y="187.68" width="1.60" height="10.62" fill-opacity="0.577"/><rect x="569.70" y="198.30" width="1.60" height="10.62" fill-opacity="0.698"/><rect x="569.70" y="208.92" width="1.60" height="116.84" fill-opacity="0.75"/><rect x="569.70" y="325.76" width="1.60" height="10.62" fill-opacity="0.698"/><rect x="569.70" y="336.38" width="1.60" height="10.62" fill-opacity="0.577"/><rect x="569.70" y="347.01" width="1.60" height="10.62" fill-opacity="0.438"/><rect x="569.70" y="357.63" width="1.60" height="10.62" fill-opacity="0.278"/><rect x="569.70" y="368.25" width="1.60" height="10.62" fill-opacity="0.098"/><rect x="580.70" y="155.81" width="1.60" height="10.62" fill-opacity="0.098"/><rect x="580.70" y="166.43" width="1.60" height="10.62" fill-opacity="0.278"/><rect x="580.70" y="177.05" width="1.60" height="10.62" fill-opacity="0.438"/><rect x="580.70" y="187.68" width="1.60" height="10.62" fill-opacity="0.577"/><rect x="580.70" y="198.30" width="1.60" height="10.62" fill-opacity="0.698"/><rect x="580.70" y="208.92" width="1.60" height="116.84" fill-opacity="0.75"/><rect x="580.70" y="325.76" width="1.60" height="10.62" fill-opacity="0.698"/><rect x="580.70" y="336.38" width="1.60" height="10.62" fill-opacity="0.577"/><rect x="580.70" y="347.01" width="1.60" height="10.62" fill-opacity="0.438"/><rect x="580.70" y="357.63" width="1.60" height="10.62" fill-opacity="0.278"/><rect x="580.70" y="368.25" width="1.60" height="10.62" fill-opacity="0.098"/><rect x="590.70" y="155.81" width="1.60" height="10.62" fill-opacity="0.098"/><rect x="590.70" y="166.43" width="1.60" height="10.62" fill-opacity="0.278"/><rect x="590.70" y="177.05" width="1.60" height="10.62" fill-opacity="0.438"/><rect x="590.70" y="187.68" width="1.60" height="10.62" fill-opacity="0.577"/><rect x="590.70" y="198.30" width="1.60" height="10.62" fill-opacity="0.698"/><rect x="590.70" y="208.92" width="1.60" height="116.84" fill-opacity="0.75"/><rect x="590.70" y="325.76" width="1.60" height="10.62" fill-opacity="0.698"/><rect x="590.70" y="336.38" width="1.60" height="10.62" fill-opacity="0.577"/><rect x="590.70" y="347.01" width="1.60" height="10.62" fill-opacity="0.438"/><rect x="590.70" y="357.63" width="1.60" height="10.62" fill-opacity="0.278"/><rect x="590.70" y="368.25" width="1.60" height="10.62" fill-opacity="0.098"/><rect x="601.70" y="155.81" width="1.60" height="10.62" fill-opacity="0.098"/><rect x="601.70" y="166.43" width="1.60" height="10.62" fill-opacity="0.278"/><rect x="601.70" y="177.05" width="1.60" height="10.62" fill-opacity="0.438"/><rect x="601.70" y="187.68" width="1.60" height="10.62" fill-opacity="0.577"/><rect x="601.70" y="198.30" width="1.60" height="10.62" fill-opacity="0.698"/><rect x="601.70" y="208.92" width="1.60" height="116.84" fill-opacity="0.75"/><rect x="601.70" y="325.76" width="1.60" height="10.62" fill-opacity="0.698"/><rect x="601.70" y="336.38" width="1.60" height="10.62" fill-opacity="0.577"/><rect x="601.70" y="347.01" width="1.60" height="10.62" fill-opacity="0.438"/><rect x="601.70" y="357.63" width="1.60" height="10.62" fill-opacity="0.278"/><rect x="601.70" y="368.25" width="1.60" height="10.62" fill-opacity="0.098"/><rect x="611.70" y="155.81" width="1.60" height="10.62" fill-opacity="0.098"/><rect x="611.70" y="166.43" width="1.60" height="10.62" fill-opacity="0.278"/><rect x="611.70" y="177.05" width="1.60" height="10.62" fill-opacity="0.438"/><rect x="611.70" y="187.68" width="1.60" height="10.62" fill-opacity="0.577"/><rect x="611.70" y="198.30" width="1.60" height="10.62" fill-opacity="0.698"/><rect x="611.70" y="208.92" width="1.60" height="116.84" fill-opacity="0.75"/><rect x="611.70" y="325.76" width="1.60" height="10.62" fill-opacity="0.698"/><rect x="611.70" y="336.38" width="1.60" height="10.62" fill-opacity="0.577"/><rect x="611.70" y="347.01" width="1.60" height="10.62" fill-opacity="0.438"/><rect x="611.70" y="357.63" width="1.60" height="10.62" fill-opacity="0.278"/><rect x="611.70" y="368.25" width="1.60" height="10.62" fill-opacity="0.098"/><rect x="622.70" y="155.81" width="1.60" height="10.62" fill-opacity="0.098"/><rect x="622.70" y="166.43" width="1.60" height="10.62" fill-opacity="0.278"/><rect x="622.70" y="177.05" width="1.60" height="10.62" fill-opacity="0.438"/><rect x="622.70" y="187.68" width="1.60" height="10.62" fill-opacity="0.577"/><rect x="622.70" y="198.30" width="1.60" height="10.62" fill-opacity="0.698"/><rect x="622.70" y="208.92" width="1.60" height="116.84" fill-opacity="0.75"/><rect x="622.70" y="325.76" width="1.60" height="10.62" fill-opacity="0.698"/><rect x="622.70" y="336.38" width="1.60" height="10.62" fill-opacity="0.577"/><rect x="622.70" y="347.01" width="1.60" height="10.62" fill-opacity="0.438"/><rect x="622.70" y="357.63" width="1.60" height="10.62" fill-opacity="0.278"/><rect x="622.70" y="368.25" width="1.60" height="10.62" fill-opacity="0.098"/><rect x="633.70" y="155.81" width="1.60" height="10.62" fill-opacity="0.098"/><rect x="633.70" y="166.43" width="1.60" height="10.62" fill-opacity="0.278"/><rect x="633.70" y="177.05" width="1.60" height="10.62" fill-opacity="0.438"/><rect x="633.70" y="187.68" width="1.60" height="10.62" fill-opacity="0.577"/><rect x="633.70" y="198.30" width="1.60" height="10.62" fill-opacity="0.698"/><rect x="633.70" y="208.92" width="1.60" height="116.84" fill-opacity="0.75"/><rect x="633.70" y="325.76" width="1.60" height="10.62" fill-opacity="0.698"/><rect x="633.70" y="336.38" width="1.60" height="10.62" fill-opacity="0.577"/><rect x="633.70" y="347.01" width="1.60" height="10.62" fill-opacity="0.438"/><rect x="633.70" y="357.63" width="1.60" height="10.62" fill-opacity="0.278"/><rect x="633.70" y="368.25" width="1.60" height="10.62" fill-opacity="0.098"/><rect x="643.70" y="155.81" width="1.60" height="10.62" fill-opacity="0.098"/><rect x="643.70" y="166.43" width="1.60" height="10.62" fill-opacity="0.278"/><rect x="643.70" y="177.05" width="1.60" height="10.62" fill-opacity="0.438"/><rect x="643.70" y="187.68" width="1.60" height="10.62" fill-opacity="0.577"/><rect x="643.70" y="198.30" width="1.60" height="10.62" fill-opacity="0.698"/><rect x="643.70" y="208.92" width="1.60" height="116.84" fill-opacity="0.75"/><rect x="643.70" y="325.76" width="1.60" height="10.62" fill-opacity="0.698"/><rect x="643.70" y="336.38" width="1.60" height="10.62" fill-opacity="0.577"/><rect x="643.70" y="347.01" width="1.60" height="10.62" fill-opacity="0.438"/><rect x="643.70" y="357.63" width="1.60" height="10.62" fill-opacity="0.278"/><rect x="643.70" y="368.25" width="1.60" height="10.62" fill-opacity="0.098"/><rect x="654.70" y="155.81" width="1.60" height="10.62" fill-opacity="0.098"/><rect x="654.70" y="166.43" width="1.60" height="10.62" fill-opacity="0.278"/><rect x="654.70" y="177.05" width="1.60" height="10.62" fill-opacity="0.438"/><rect x="654.70" y="187.68" width="1.60" height="10.62" fill-opacity="0.577"/><rect x="654.70" y="198.30" width="1.60" height="10.62" fill-opacity="0.698"/><rect x="654.70" y="208.92" width="1.60" height="116.84" fill-opacity="0.75"/><rect x="654.70" y="325.76" width="1.60" height="10.62" fill-opacity="0.698"/><rect x="654.70" y="336.38" width="1.60" height="10.62" fill-opacity="0.577"/><rect x="654.70" y="347.01" width="1.60" height="10.62" fill-opacity="0.438"/><rect x="654.70" y="357.63" width="1.60" height="10.62" fill-opacity="0.278"/><rect x="654.70" y="368.25" width="1.60" height="10.62" fill-opacity="0.098"/><rect x="665.70" y="155.81" width="1.60" height="10.62" fill-opacity="0.098"/><rect x="665.70" y="166.43" width="1.60" height="10.62" fill-opacity="0.278"/><rect x="665.70" y="177.05" width="1.60" height="10.62" fill-opacity="0.438"/><rect x="665.70" y="187.68" width="1.60" height="10.62" fill-opacity="0.577"/><rect x="665.70" y="198.30" width="1.60" height="10.62" fill-opacity="0.698"/><rect x="665.70" y="208.92" width="1.60" height="116.84" fill-opacity="0.75"/><rect x="665.70" y="325.76" width="1.60" height="10.62" fill-opacity="0.698"/><rect x="665.70" y="336.38" width="1.60" height="10.62" fill-opacity="0.577"/><rect x="665.70" y="347.01" width="1.60" height="10.62" fill-opacity="0.438"/><rect x="665.70" y="357.63" width="1.60" height="10.62" fill-opacity="0.278"/><rect x="665.70" y="368.25" width="1.60" height="10.62" fill-opacity="0.098"/><rect x="675.70" y="155.81" width="1.60" height="10.62" fill-opacity="0.098"/><rect x="675.70" y="166.43" width="1.60" height="10.62" fill-opacity="0.278"/><rect x="675.70" y="177.05" width="1.60" height="10.62" fill-opacity="0.438"/><rect x="675.70" y="187.68" width="1.60" height="10.62" fill-opacity="0.577"/><rect x="675.70" y="198.30" width="1.60" height="10.62" fill-opacity="0.698"/><rect x="675.70" y="208.92" width="1.60" height="116.84" fill-opacity="0.75"/><rect x="675.70" y="325.76" width="1.60" height="10.62" fill-opacity="0.698"/><rect x="675.70" y="336.38" width="1.60" height="10.62" fill-opacity="0.577"/><rect x="675.70" y="347.01" width="1.60" height="10.62" fill-opacity="0.438"/><rect x="675.70" y="357.63" width="1.60" height="10.62" fill-opacity="0.278"/><rect x="675.70" y="368.25" width="1.60" height="10.62" fill-opacity="0.098"/><rect x="686.70" y="155.81" width="1.60" height="10.62" fill-opacity="0.098"/><rect x="686.70" y="166.43" width="1.60" height="10.62" fill-opacity="0.278"/><rect x="686.70" y="177.05" width="1.60" height="10.62" fill-opacity="0.438"/><rect x="686.70" y="187.68" width="1.60" height="10.62" fill-opacity="0.577"/><rect x="686.70" y="198.30" width="1.60" height="10.62" fill-opacity="0.698"/><rect x="686.70" y="208.92" width="1.60" height="116.84" fill-opacity="0.75"/><rect x="686.70" y="325.76" width="1.60" height="10.62" fill-opacity="0.698"/><rect x="686.70" y="336.38" width="1.60" height="10.62" fill-opacity="0.577"/><rect x="686.70" y="347.01" width="1.60" height="10.62" fill-opacity="0.438"/><rect x="686.70" y="357.63" width="1.60" height="10.62" fill-opacity="0.278"/><rect x="686.70" y="368.25" width="1.60" height="10.62" fill-opacity="0.098"/><rect x="696.70" y="155.81" width="1.60" height="10.62" fill-opacity="0.098"/><rect x="696.70" y="166.43" width="1.60" height="10.62" fill-opacity="0.278"/><rect x="696.70" y="177.05" width="1.60" height="10.62" fill-opacity="0.438"/><rect x="696.70" y="187.68" width="1.60" height="10.62" fill-opacity="0.577"/><rect x="696.70" y="198.30" width="1.60" height="10.62" fill-opacity="0.698"/><rect x="696.70" y="208.92" width="1.60" height="116.84" fill-opacity="0.75"/><rect x="696.70" y="325.76" width="1.60" height="10.62" fill-opacity="0.698"/><rect x="696.70" y="336.38" width="1.60" height="10.62" fill-opacity="0.577"/><rect x="696.70" y="347.01" width="1.60" height="10.62" fill-opacity="0.438"/><rect x="696.70" y="357.63" width="1.60" height="10.62" fill-opacity="0.278"/><rect x="696.70" y="368.25" width="1.60" height="10.62" fill-opacity="0.098"/><rect x="707.70" y="155.81" width="1.60" height="10.62" fill-opacity="0.098"/><rect x="707.70" y="166.43" width="1.60" height="10.62" fill-opacity="0.278"/><rect x="707.70" y="177.05" width="1.60" height="10.62" fill-opacity="0.438"/><rect x="707.70" y="187.68" width="1.60" height="10.62" fill-opacity="0.577"/><rect x="707.70" y="198.30" width="1.60" height="10.62" fill-opacity="0.698"/><rect x="707.70" y="208.92" width="1.60" height="116.84" fill-opacity="0.75"/><rect x="707.70" y="325.76" width="1.60" height="10.62" fill-opacity="0.698"/><rect x="707.70" y="336.38" width="1.60" height="10.62" fill-opacity="0.577"/><rect x="707.70" y="347.01" width="1.60" height="10.62" fill-opacity="0.438"/><rect x="707.70" y="357.63" width="1.60" height="10.62" fill-opacity="0.278"/><rect x="707.70" y="368.25" width="1.60" height="10.62" fill-opacity="0.098"/><rect x="718.70" y="155.81" width="1.60" height="10.62" fill-opacity="0.098"/><rect x="718.70" y="166.43" width="1.60" height="10.62" fill-opacity="0.278"/><rect x="718.70" y="177.05" width="1.60" height="10.62" fill-opacity="0.438"/><rect x="718.70" y="187.68" width="1.60" height="10.62" fill-opacity="0.577"/><rect x="718.70" y="198.30" width="1.60" height="10.62" fill-opacity="0.698"/><rect x="718.70" y="208.92" width="1.60" height="116.84" fill-opacity="0.75"/><rect x="718.70" y="325.76" width="1.60" height="10.62" fill-opacity="0.698"/><rect x="718.70" y="336.38" width="1.60" height="10.62" fill-opacity="0.577"/><rect x="718.70" y="347.01" width="1.60" height="10.62" fill-opacity="0.438"/><rect x="718.70" y="357.63" width="1.60" height="10.62" fill-opacity="0.278"/><rect x="718.70" y="368.25" width="1.60" height="10.62" fill-opacity="0.098"/><rect x="728.70" y="155.81" width="1.60" height="10.62" fill-opacity="0.098"/><rect x="728.70" y="166.43" width="1.60" height="10.62" fill-opacity="0.278"/><rect x="728.70" y="177.05" width="1.60" height="10.62" fill-opacity="0.438"/><rect x="728.70" y="187.68" width="1.60" height="10.62" fill-opacity="0.577"/><rect x="728.70" y="198.30" width="1.60" height="10.62" fill-opacity="0.698"/><rect x="728.70" y="208.92" width="1.60" height="116.84" fill-opacity="0.75"/><rect x="728.70" y="325.76" width="1.60" height="10.62" fill-opacity="0.698"/><rect x="728.70" y="336.38" width="1.60" height="10.62" fill-opacity="0.577"/><rect x="728.70" y="347.01" width="1.60" height="10.62" fill-opacity="0.438"/><rect x="728.70" y="357.63" width="1.60" height="10.62" fill-opacity="0.278"/><rect x="728.70" y="368.25" width="1.60" height="10.62" fill-opacity="0.098"/><rect x="739.70" y="155.81" width="1.60" height="10.62" fill-opacity="0.098"/><rect x="739.70" y="166.43" width="1.60" height="10.62" fill-opacity="0.278"/><rect x="739.70" y="177.05" width="1.60" height="10.62" fill-opacity="0.438"/><rect x="739.70" y="187.68" width="1.60" height="10.62" fill-opacity="0.577"/><rect x="739.70" y="198.30" width="1.60" height="10.62" fill-opacity="0.698"/><rect x="739.70" y="208.92" width="1.60" height="116.84" fill-opacity="0.75"/><rect x="739.70" y="325.76" width="1.60" height="10.62" fill-opacity="0.698"/><rect x="739.70" y="336.38" width="1.60" height="10.62" fill-opacity="0.577"/><rect x="739.70" y="347.01" width="1.60" height="10.62" fill-opacity="0.438"/><rect x="739.70" y="357.63" width="1.60" height="10.62" fill-opacity="0.278"/><rect x="739.70" y="368.25" width="1.60" height="10.62" fill-opacity="0.098"/><rect x="749.70" y="155.81" width="1.60" height="10.62" fill-opacity="0.098"/><rect x="749.70" y="166.43" width="1.60" height="10.62" fill-opacity="0.278"/><rect x="749.70" y="177.05" width="1.60" height="10.62" fill-opacity="0.438"/><rect x="749.70" y="187.68" width="1.60" height="10.62" fill-opacity="0.577"/><rect x="749.70" y="198.30" width="1.60" height="10.62" fill-opacity="0.698"/><rect x="749.70" y="208.92" width="1.60" height="116.84" fill-opacity="0.75"/><rect x="749.70" y="325.76" width="1.60" height="10.62" fill-opacity="0.698"/><rect x="749.70" y="336.38" width="1.60" height="10.62" fill-opacity="0.577"/><rect x="749.70" y="347.01" width="1.60" height="10.62" fill-opacity="0.438"/><rect x="749.70" y="357.63" width="1.60" height="10.62" fill-opacity="0.278"/><rect x="749.70" y="368.25" width="1.60" height="10.62" fill-opacity="0.098"/><rect x="760.70" y="155.81" width="1.60" height="10.62" fill-opacity="0.098"/><rect x="760.70" y="166.43" width="1.60" height="10.62" fill-opacity="0.278"/><rect x="760.70" y="177.05" width="1.60" height="10.62" fill-opacity="0.438"/><rect x="760.70" y="187.68" width="1.60" height="10.62" fill-opacity="0.577"/><rect x="760.70" y="198.30" width="1.60" height="10.62" fill-opacity="0.698"/><rect x="760.70" y="208.92" width="1.60" height="116.84" fill-opacity="0.75"/><rect x="760.70" y="325.76" width="1.60" height="10.62" fill-opacity="0.698"/><rect x="760.70" y="336.38" width="1.60" height="10.62" fill-opacity="0.577"/><rect x="760.70" y="347.01" width="1.60" height="10.62" fill-opacity="0.438"/><rect x="760.70" y="357.63" width="1.60" height="10.62" fill-opacity="0.278"/><rect x="760.70" y="368.25" width="1.60" height="10.62" fill-opacity="0.098"/><rect x="771.70" y="155.81" width="1.60" height="10.62" fill-opacity="0.098"/><rect x="771.70" y="166.43" width="1.60" height="10.62" fill-opacity="0.278"/><rect x="771.70" y="177.05" width="1.60" height="10.62" fill-opacity="0.438"/><rect x="771.70" y="187.68" width="1.60" height="10.62" fill-opacity="0.577"/><rect x="771.70" y="198.30" width="1.60" height="10.62" fill-opacity="0.698"/><rect x="771.70" y="208.92" width="1.60" height="116.84" fill-opacity="0.75"/><rect x="771.70" y="325.76" width="1.60" height="10.62" fill-opacity="0.698"/><rect x="771.70" y="336.38" width="1.60" height="10.62" fill-opacity="0.577"/><rect x="771.70" y="347.01" width="1.60" height="10.62" fill-opacity="0.438"/><rect x="771.70" y="357.63" width="1.60" height="10.62" fill-opacity="0.278"/><rect x="771.70" y="368.25" width="1.60" height="10.62" fill-opacity="0.098"/><rect x="781.70" y="155.81" width="1.60" height="10.62" fill-opacity="0.098"/><rect x="781.70" y="166.43" width="1.60" height="10.62" fill-opacity="0.278"/><rect x="781.70" y="177.05" width="1.60" height="10.62" fill-opacity="0.438"/><rect x="781.70" y="187.68" width="1.60" height="10.62" fill-opacity="0.577"/><rect x="781.70" y="198.30" width="1.60" height="10.62" fill-opacity="0.698"/><rect x="781.70" y="208.92" width="1.60" height="116.84" fill-opacity="0.75"/><rect x="781.70" y="325.76" width="1.60" height="10.62" fill-opacity="0.698"/><rect x="781.70" y="336.38" width="1.60" height="10.62" fill-opacity="0.577"/><rect x="781.70" y="347.01" width="1.60" height="10.62" fill-opacity="0.438"/><rect x="781.70" y="357.63" width="1.60" height="10.62" fill-opacity="0.278"/><rect x="781.70" y="368.25" width="1.60" height="10.62" fill-opacity="0.098"/><rect x="792.70" y="155.81" width="1.60" height="10.62" fill-opacity="0.098"/><rect x="792.70" y="166.43" width="1.60" height="10.62" fill-opacity="0.278"/><rect x="792.70" y="177.05" width="1.60" height="10.62" fill-opacity="0.438"/><rect x="792.70" y="187.68" width="1.60" height="10.62" fill-opacity="0.577"/><rect x="792.70" y="198.30" width="1.60" height="10.62" fill-opacity="0.698"/><rect x="792.70" y="208.92" width="1.60" height="116.84" fill-opacity="0.75"/><rect x="792.70" y="325.76" width="1.60" height="10.62" fill-opacity="0.698"/><rect x="792.70" y="336.38" width="1.60" height="10.62" fill-opacity="0.577"/><rect x="792.70" y="347.01" width="1.60" height="10.62" fill-opacity="0.438"/><rect x="792.70" y="357.63" width="1.60" height="10.62" fill-opacity="0.278"/><rect x="792.70" y="368.25" width="1.60" height="10.62" fill-opacity="0.098"/><rect x="802.70" y="155.81" width="1.60" height="10.62" fill-opacity="0.098"/><rect x="802.70" y="166.43" width="1.60" height="10.62" fill-opacity="0.278"/><rect x="802.70" y="177.05" width="1.60" height="10.62" fill-opacity="0.438"/><rect x="802.70" y="187.68" width="1.60" height="10.62" fill-opacity="0.577"/><rect x="802.70" y="198.30" width="1.60" height="10.62" fill-opacity="0.698"/><rect x="802.70" y="208.92" width="1.60" height="116.84" fill-opacity="0.75"/><rect x="802.70" y="325.76" width="1.60" height="10.62" fill-opacity="0.698"/><rect x="802.70" y="336.38" width="1.60" height="10.62" fill-opacity="0.577"/><rect x="802.70" y="347.01" width="1.60" height="10.62" fill-opacity="0.438"/><rect x="802.70" y="357.63" width="1.60" height="10.62" fill-opacity="0.278"/><rect x="802.70" y="368.25" width="1.60" height="10.62" fill-opacity="0.098"/><rect x="813.70" y="155.81" width="1.60" height="10.62" fill-opacity="0.098"/><rect x="813.70" y="166.43" width="1.60" height="10.62" fill-opacity="0.278"/><rect x="813.70" y="177.05" width="1.60" height="10.62" fill-opacity="0.438"/><rect x="813.70" y="187.68" width="1.60" height="10.62" fill-opacity="0.577"/><rect x="813.70" y="198.30" width="1.60" height="10.62" fill-opacity="0.698"/><rect x="813.70" y="208.92" width="1.60" height="116.84" fill-opacity="0.75"/><rect x="813.70" y="325.76" width="1.60" height="10.62" fill-opacity="0.698"/><rect x="813.70" y="336.38" width="1.60" height="10.62" fill-opacity="0.577"/><rect x="813.70" y="347.01" width="1.60" height="10.62" fill-opacity="0.438"/><rect x="813.70" y="357.63" width="1.60" height="10.62" fill-opacity="0.278"/><rect x="813.70" y="368.25" width="1.60" height="10.62" fill-opacity="0.098"/><rect x="824.70" y="155.81" width="1.60" height="10.62" fill-opacity="0.098"/><rect x="824.70" y="166.43" width="1.60" height="10.62" fill-opacity="0.278"/><rect x="824.70" y="177.05" width="1.60" height="10.62" fill-opacity="0.438"/><rect x="824.70" y="187.68" width="1.60" height="10.62" fill-opacity="0.577"/><rect x="824.70" y="198.30" width="1.60" height="10.62" fill-opacity="0.698"/><rect x="824.70" y="208.92" width="1.60" height="116.84" fill-opacity="0.75"/><rect x="824.70" y="325.76" width="1.60" height="10.62" fill-opacity="0.698"/><rect x="824.70" y="336.38" width="1.60" height="10.62" fill-opacity="0.577"/><rect x="824.70" y="347.01" width="1.60" height="10.62" fill-opacity="0.438"/><rect x="824.70" y="357.63" width="1.60" height="10.62" fill-opacity="0.278"/><rect x="824.70" y="368.25" width="1.60" height="10.62" fill-opacity="0.098"/><rect x="834.70" y="155.81" width="1.60" height="10.62" fill-opacity="0.098"/><rect x="834.70" y="166.43" width="1.60" height="10.62" fill-opacity="0.278"/><rect x="834.70" y="177.05" width="1.60" height="10.62" fill-opacity="0.438"/><rect x="834.70" y="187.68" width="1.60" height="10.62" fill-opacity="0.577"/><rect x="834.70" y="198.30" width="1.60" height="10.62" fill-opacity="0.698"/><rect x="834.70" y="208.92" width="1.60" height="116.84" fill-opacity="0.75"/><rect x="834.70" y="325.76" width="1.60" height="10.62" fill-opacity="0.698"/><rect x="834.70" y="336.38" width="1.60" height="10.62" fill-opacity="0.577"/><rect x="834.70" y="347.01" width="1.60" height="10.62" fill-opacity="0.438"/><rect x="834.70" y="357.63" width="1.60" height="10.62" fill-opacity="0.278"/><rect x="834.70" y="368.25" width="1.60" height="10.62" fill-opacity="0.098"/><rect x="845.70" y="155.81" width="1.60" height="10.62" fill-opacity="0.098"/><rect x="845.70" y="166.43" width="1.60" height="10.62" fill-opacity="0.278"/><rect x="845.70" y="177.05" width="1.60" height="10.62" fill-opacity="0.438"/><rect x="845.70" y="187.68" width="1.60" height="10.62" fill-opacity="0.577"/><rect x="845.70" y="198.30" width="1.60" height="10.62" fill-opacity="0.698"/><rect x="845.70" y="208.92" width="1.60" height="116.84" fill-opacity="0.75"/><rect x="845.70" y="325.76" width="1.60" height="10.62" fill-opacity="0.698"/><rect x="845.70" y="336.38" width="1.60" height="10.62" fill-opacity="0.577"/><rect x="845.70" y="347.01" width="1.60" height="10.62" fill-opacity="0.438"/><rect x="845.70" y="357.63" width="1.60" height="10.62" fill-opacity="0.278"/><rect x="845.70" y="368.25" width="1.60" height="10.62" fill-opacity="0.098"/><rect x="855.70" y="155.81" width="1.60" height="10.62" fill-opacity="0.098"/><rect x="855.70" y="166.43" width="1.60" height="10.62" fill-opacity="0.278"/><rect x="855.70" y="177.05" width="1.60" height="10.62" fill-opacity="0.438"/><rect x="855.70" y="187.68" width="1.60" height="10.62" fill-opacity="0.577"/><rect x="855.70" y="198.30" width="1.60" height="10.62" fill-opacity="0.698"/><rect x="855.70" y="208.92" width="1.60" height="116.84" fill-opacity="0.725"/><rect x="855.70" y="325.76" width="1.60" height="10.62" fill-opacity="0.698"/><rect x="855.70" y="336.38" width="1.60" height="10.62" fill-opacity="0.577"/><rect x="855.70" y="347.01" width="1.60" height="10.62" fill-opacity="0.438"/><rect x="855.70" y="357.63" width="1.60" height="10.62" fill-opacity="0.278"/><rect x="855.70" y="368.25" width="1.60" height="10.62" fill-opacity="0.098"/><rect x="866.70" y="155.81" width="1.60" height="10.62" fill-opacity="0.098"/><rect x="866.70" y="166.43" width="1.60" height="10.62" fill-opacity="0.278"/><rect x="866.70" y="177.05" width="1.60" height="10.62" fill-opacity="0.438"/><rect x="866.70" y="187.68" width="1.60" height="10.62" fill-opacity="0.577"/><rect x="866.70" y="198.30" width="1.60" height="138.09" fill-opacity="0.642"/><rect x="866.70" y="336.38" width="1.60" height="10.62" fill-opacity="0.577"/><rect x="866.70" y="347.01" width="1.60" height="10.62" fill-opacity="0.438"/><rect x="866.70" y="357.63" width="1.60" height="10.62" fill-opacity="0.278"/><rect x="866.70" y="368.25" width="1.60" height="10.62" fill-opacity="0.098"/><rect x="877.70" y="155.81" width="1.60" height="10.62" fill-opacity="0.098"/><rect x="877.70" y="166.43" width="1.60" height="10.62" fill-opacity="0.278"/><rect x="877.70" y="177.05" width="1.60" height="10.62" fill-opacity="0.438"/><rect x="877.70" y="187.68" width="1.60" height="159.33" fill-opacity="0.512"/><rect x="877.70" y="347.01" width="1.60" height="10.62" fill-opacity="0.438"/><rect x="877.70" y="357.63" width="1.60" height="10.62" fill-opacity="0.278"/><rect x="877.70" y="368.25" width="1.60" height="10.62" fill-opacity="0.098"/><rect x="887.70" y="155.81" width="1.60" height="10.62" fill-opacity="0.098"/><rect x="887.70" y="166.43" width="1.60" height="10.62" fill-opacity="0.278"/><rect x="887.70" y="177.05" width="1.60" height="180.57" fill-opacity="0.363"/><rect x="887.70" y="357.63" width="1.60" height="10.62" fill-opacity="0.278"/><rect x="887.70" y="368.25" width="1.60" height="10.62" fill-opacity="0.098"/><rect x="898.70" y="155.81" width="1.60" height="10.62" fill-opacity="0.098"/><rect x="898.70" y="166.43" width="1.60" height="201.82" fill-opacity="0.193"/><rect x="898.70" y="368.25" width="1.60" height="10.62" fill-opacity="0.098"/><rect x="908.70" y="155.81" width="1.60" height="223.06" fill-opacity="0.05"/><rect x="29.78" y="154.70" width="880.13" height="1.60" fill-opacity="0.05"/><rect x="29.78" y="165.70" width="10.60" height="1.60" fill-opacity="0.098"/><rect x="40.38" y="165.70" width="858.92" height="1.60" fill-opacity="0.193"/><rect x="899.31" y="165.70" width="10.60" height="1.60" fill-opacity="0.098"/><rect x="29.78" y="176.70" width="10.60" height="1.60" fill-opacity="0.098"/><rect x="40.38" y="176.70" width="10.60" height="1.60" fill-opacity="0.278"/><rect x="50.99" y="176.70" width="837.72" height="1.60" fill-opacity="0.363"/><rect x="888.70" y="176.70" width="10.60" height="1.60" fill-opacity="0.278"/><rect x="899.31" y="176.70" width="10.60" height="1.60" fill-opacity="0.098"/><rect x="29.78" y="186.70" width="10.60" height="1.60" fill-opacity="0.098"/><rect x="40.38" y="186.70" width="10.60" height="1.60" fill-opacity="0.278"/><rect x="50.99" y="186.70" width="10.60" height="1.60" fill-opacity="0.438"/><rect x="61.59" y="186.70" width="816.51" height="1.60" fill-opacity="0.512"/><rect x="878.10" y="186.70" width="10.60" height="1.60" fill-opacity="0.438"/><rect x="888.70" y="186.70" width="10.60" height="1.60" fill-opacity="0.278"/><rect x="899.31" y="186.70" width="10.60" height="1.60" fill-opacity="0.098"/><rect x="29.78" y="197.70" width="10.60" height="1.60" fill-opacity="0.098"/><rect x="40.38" y="197.70" width="10.60" height="1.60" fill-opacity="0.278"/><rect x="50.99" y="197.70" width="10.60" height="1.60" fill-opacity="0.438"/><rect x="61.59" y="197.70" width="10.60" height="1.60" fill-opacity="0.577"/><rect x="72.20" y="197.70" width="795.30" height="1.60" fill-opacity="0.642"/><rect x="867.50" y="197.70" width="10.60" height="1.60" fill-opacity="0.577"/><rect x="878.10" y="197.70" width="10.60" height="1.60" fill-opacity="0.438"/><rect x="888.70" y="197.70" width="10.60" height="1.60" fill-opacity="0.278"/><rect x="899.31" y="197.70" width="10.60" height="1.60" fill-opacity="0.098"/><rect x="29.78" y="207.70" width="10.60" height="1.60" fill-opacity="0.098"/><rect x="40.38" y="207.70" width="10.60" height="1.60" fill-opacity="0.278"/><rect x="50.99" y="207.70" width="10.60" height="1.60" fill-opacity="0.438"/><rect x="61.59" y="207.70" width="10.60" height="1.60" fill-opacity="0.577"/><rect x="72.20" y="207.70" width="10.60" height="1.60" fill-opacity="0.698"/><rect x="82.80" y="207.70" width="774.09" height="1.60" fill-opacity="0.725"/><rect x="856.89" y="207.70" width="10.60" height="1.60" fill-opacity="0.698"/><rect x="867.50" y="207.70" width="10.60" height="1.60" fill-opacity="0.577"/><rect x="878.10" y="207.70" width="10.60" height="1.60" fill-opacity="0.438"/><rect x="888.70" y="207.70" width="10.60" height="1.60" fill-opacity="0.278"/><rect x="899.31" y="207.70" width="10.60" height="1.60" fill-opacity="0.098"/><rect x="29.78" y="218.70" width="10.60" height="1.60" fill-opacity="0.098"/><rect x="40.38" y="218.70" width="10.60" height="1.60" fill-opacity="0.278"/><rect x="50.99" y="218.70" width="10.60" height="1.60" fill-opacity="0.438"/><rect x="61.59" y="218.70" width="10.60" height="1.60" fill-opacity="0.577"/><rect x="72.20" y="218.70" width="10.60" height="1.60" fill-opacity="0.698"/><rect x="82.80" y="218.70" width="774.09" height="1.60" fill-opacity="0.75"/><rect x="856.89" y="218.70" width="10.60" height="1.60" fill-opacity="0.698"/><rect x="867.50" y="218.70" width="10.60" height="1.60" fill-opacity="0.577"/><rect x="878.10" y="218.70" width="10.60" height="1.60" fill-opacity="0.438"/><rect x="888.70" y="218.70" width="10.60" height="1.60" fill-opacity="0.278"/><rect x="899.31" y="218.70" width="10.60" height="1.60" fill-opacity="0.098"/><rect x="29.78" y="229.70" width="10.60" height="1.60" fill-opacity="0.098"/><rect x="40.38" y="229.70" width="10.60" height="1.60" fill-opacity="0.278"/><rect x="50.99" y="229.70" width="10.60" height="1.60" fill-opacity="0.438"/><rect x="61.59" y="229.70" width="10.60" height="1.60" fill-opacity="0.577"/><rect x="72.20" y="229.70" width="10.60" height="1.60" fill-opacity="0.698"/><rect x="82.80" y="229.70" width="774.09" height="1.60" fill-opacity="0.75"/><rect x="856.89" y="229.70" width="10.60" height="1.60" fill-opacity="0.698"/><rect x="867.50" y="229.70" width="10.60" height="1.60" fill-opacity="0.577"/><rect x="878.10" y="229.70" width="10.60" height="1.60" fill-opacity="0.438"/><rect x="888.70" y="229.70" width="10.60" height="1.60" fill-opacity="0.278"/><rect x="899.31" y="229.70" width="10.60" height="1.60" fill-opacity="0.098"/><rect x="29.78" y="239.70" width="10.60" height="1.60" fill-opacity="0.098"/><rect x="40.38" y="239.70" width="10.60" height="1.60" fill-opacity="0.278"/><rect x="50.99" y="239.70" width="10.60" height="1.60" fill-opacity="0.438"/><rect x="61.59" y="239.70" width="10.60" height="1.60" fill-opacity="0.577"/><rect x="72.20" y="239.70" width="10.60" height="1.60" fill-opacity="0.698"/><rect x="82.80" y="239.70" width="774.09" height="1.60" fill-opacity="0.75"/><rect x="856.89" y="239.70" width="10.60" height="1.60" fill-opacity="0.698"/><rect x="867.50" y="239.70" width="10.60" height="1.60" fill-opacity="0.577"/><rect x="878.10" y="239.70" width="10.60" height="1.60" fill-opacity="0.438"/><rect x="888.70" y="239.70" width="10.60" height="1.60" fill-opacity="0.278"/><rect x="899.31" y="239.70" width="10.60" height="1.60" fill-opacity="0.098"/><rect x="29.78" y="250.70" width="10.60" height="1.60" fill-opacity="0.098"/><rect x="40.38" y="250.70" width="10.60" height="1.60" fill-opacity="0.278"/><rect x="50.99" y="250.70" width="10.60" height="1.60" fill-opacity="0.438"/><rect x="61.59" y="250.70" width="10.60" height="1.60" fill-opacity="0.577"/><rect x="72.20" y="250.70" width="10.60" height="1.60" fill-opacity="0.698"/><rect x="82.80" y="250.70" width="774.09" height="1.60" fill-opacity="0.75"/><rect x="856.89" y="250.70" width="10.60" height="1.60" fill-opacity="0.698"/><rect x="867.50" y="250.70" width="10.60" height="1.60" fill-opacity="0.577"/><rect x="878.10" y="250.70" width="10.60" height="1.60" fill-opacity="0.438"/><rect x="888.70" y="250.70" width="10.60" height="1.60" fill-opacity="0.278"/><rect x="899.31" y="250.70" width="10.60" height="1.60" fill-opacity="0.098"/><rect x="29.78" y="261.70" width="10.60" height="1.60" fill-opacity="0.098"/><rect x="40.38" y="261.70" width="10.60" height="1.60" fill-opacity="0.278"/><rect x="50.99" y="261.70" width="10.60" height="1.60" fill-opacity="0.438"/><rect x="61.59" y="261.70" width="10.60" height="1.60" fill-opacity="0.577"/><rect x="72.20" y="261.70" width="10.60" height="1.60" fill-opacity="0.698"/><rect x="82.80" y="261.70" width="774.09" height="1.60" fill-opacity="0.75"/><rect x="856.89" y="261.70" width="10.60" height="1.60" fill-opacity="0.698"/><rect x="867.50" y="261.70" width="10.60" height="1.60" fill-opacity="0.577"/><rect x="878.10" y="261.70" width="10.60" height="1.60" fill-opacity="0.438"/><rect x="888.70" y="261.70" width="10.60" height="1.60" fill-opacity="0.278"/><rect x="899.31" y="261.70" width="10.60" height="1.60" fill-opacity="0.098"/><rect x="29.78" y="271.70" width="10.60" height="1.60" fill-opacity="0.098"/><rect x="40.38" y="271.70" width="10.60" height="1.60" fill-opacity="0.278"/><rect x="50.99" y="271.70" width="10.60" height="1.60" fill-opacity="0.438"/><rect x="61.59" y="271.70" width="10.60" height="1.60" fill-opacity="0.577"/><rect x="72.20" y="271.70" width="10.60" height="1.60" fill-opacity="0.698"/><rect x="82.80" y="271.70" width="774.09" height="1.60" fill-opacity="0.75"/><rect x="856.89" y="271.70" width="10.60" height="1.60" fill-opacity="0.698"/><rect x="867.50" y="271.70" width="10.60" height="1.60" fill-opacity="0.577"/><rect x="878.10" y="271.70" width="10.60" height="1.60" fill-opacity="0.438"/><rect x="888.70" y="271.70" width="10.60" height="1.60" fill-opacity="0.278"/><rect x="899.31" y="271.70" width="10.60" height="1.60" fill-opacity="0.098"/><rect x="29.78" y="282.70" width="10.60" height="1.60" fill-opacity="0.098"/><rect x="40.38" y="282.70" width="10.60" height="1.60" fill-opacity="0.278"/><rect x="50.99" y="282.70" width="10.60" height="1.60" fill-opacity="0.438"/><rect x="61.59" y="282.70" width="10.60" height="1.60" fill-opacity="0.577"/><rect x="72.20" y="282.70" width="10.60" height="1.60" fill-opacity="0.698"/><rect x="82.80" y="282.70" width="774.09" height="1.60" fill-opacity="0.75"/><rect x="856.89" y="282.70" width="10.60" height="1.60" fill-opacity="0.698"/><rect x="867.50" y="282.70" width="10.60" height="1.60" fill-opacity="0.577"/><rect x="878.10" y="282.70" width="10.60" height="1.60" fill-opacity="0.438"/><rect x="888.70" y="282.70" width="10.60" height="1.60" fill-opacity="0.278"/><rect x="899.31" y="282.70" width="10.60" height="1.60" fill-opacity="0.098"/><rect x="29.78" y="292.70" width="10.60" height="1.60" fill-opacity="0.098"/><rect x="40.38" y="292.70" width="10.60" height="1.60" fill-opacity="0.278"/><rect x="50.99" y="292.70" width="10.60" height="1.60" fill-opacity="0.438"/><rect x="61.59" y="292.70" width="10.60" height="1.60" fill-opacity="0.577"/><rect x="72.20" y="292.70" width="10.60" height="1.60" fill-opacity="0.698"/><rect x="82.80" y="292.70" width="774.09" height="1.60" fill-opacity="0.75"/><rect x="856.89" y="292.70" width="10.60" height="1.60" fill-opacity="0.698"/><rect x="867.50" y="292.70" width="10.60" height="1.60" fill-opacity="0.577"/><rect x="878.10" y="292.70" width="10.60" height="1.60" fill-opacity="0.438"/><rect x="888.70" y="292.70" width="10.60" height="1.60" fill-opacity="0.278"/><rect x="899.31" y="292.70" width="10.60" height="1.60" fill-opacity="0.098"/><rect x="29.78" y="303.70" width="10.60" height="1.60" fill-opacity="0.098"/><rect x="40.38" y="303.70" width="10.60" height="1.60" fill-opacity="0.278"/><rect x="50.99" y="303.70" width="10.60" height="1.60" fill-opacity="0.438"/><rect x="61.59" y="303.70" width="10.60" height="1.60" fill-opacity="0.577"/><rect x="72.20" y="303.70" width="10.60" height="1.60" fill-opacity="0.698"/><rect x="82.80" y="303.70" width="774.09" height="1.60" fill-opacity="0.75"/><rect x="856.89" y="303.70" width="10.60" height="1.60" fill-opacity="0.698"/><rect x="867.50" y="303.70" width="10.60" height="1.60" fill-opacity="0.577"/><rect x="878.10" y="303.70" width="10.60" height="1.60" fill-opacity="0.438"/><rect x="888.70" y="303.70" width="10.60" height="1.60" fill-opacity="0.278"/><rect x="899.31" y="303.70" width="10.60" height="1.60" fill-opacity="0.098"/><rect x="29.78" y="314.70" width="10.60" height="1.60" fill-opacity="0.098"/><rect x="40.38" y="314.70" width="10.60" height="1.60" fill-opacity="0.278"/><rect x="50.99" y="314.70" width="10.60" height="1.60" fill-opacity="0.438"/><rect x="61.59" y="314.70" width="10.60" height="1.60" fill-opacity="0.577"/><rect x="72.20" y="314.70" width="10.60" height="1.60" fill-opacity="0.698"/><rect x="82.80" y="314.70" width="774.09" height="1.60" fill-opacity="0.75"/><rect x="856.89" y="314.70" width="10.60" height="1.60" fill-opacity="0.698"/><rect x="867.50" y="314.70" width="10.60" height="1.60" fill-opacity="0.577"/><rect x="878.10" y="314.70" width="10.60" height="1.60" fill-opacity="0.438"/><rect x="888.70" y="314.70" width="10.60" height="1.60" fill-opacity="0.278"/><rect x="899.31" y="314.70" width="10.60" height="1.60" fill-opacity="0.098"/><rect x="29.78" y="324.70" width="10.60" height="1.60" fill-opacity="0.098"/><rect x="40.38" y="324.70" width="10.60" height="1.60" fill-opacity="0.278"/><rect x="50.99" y="324.70" width="10.60" height="1.60" fill-opacity="0.438"/><rect x="61.59" y="324.70" width="10.60" height="1.60" fill-opacity="0.577"/><rect x="72.20" y="324.70" width="10.60" height="1.60" fill-opacity="0.698"/><rect x="82.80" y="324.70" width="774.09" height="1.60" fill-opacity="0.725"/><rect x="856.89" y="324.70" width="10.60" height="1.60" fill-opacity="0.698"/><rect x="867.50" y="324.70" width="10.60" height="1.60" fill-opacity="0.577"/><rect x="878.10" y="324.70" width="10.60" height="1.60" fill-opacity="0.438"/><rect x="888.70" y="324.70" width="10.60" height="1.60" fill-opacity="0.278"/><rect x="899.31" y="324.70" width="10.60" height="1.60" fill-opacity="0.098"/><rect x="29.78" y="335.70" width="10.60" height="1.60" fill-opacity="0.098"/><rect x="40.38" y="335.70" width="10.60" height="1.60" fill-opacity="0.278"/><rect x="50.99" y="335.70" width="10.60" height="1.60" fill-opacity="0.438"/><rect x="61.59" y="335.70" width="10.60" height="1.60" fill-opacity="0.577"/><rect x="72.20" y="335.70" width="795.30" height="1.60" fill-opacity="0.642"/><rect x="867.50" y="335.70" width="10.60" height="1.60" fill-opacity="0.577"/><rect x="878.10" y="335.70" width="10.60" height="1.60" fill-opacity="0.438"/><rect x="888.70" y="335.70" width="10.60" height="1.60" fill-opacity="0.278"/><rect x="899.31" y="335.70" width="10.60" height="1.60" fill-opacity="0.098"/><rect x="29.78" y="346.70" width="10.60" height="1.60" fill-opacity="0.098"/><rect x="40.38" y="346.70" width="10.60" height="1.60" fill-opacity="0.278"/><rect x="50.99" y="346.70" width="10.60" height="1.60" fill-opacity="0.438"/><rect x="61.59" y="346.70" width="816.51" height="1.60" fill-opacity="0.512"/><rect x="878.10" y="346.70" width="10.60" height="1.60" fill-opacity="0.438"/><rect x="888.70" y="346.70" width="10.60" height="1.60" fill-opacity="0.278"/><rect x="899.31" y="346.70" width="10.60" height="1.60" fill-opacity="0.098"/><rect x="29.78" y="356.70" width="10.60" height="1.60" fill-opacity="0.098"/><rect x="40.38" y="356.70" width="10.60" height="1.60" fill-opacity="0.278"/><rect x="50.99" y="356.70" width="837.72" height="1.60" fill-opacity="0.363"/><rect x="888.70" y="356.70" width="10.60" height="1.60" fill-opacity="0.278"/><rect x="899.31" y="356.70" width="10.60" height="1.60" fill-opacity="0.098"/><rect x="29.78" y="367.70" width="10.60" height="1.60" fill-opacity="0.098"/><rect x="40.38" y="367.70" width="858.92" height="1.60" fill-opacity="0.193"/><rect x="899.31" y="367.70" width="10.60" height="1.60" fill-opacity="0.098"/><rect x="29.78" y="377.70" width="880.13" height="1.60" fill-opacity="0.05"/></g>
<rect x="0" y="468" width="1024" height="4.5" fill="#5a5a5a"/>
<rect x="272.5" y="466.7" width="564.5" height="5.8" rx="2.9" fill="#909090"/>
</svg>
</div>
<div class="abs" style="left:0;top:473px;width:1024px;height:6px;background:#111318"></div><div class="abs" style="left:0;top:472px;width:1024px;height:2px;background:#58534f"></div><div class="abs" style="left:0;top:473.5px;width:1024px;height:1.8px;background:#70a8dc"></div><div class="abs" style="left:0;top:475.3px;width:1024px;height:0.9px;background:#304050"></div>
<div class="abs" style="left:0;top:477px;width:1024px;height:2px;background:#1d2129"></div>
<!-- toolbar -->
<div class="abs" style="left:0;top:479px;width:1024px;height:40px;background:#383e4b"></div>
<div class="abs" style="left:-10px;top:485px;width:64px;height:30px;background:#262b35;border-radius:3px"></div>
<div class="txt" style="left:-1px;top:492px;color:#8e939b">errains</div>
<div class="abs" style="left:148px;top:485px;width:27px;height:30px;background:#262b35;border-radius:3px"></div>
<div class="abs" style="left:210px;top:485px;width:2px;height:30px;background:#464c56"></div>
<div class="abs" style="left:280px;top:485px;width:2px;height:30px;background:#464c56"></div>
<div class="abs" style="left:412px;top:485px;width:2px;height:30px;background:#464c56"></div>
<div class="abs" style="left:815px;top:485px;width:194px;height:30px;background:#242933;border-radius:3px"></div>
<div class="txt" style="left:821.5px;top:491.5px;color:#d6d8db">Layer0</div>
<svg class="abs" style="left:0;top:479px" width="1024" height="40" viewBox="0 479 1024 40">
<g fill="#ececec" stroke="none">
<polygon points="66,494 77.3,498.4 73.2,500.2 76.9,503.9 75.6,505.2 71.9,501.5 70.1,505"/>
<path d="M101,494.3 a2.3,1.6 0 0 1 4.6,0 v2 h-4.6z"/>
<path d="M101,497.3 h4.6 v6.3 l-2.3,2.6 l-2.3,-2.6z M102.4,498.6 v4.6 h1.2 v-4.6z" fill-rule="evenodd"/>
<line x1="128.4" y1="503.6" x2="136.4" y2="495.8" stroke="#ececec" stroke-width="2" stroke-linecap="round"/>
<rect x="154.8" y="495.8" width="12.6" height="8.2" fill="none" stroke="#72c6f0" stroke-width="2"/>
<polygon points="192.4,494.2 196.8,498.7 190.3,505.5 185.4,501"/>
<circle cx="188.2" cy="495.3" r="1.8" fill="none" stroke="#a9a9a9" stroke-width="1.3"/>
<path d="M197.4,500.5 l1.8,2.2 a1.6,1.6 0 1 1 -3.6,0z"/>
<path d="M229.1,497.2 L229.1,494.9 A1.9,1.9 0 0 1 232.9,494.9 L232.9,497.2Z"/><rect x="228.1" y="497" width="5.8" height="1.8"/><path d="M229.2,498.6 h3.6 v6.4 l-1.2,1.5 v1 h-1.2 v-1 l-1.2,-1.5z M230.4,499.6 v5.2 h1.2 v-5.2z" fill-rule="evenodd"/>
<path d="M263.9,493.8 l5.1,4.8 l-7.9,7.7 h-2.6 l-3.5,-3.6 z M256.9,502.5 l2.2,2.2 h1.6 l1.8,-1.8 l-2.2,-2.2z" fill-rule="evenodd"/>
<path d="M300.3,505 A5,5 0 1 0 296.6,499.6" fill="none" stroke="#ececec" stroke-width="2.3"/>
<polygon points="293.8,499.3 300.2,499.3 297,503.3"/>
<path d="M331.9,505 A5,5 0 1 1 335.6,499.6" fill="none" stroke="#ececec" stroke-width="2.3"/>
<polygon points="332.2,499.3 338.6,499.3 335.4,503.3"/>
<path d="M355.4,499.7 l3.6,-3.4 v2.2 h8 v-2.2 l3.6,3.4 l-3.6,3.4 v-2.2 h-8 v2.2z"/>
<path d="M394,492.8 l3.6,3.6 h-2.5 v7 h2.5 l-3.6,3.6 l-3.6,-3.6 h2.5 v-7 h-2.5z"/>
<rect x="425.8" y="492.8" width="14.2" height="14.2" rx="2.6"/>
<circle cx="429.3" cy="496.1" r="1.65" fill="#262b35"/><circle cx="432.9" cy="499.9" r="1.65" fill="#262b35"/><circle cx="436.5" cy="503.5" r="1.65" fill="#262b35"/>
<path d="M995.3,497.3 l4.3,4.3 l4.3,-4.3" fill="none" stroke="#ececec" stroke-width="2"/>
<path d="M1020.5,499 l3,-3 l3,3" fill="none" stroke="#c8c8c8" stroke-width="1.6"/>
</g>
</svg>
<!-- bottom panel -->
<div class="abs" style="left:0;top:519px;width:1024px;height:199px;background:#383e4b"></div>
<div class="abs" style="left:-6px;top:519px;width:129px;height:182.8px;background:#252b35;border-radius:3px"></div>
<div class="abs" style="left:-6px;top:523px;width:125.5px;height:68px;background:#3c5570;border-radius:3px"></div>
<div class="txt" style="left:-3.5px;top:548.7px;color:#e4e6e9">ong</div>
<div class="abs" style="left:127px;top:519px;width:897px;height:199px;background:#252b35"></div>
<svg class="abs" style="left:0;top:519px" width="1024" height="199" viewBox="0 519 1024 199">
<g fill="#ececec">
<circle cx="142.7" cy="535.8" r="6.9"/><rect x="139.2" y="534.8" width="7" height="2" fill="#252b35"/>
<circle cx="232" cy="535.8" r="6.9"/><rect x="228.5" y="534.8" width="7" height="2" fill="#252b35"/><rect x="231" y="532.3" width="2" height="7" fill="#252b35"/>
<path d="M105.8,710.5 l-3.3,3.6 h2.3 v4 h2 v-4 h2.3z"/>
<rect x="110.7" y="712" width="6.3" height="1.8"/>
</g>
<rect x="417" y="562.3" width="138.3" height="110.2" fill="#2aa94c"/>
<g fill="#b97a56"><path d="M425.74 567.20h1.77v1.81h-1.77zM457.64 567.20h5.32v1.81h-5.32zM423.97 568.97h5.32v1.81h-5.32zM455.87 568.97h10.63v1.81h-10.63zM468.27 568.97h3.54v1.81h-3.54zM425.74 570.74h5.32v1.81h-5.32zM436.38 570.74h1.77v1.81h-1.77zM439.92 570.74h1.77v1.81h-1.77zM445.24 570.74h1.77v1.81h-1.77zM452.32 570.74h21.26v1.81h-21.26zM485.99 570.74h1.77v1.81h-1.77zM489.54 570.74h3.54v1.81h-3.54zM425.74 572.52h67.34v1.81h-67.34zM425.74 574.29h65.56v1.81h-65.56zM427.52 576.06h63.79v1.81h-63.79zM427.52 577.83h62.02v1.81h-62.02zM427.52 579.60h62.02v1.81h-62.02zM427.52 581.38h62.02v1.81h-62.02zM427.52 583.15h63.79v1.81h-63.79zM425.74 584.92h65.56v1.81h-65.56zM425.74 586.69h65.56v1.81h-65.56zM427.52 588.46h62.02v1.81h-62.02zM425.74 590.24h65.56v1.81h-65.56zM425.74 592.01h65.56v1.81h-65.56zM425.74 593.78h67.34v1.81h-67.34zM425.74 595.55h65.56v1.81h-65.56zM423.97 597.32h67.34v1.81h-67.34zM423.97 599.10h69.11v1.81h-69.11zM422.20 600.87h70.88v1.81h-70.88zM422.20 602.64h69.11v1.81h-69.11zM422.20 604.41h67.34v1.81h-67.34zM422.20 606.18h67.34v1.81h-67.34zM423.97 607.96h65.56v1.81h-65.56zM422.20 609.73h67.34v1.81h-67.34zM422.20 611.50h69.11v1.81h-69.11zM422.20 613.27h67.34v1.81h-67.34zM422.20 615.04h67.34v1.81h-67.34zM422.20 616.82h67.34v1.81h-67.34zM422.20 618.59h69.11v1.81h-69.11zM422.20 620.36h69.11v1.81h-69.11zM422.20 622.13h69.11v1.81h-69.11zM422.20 623.90h69.11v1.81h-69.11zM422.20 625.68h70.88v1.81h-70.88zM422.20 627.45h70.88v1.81h-70.88zM422.20 629.22h72.65v1.81h-72.65zM422.20 630.99h72.65v1.81h-72.65zM422.20 632.76h72.65v1.81h-72.65zM422.20 634.54h10.63v1.81h-10.63zM434.60 634.54h1.77v1.81h-1.77zM448.78 634.54h1.77v1.81h-1.77zM452.32 634.54h3.54v1.81h-3.54zM461.18 634.54h1.77v1.81h-1.77zM464.73 634.54h3.54v1.81h-3.54zM475.36 634.54h5.32v1.81h-5.32zM489.54 634.54h1.77v1.81h-1.77zM423.97 636.31h7.09v1.81h-7.09z"/><path d="M505.57 567.40h14.18v1.81h-14.18zM505.57 569.17h14.18v1.81h-14.18zM505.57 570.94h14.18v1.81h-14.18zM505.57 572.72h12.40v1.81h-12.40zM503.80 574.49h14.18v1.81h-14.18zM503.80 576.26h14.18v1.81h-14.18zM503.80 578.03h14.18v1.81h-14.18zM503.80 579.80h14.18v1.81h-14.18zM503.80 581.58h14.18v1.81h-14.18zM503.80 583.35h14.18v1.81h-14.18zM510.89 585.12h7.09v1.81h-7.09zM512.66 586.89h3.54v1.81h-3.54z"/><path d="M508.37 595.90h1.77v1.81h-1.77zM511.92 595.90h3.54v1.81h-3.54zM508.37 597.67h10.63v1.81h-10.63zM506.60 599.44h12.40v1.81h-12.40zM506.60 601.22h14.18v1.81h-14.18zM506.60 602.99h14.18v1.81h-14.18zM506.60 604.76h12.40v1.81h-12.40zM508.37 606.53h8.86v1.81h-8.86zM510.14 608.30h8.86v1.81h-8.86zM510.14 610.08h10.63v1.81h-10.63zM510.14 611.85h10.63v1.81h-10.63zM510.14 613.62h8.86v1.81h-8.86zM510.14 615.39h8.86v1.81h-8.86zM510.14 617.16h8.86v1.81h-8.86zM508.37 618.94h10.63v1.81h-10.63zM506.60 620.71h14.18v1.81h-14.18zM506.60 622.48h14.18v1.81h-14.18zM508.37 624.25h12.40v1.81h-12.40zM508.37 626.02h12.40v1.81h-12.40zM508.37 627.80h12.40v1.81h-12.40zM510.14 629.57h10.63v1.81h-10.63zM510.14 631.34h10.63v1.81h-10.63zM510.14 633.11h8.86v1.81h-8.86zM510.14 634.88h8.86v1.81h-8.86zM510.14 636.66h8.86v1.81h-8.86zM510.14 638.43h8.86v1.81h-8.86zM510.14 640.20h10.63v1.81h-10.63zM510.14 641.97h10.63v1.81h-10.63zM508.37 643.74h12.40v1.81h-12.40zM508.37 645.52h12.40v1.81h-12.40zM508.37 647.29h12.40v1.81h-12.40zM508.37 649.06h10.63v1.81h-10.63zM506.60 650.83h10.63v1.81h-10.63zM506.60 652.60h10.63v1.81h-10.63zM506.60 654.38h10.63v1.81h-10.63zM506.60 656.15h12.40v1.81h-12.40zM506.60 657.92h12.40v1.81h-12.40zM506.60 659.69h10.63v1.81h-10.63zM508.37 661.46h8.86v1.81h-8.86z"/><path d="M528.97 567.60h1.77v1.81h-1.77zM537.83 567.60h3.54v1.81h-3.54zM528.97 569.37h3.54v1.81h-3.54zM536.06 569.37h8.86v1.81h-8.86zM527.20 571.14h15.95v1.81h-15.95zM527.20 572.92h15.95v1.81h-15.95zM528.97 574.69h14.18v1.81h-14.18zM528.97 576.46h14.18v1.81h-14.18zM528.97 578.23h14.18v1.81h-14.18zM528.97 580.00h14.18v1.81h-14.18zM530.74 581.78h12.40v1.81h-12.40zM530.74 583.55h12.40v1.81h-12.40zM528.97 585.32h14.18v1.81h-14.18zM528.97 587.09h15.95v1.81h-15.95zM527.20 588.86h19.49v1.81h-19.49z"/><path d="M541.90 586.00h3.54v1.81h-3.54zM533.04 587.77h1.77v1.81h-1.77zM538.36 587.77h7.09v1.81h-7.09zM533.04 589.54h12.40v1.81h-12.40zM531.27 591.32h15.95v1.81h-15.95zM529.50 593.09h17.72v1.81h-17.72zM529.50 594.86h15.95v1.81h-15.95zM529.50 596.63h15.95v1.81h-15.95zM529.50 598.40h15.95v1.81h-15.95zM529.50 600.18h15.95v1.81h-15.95zM529.50 601.95h17.72v1.81h-17.72zM529.50 603.72h17.72v1.81h-17.72zM529.50 605.49h17.72v1.81h-17.72zM529.50 607.26h12.40v1.81h-12.40zM545.45 607.26h3.54v1.81h-3.54zM529.50 609.04h7.09v1.81h-7.09z"/><path d="M540.59 617.60h3.54v1.81h-3.54zM549.45 617.60h3.54v1.81h-3.54zM538.82 619.37h15.95v1.81h-15.95zM535.27 621.14h19.49v1.81h-19.49zM533.50 622.92h21.26v1.81h-21.26zM533.50 624.69h21.26v1.81h-21.26zM533.50 626.46h21.26v1.81h-21.26zM533.50 628.23h21.26v1.81h-21.26zM535.27 630.00h19.49v1.81h-19.49zM535.27 631.78h17.72v1.81h-17.72zM533.50 633.55h17.72v1.81h-17.72zM533.50 635.32h17.72v1.81h-17.72zM533.50 637.09h17.72v1.81h-17.72zM535.27 638.86h7.09v1.81h-7.09zM545.90 638.86h3.54v1.81h-3.54z"/><path d="M427.52 649.80h12.40v1.81h-12.40zM447.01 649.80h1.77v1.81h-1.77zM450.55 649.80h7.09v1.81h-7.09zM459.41 649.80h7.09v1.81h-7.09zM425.74 651.57h15.95v1.81h-15.95zM443.46 651.57h23.04v1.81h-23.04zM423.97 653.34h42.53v1.81h-42.53zM422.20 655.12h44.30v1.81h-44.30zM423.97 656.89h42.53v1.81h-42.53zM423.97 658.66h40.76v1.81h-40.76zM423.97 660.43h38.98v1.81h-38.98zM425.74 662.20h19.49v1.81h-19.49zM461.18 662.20h3.54v1.81h-3.54zM431.06 663.98h12.40v1.81h-12.40z"/><path d="M539.79 650.00h8.86v1.81h-8.86zM550.42 650.00h1.77v1.81h-1.77zM534.47 651.77h19.49v1.81h-19.49zM532.70 653.54h21.26v1.81h-21.26zM534.47 655.32h19.49v1.81h-19.49zM536.24 657.09h17.72v1.81h-17.72zM534.47 658.86h17.72v1.81h-17.72zM532.70 660.63h19.49v1.81h-19.49zM532.70 662.40h19.49v1.81h-19.49zM532.70 664.18h19.49v1.81h-19.49zM532.70 665.95h19.49v1.81h-19.49zM534.47 667.72h17.72v1.81h-17.72zM539.79 669.49h1.77v1.81h-1.77zM545.10 669.49h3.54v1.81h-3.54z"/></g><g fill="#9a6244" fill-opacity="0.35"><rect x="455.40" y="607.39" width="1.77" height="3.54"/><rect x="456.27" y="604.01" width="1.77" height="3.54"/><rect x="438.00" y="604.27" width="1.77" height="3.54"/><rect x="477.54" y="577.12" width="3.54" height="1.77"/><rect x="431.89" y="623.63" width="1.77" height="3.54"/><rect x="428.72" y="634.84" width="1.77" height="3.54"/><rect x="468.50" y="611.01" width="3.54" height="1.77"/><rect x="426.98" y="605.34" width="3.54" height="1.77"/><rect x="438.36" y="586.73" width="3.54" height="1.77"/><rect x="456.16" y="599.63" width="1.77" height="3.54"/><rect x="459.74" y="612.62" width="3.54" height="1.77"/><rect x="469.06" y="600.73" width="3.54" height="1.77"/><rect x="490.85" y="635.72" width="1.77" height="3.54"/><rect x="472.01" y="591.49" width="3.54" height="1.77"/><rect x="444.79" y="575.56" width="1.77" height="3.54"/><rect x="452.03" y="626.03" width="3.54" height="1.77"/><rect x="488.27" y="626.08" width="3.54" height="1.77"/><rect x="439.63" y="630.17" width="3.54" height="1.77"/><rect x="489.72" y="596.83" width="3.54" height="1.77"/><rect x="466.91" y="621.60" width="3.54" height="1.77"/><rect x="431.66" y="592.62" width="1.77" height="3.54"/><rect x="475.27" y="578.67" width="3.54" height="1.77"/><rect x="432.57" y="574.89" width="1.77" height="3.54"/><rect x="437.55" y="607.35" width="3.54" height="1.77"/><rect x="438.39" y="618.57" width="3.54" height="1.77"/><rect x="467.84" y="578.57" width="3.54" height="1.77"/><rect x="439.84" y="588.54" width="1.77" height="3.54"/><rect x="478.22" y="590.77" width="1.77" height="3.54"/><rect x="439.70" y="596.63" width="1.77" height="3.54"/><rect x="467.72" y="577.52" width="1.77" height="3.54"/><rect x="439.86" y="587.79" width="1.77" height="3.54"/><rect x="447.38" y="590.26" width="3.54" height="1.77"/><rect x="431.86" y="608.88" width="3.54" height="1.77"/><rect x="465.08" y="595.16" width="3.54" height="1.77"/><rect x="488.34" y="602.44" width="1.77" height="3.54"/><rect x="482.32" y="582.88" width="3.54" height="1.77"/><rect x="485.05" y="624.16" width="3.54" height="1.77"/><rect x="438.34" y="619.06" width="1.77" height="3.54"/><rect x="438.78" y="632.76" width="1.77" height="3.54"/><rect x="465.23" y="598.39" width="3.54" height="1.77"/><rect x="428.52" y="633.57" width="3.54" height="1.77"/><rect x="471.80" y="587.70" width="1.77" height="3.54"/><rect x="464.77" y="590.07" width="3.54" height="1.77"/><rect x="472.82" y="575.47" width="3.54" height="1.77"/><rect x="462.36" y="626.41" width="1.77" height="3.54"/><rect x="444.21" y="630.63" width="3.54" height="1.77"/><rect x="427.08" y="588.50" width="3.54" height="1.77"/><rect x="429.93" y="582.46" width="3.54" height="1.77"/><rect x="463.19" y="579.55" width="3.54" height="1.77"/><rect x="483.91" y="634.73" width="1.77" height="3.54"/><rect x="470.93" y="608.99" width="3.54" height="1.77"/><rect x="428.28" y="572.16" width="1.77" height="3.54"/><rect x="471.56" y="633.58" width="3.54" height="1.77"/><rect x="467.35" y="602.35" width="1.77" height="3.54"/><rect x="446.73" y="635.96" width="3.54" height="1.77"/><rect x="461.50" y="618.91" width="1.77" height="3.54"/><rect x="473.91" y="616.74" width="1.77" height="3.54"/><rect x="485.48" y="593.87" width="1.77" height="3.54"/><rect x="484.55" y="627.62" width="3.54" height="1.77"/><rect x="477.38" y="627.13" width="1.77" height="3.54"/><rect x="466.62" y="595.85" width="1.77" height="3.54"/><rect x="465.58" y="576.21" width="1.77" height="3.54"/><rect x="490.57" y="628.19" width="1.77" height="3.54"/><rect x="451.25" y="618.78" width="1.77" height="3.54"/><rect x="454.63" y="625.49" width="3.54" height="1.77"/><rect x="474.76" y="572.94" width="1.77" height="3.54"/><rect x="457.26" y="585.96" width="1.77" height="3.54"/><rect x="458.32" y="610.94" width="1.77" height="3.54"/><rect x="442.63" y="571.73" width="3.54" height="1.77"/><rect x="470.08" y="584.17" width="3.54" height="1.77"/><rect x="517.87" y="580.24" width="3.54" height="1.77"/><rect x="517.70" y="575.58" width="1.77" height="3.54"/><rect x="509.38" y="577.03" width="1.77" height="3.54"/><rect x="517.97" y="583.32" width="3.54" height="1.77"/><rect x="514.00" y="575.43" width="3.54" height="1.77"/><rect x="513.96" y="653.41" width="1.77" height="3.54"/><rect x="516.11" y="660.75" width="3.54" height="1.77"/><rect x="510.69" y="628.29" width="3.54" height="1.77"/><rect x="511.14" y="625.91" width="1.77" height="3.54"/><rect x="513.94" y="619.50" width="1.77" height="3.54"/><rect x="518.82" y="628.41" width="3.54" height="1.77"/><rect x="509.31" y="655.73" width="3.54" height="1.77"/><rect x="516.09" y="636.09" width="3.54" height="1.77"/><rect x="516.92" y="600.24" width="3.54" height="1.77"/><rect x="513.55" y="600.61" width="1.77" height="3.54"/><rect x="511.37" y="608.16" width="3.54" height="1.77"/><rect x="515.29" y="628.02" width="1.77" height="3.54"/><rect x="515.55" y="651.48" width="1.77" height="3.54"/><rect x="515.84" y="611.96" width="3.54" height="1.77"/><rect x="533.04" y="571.41" width="3.54" height="1.77"/><rect x="542.14" y="577.81" width="3.54" height="1.77"/><rect x="535.88" y="597.50" width="1.77" height="3.54"/><rect x="540.45" y="599.74" width="3.54" height="1.77"/><rect x="543.46" y="605.44" width="3.54" height="1.77"/><rect x="545.85" y="598.45" width="3.54" height="1.77"/><rect x="537.71" y="594.77" width="1.77" height="3.54"/><rect x="536.41" y="592.61" width="1.77" height="3.54"/><rect x="543.55" y="606.88" width="3.54" height="1.77"/><rect x="541.07" y="578.79" width="1.77" height="3.54"/><rect x="550.09" y="631.55" width="1.77" height="3.54"/><rect x="540.41" y="636.20" width="1.77" height="3.54"/><rect x="552.64" y="629.67" width="1.77" height="3.54"/><rect x="542.13" y="636.38" width="1.77" height="3.54"/><rect x="542.58" y="621.49" width="3.54" height="1.77"/><rect x="545.80" y="633.83" width="3.54" height="1.77"/><rect x="426.08" y="661.71" width="3.54" height="1.77"/><rect x="455.39" y="654.07" width="3.54" height="1.77"/><rect x="454.94" y="653.69" width="3.54" height="1.77"/><rect x="444.63" y="660.68" width="1.77" height="3.54"/><rect x="451.20" y="663.35" width="3.54" height="1.77"/><rect x="461.07" y="653.03" width="3.54" height="1.77"/><rect x="445.01" y="655.48" width="1.77" height="3.54"/><rect x="449.28" y="658.27" width="1.77" height="3.54"/><rect x="545.52" y="658.30" width="3.54" height="1.77"/><rect x="550.37" y="668.31" width="3.54" height="1.77"/><rect x="550.46" y="669.46" width="1.77" height="3.54"/><rect x="545.74" y="656.42" width="1.77" height="3.54"/><rect x="544.55" y="663.29" width="3.54" height="1.77"/><rect x="552.48" y="661.77" width="3.54" height="1.77"/></g>
<g fill="#3ee46c"><rect x="417.00" y="562.20" width="138.30" height="1.8"/><rect x="417.00" y="670.80" width="138.30" height="1.8"/><rect x="416.90" y="562.30" width="1.8" height="110.20"/><rect x="553.60" y="562.30" width="1.8" height="110.20"/><rect x="499.00" y="562.30" width="1.8" height="110.20"/><rect x="525.70" y="562.30" width="1.8" height="110.20"/><rect x="499.90" y="589.80" width="28.60" height="1.8"/><rect x="526.60" y="615.90" width="28.70" height="1.8"/><rect x="417.00" y="643.70" width="82.90" height="1.8"/><rect x="526.60" y="643.70" width="28.70" height="1.8"/></g>
<rect x="472.8" y="645.4" width="27.1" height="26.6" fill="#ffffff"/>
</svg>
<div class="txt" style="left:163px;top:528.4px;color:#dfe1e4;font-size:13.4px">177.2 %</div>
<div class="txt" style="left:448.9px;top:536.4px">Grund-Tiles</div>
<div class="txt" style="left:567.7px;top:536.4px;letter-spacing:0.17px">Alternative Tiles</div>
</body></html>
